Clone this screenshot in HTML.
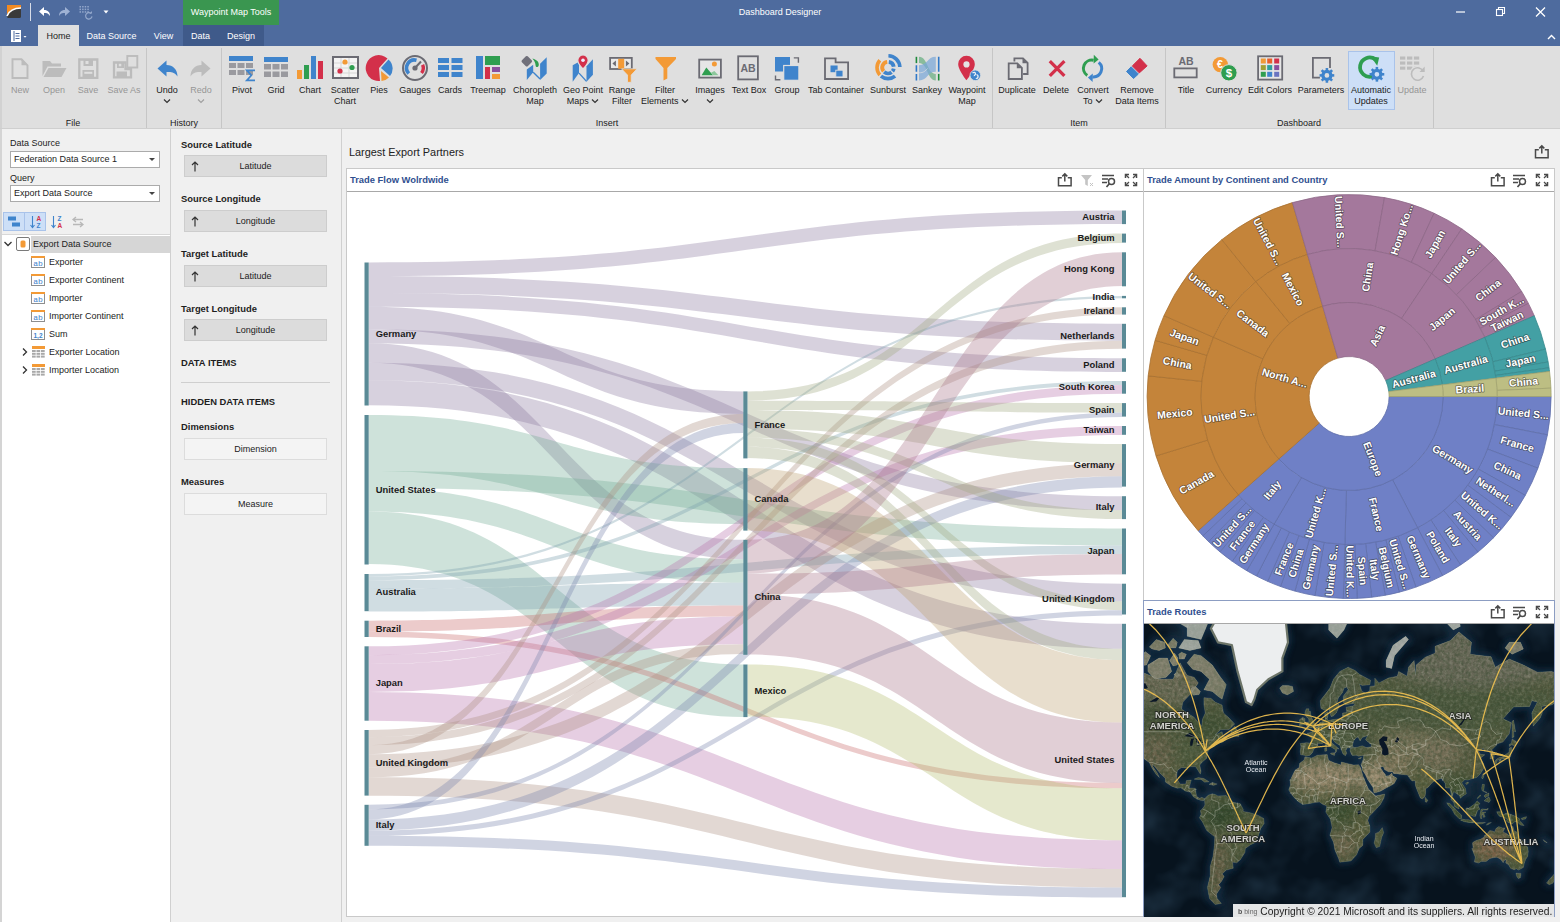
<!DOCTYPE html><html><head><meta charset="utf-8"><title>Dashboard Designer</title><style>
*{box-sizing:border-box;margin:0;padding:0}
html,body{width:1560px;height:922px;overflow:hidden;background:#f0f0f0;font-family:"Liberation Sans",sans-serif;font-size:9px;color:#222}
.abs{position:absolute}
#title{position:absolute;left:0;top:0;width:1560px;height:46px;background:#4e6b9e}
#title .apptitle{position:absolute;left:0;width:1560px;top:6.500px;text-align:center;color:#fff;font-size:9px}
#ctx{position:absolute;left:183px;top:0;width:96px;height:25px;background:#3a9650;color:#fff;text-align:center;line-height:25px;font-size:9px}
#ctxtabs{position:absolute;left:183px;top:25px;width:81px;height:21px;background:#3f5a8a}
.tab{position:absolute;top:25px;height:21px;line-height:22px;color:#fff;font-size:9px;text-align:center}
#hometab{position:absolute;left:38px;top:25px;width:41px;height:21px;background:#dfdfdf;color:#222;text-align:center;line-height:22px}
#ribbon{position:absolute;left:0;top:46px;width:1560px;height:82px;background:#dfdfdf;border-left:2px solid #d2d2d2}
#ribbonline{position:absolute;left:0;top:128px;width:1560px;height:1px;background:#cfcfcf}
.rb{position:absolute;top:0;text-align:center;font-size:9px;line-height:11px;color:#222;white-space:nowrap}
.rb.dis{color:#969696}
.rb svg{position:absolute;left:50%;margin-left:-16px;top:6px}
  .rb .lbl{position:absolute;left:-40px;right:-40px;top:39px;text-align:center;line-height:11px}
.gsep{position:absolute;top:48px;width:1px;height:80px;background:#c6c6c6}
.glbl{position:absolute;top:117.500px;font-size:9px;color:#222;text-align:center;width:100px;margin-left:-50px}
#leftp{position:absolute;left:0;top:129px;width:170px;height:793px;background:#f0f0f0;border-left:2px solid #d4d4d4}
#midp{position:absolute;left:171px;top:129px;width:170px;height:793px;background:#f0f0f0}
.vsep{position:absolute;top:129px;width:1px;height:793px;background:#d0d0d0}
.combo{position:absolute;left:10px;width:150px;height:17px;background:#fff;border:1px solid #ababab;line-height:15px;padding-left:3px;font-size:9px}
.combo:after{content:"";position:absolute;right:4px;top:6px;border:3px solid transparent;border-top:3px solid #444;border-bottom:0}
#tree{position:absolute;left:2px;top:234px;width:168px;height:688px;background:#fff;border-top:1px solid #d8d8d8}
.trow{position:absolute;left:0;height:18px;line-height:18px;font-size:9px;white-space:nowrap}
.sec{position:absolute;left:181px;font-weight:bold;font-size:9.400px;color:#1e1e1e}
.ditem{position:absolute;left:184px;width:143px;height:22px;background:#dcdcdc;border:1px solid #cdcdcd;text-align:center;line-height:20px;font-size:9px;color:#222}
.ditem.ph{background:#f4f4f4;border:1px solid #dcdcdc}
.panel{position:absolute;background:#fff;border:1px solid #c9c9c9}
.ptitle{position:absolute;left:3px;top:4.800px;font-weight:bold;font-size:9.400px;color:#30508f;white-space:nowrap}
.phead{position:absolute;left:0;top:0;right:0;height:23px;border-bottom:1px solid #a8a8a8;background:#fff}

.sk{font:bold 9.400px "Liberation Sans",sans-serif;fill:#1a1a1a}
.sb{font:bold 10.500px "Liberation Sans",sans-serif;fill:#fff;paint-order:stroke;stroke:rgba(40,40,40,.55);stroke-width:1.600px;stroke-linejoin:round}
.mbig{font:bold 9.500px "Liberation Sans",sans-serif;fill:#d0d0cc;paint-order:stroke;stroke:rgba(30,30,30,.7);stroke-width:1.800px;letter-spacing:0}
.msm{font:7px "Liberation Sans",sans-serif;fill:#e8ecf2}
</style></head><body>
<div id="title"><div class="apptitle">Dashboard Designer</div></div>
<div id="ctx">Waypoint Map Tools</div><div id="ctxtabs"></div>
<div id="hometab">Home</div>
<div class="tab" style="left:80px;width:63px">Data Source</div>
<div class="tab" style="left:145px;width:37px">View</div>
<div class="tab" style="left:183px;width:35px">Data</div>
<div class="tab" style="left:218px;width:46px">Design</div>
<svg class="abs" style="left:0;top:0" width="130" height="46" viewBox="0 0 130 46"><rect x="7" y="5" width="14" height="13" rx="1.500" fill="#3a3a3a"/><path d="M7 5h14v3C13 8 9 11 7 15z" fill="#f28a22"/><path d="M7 16c2-5 7-8 14-8" fill="none" stroke="#fff" stroke-width="1.600"/><rect x="30" y="3" width="1" height="18" fill="#d8dde8"/><path d="M39 11.500l5-4.500v3c4 0 6 2.500 6 6-1.500-2.500-3-3-6-3v3z" fill="#fff"/><path d="M70 11.500l-5-4.500v3c-4 0-6 2.500-6 6 1.500-2.500 3-3 6-3v3z" fill="#9fb2d4"/><rect x="79.5" y="6.0" width="1.500" height="1.500" fill="#93a7cb"/><rect x="82.1" y="6.0" width="1.500" height="1.500" fill="#93a7cb"/><rect x="84.7" y="6.0" width="1.500" height="1.500" fill="#93a7cb"/><rect x="87.3" y="6.0" width="1.500" height="1.500" fill="#93a7cb"/><rect x="79.5" y="8.6" width="1.500" height="1.500" fill="#93a7cb"/><rect x="82.1" y="8.6" width="1.500" height="1.500" fill="#93a7cb"/><rect x="84.7" y="8.6" width="1.500" height="1.500" fill="#93a7cb"/><rect x="87.3" y="8.6" width="1.500" height="1.500" fill="#93a7cb"/><rect x="79.5" y="11.2" width="1.500" height="1.500" fill="#93a7cb"/><rect x="82.1" y="11.2" width="1.500" height="1.500" fill="#93a7cb"/><rect x="84.7" y="11.2" width="1.500" height="1.500" fill="#93a7cb"/><rect x="87.3" y="11.2" width="1.500" height="1.500" fill="#93a7cb"/><path d="M91 13.500a3.200 3.200 0 1 0 1 2.800" fill="none" stroke="#93a7cb" stroke-width="1.200"/><path d="M89.500 13.500h2.500v-2.500z" fill="#93a7cb"/><path d="M103.500 10.500h5l-2.500 3z" fill="#fff"/><rect x="11.500" y="30.500" width="9" height="11" fill="#fff" stroke="#fff"/><path d="M14 31v10M15.500 33.500h4M15.500 36h4M15.500 38.500h4" stroke="#4e6b9e" stroke-width="1"/><path d="M23.500 36h3l-1.500 1.800z" fill="#fff"/></svg>
<svg class="abs" style="left:1440px;top:0" width="120" height="46" viewBox="0 0 120 46"><path d="M16 12h9" stroke="#fff" stroke-width="1.200"/><rect x="56.500" y="9.500" width="6" height="6" fill="none" stroke="#fff" stroke-width="1.100"/><path d="M58.500 9.500v-2h6v6h-2" fill="none" stroke="#fff" stroke-width="1.100"/><path d="M96 7.500l9 9M105 7.500l-9 9" stroke="#fff" stroke-width="1.300"/><path d="M108 39l3.500-3.500L115 39" fill="none" stroke="#fff" stroke-width="1.400"/></svg>
<div id="ribbon"><div class="abs" style="left:1346px;top:5px;width:47px;height:59px;background:#cddff7;border:1px solid #a9c3ea"></div>
<div class="rb dis" style="left:18px;width:0"><svg width="32" height="32" viewBox="0 0 32 32"><path d="M8.5 7.300h9l6 6v12.700H8.5z" fill="none" stroke="#bcbcbc" stroke-width="1.900"/><path d="M17.500 7.300v6h6z" fill="#bcbcbc"/></svg><div class="lbl">New</div></div>
<div class="rb dis" style="left:52px;width:0"><svg width="32" height="32" viewBox="0 0 32 32"><path d="M4.500 9h7.500l2 2.500h9v3H9.500l-5 9.500z" fill="#bcbcbc"/><path d="M10.500 16h18l-5 9H5.500z" fill="#bcbcbc"/></svg><div class="lbl">Open</div></div>
<div class="rb dis" style="left:86px;width:0"><svg width="32" height="32" viewBox="0 0 32 32"><path d="M7.300 7.500h18v18.300h-18z" fill="none" stroke="#bcbcbc" stroke-width="2.300"/><rect x="11.500" y="7.500" width="9.500" height="6.500" fill="#bcbcbc"/><rect x="13.500" y="9" width="3" height="3" fill="#dfdfdf"/><rect x="10.500" y="18" width="11.500" height="7.800" fill="#bcbcbc"/><rect x="12.300" y="19.800" width="8" height="2" fill="#dfdfdf"/></svg><div class="lbl">Save</div></div>
<div class="rb dis" style="left:122px;width:0"><svg width="32" height="32" viewBox="0 0 32 32"><path d="M6 10.500h11.500v6.500h5.500v8.300H6z" fill="none" stroke="#bcbcbc" stroke-width="2.300"/><rect x="9" y="10.500" width="7" height="5.500" fill="#bcbcbc"/><rect x="10.800" y="11.800" width="2.500" height="2.500" fill="#dfdfdf"/><rect x="8.500" y="19.500" width="10.500" height="6" fill="#bcbcbc"/><rect x="19.300" y="4" width="10" height="11.500" fill="none" stroke="#bcbcbc" stroke-width="1.900"/></svg><div class="lbl">Save As</div></div>
<div class="rb" style="left:165px;width:0"><svg width="32" height="32" viewBox="0 0 32 32"><path d="M6.500 16.500L15.500 8.500V13C22 13 26.500 17.500 26.500 24.500C23.500 20 20.500 19.700 15.500 20V24.500Z" fill="#3f84cc"/></svg><div class="lbl">Undo<br><svg width="8" height="6" viewBox="0 0 8 6" style="position:static;margin:0;display:inline-block;vertical-align:0px"><path d="M1 1.500l3 3 3-3" fill="none" stroke="#333" stroke-width="1.200"/></svg></div></div>
<div class="rb dis" style="left:199px;width:0"><svg width="32" height="32" viewBox="0 0 32 32"><path d="M25.500 16.500L16.500 8.500V13C10 13 5.500 17.500 5.500 24.500C8.500 20 11.500 19.700 16.500 20V24.500Z" fill="#bcbcbc"/></svg><div class="lbl">Redo<br><svg width="8" height="6" viewBox="0 0 8 6" style="position:static;margin:0;display:inline-block;vertical-align:0px"><path d="M1 1.500l3 3 3-3" fill="none" stroke="#a0a0a0" stroke-width="1.200"/></svg></div></div>
<div class="rb" style="left:240px;width:0"><svg width="32" height="32" viewBox="0 0 32 32"><rect x="3" y="4" width="24" height="5" fill="#3f84cc"/><rect x="3.0" y="11" width="7" height="5" fill="#9a9a9f"/><rect x="11.5" y="11" width="7" height="5" fill="#9a9a9f"/><rect x="20.0" y="11" width="7" height="5" fill="#9a9a9f"/><rect x="3.0" y="18" width="7" height="5" fill="#9a9a9f"/><rect x="11.5" y="18" width="7" height="5" fill="#9a9a9f"/><rect x="20.0" y="18" width="7" height="5" fill="#9a9a9f"/><rect x="3" y="25" width="7" height="0" fill="#9a9a9f"/><path d="M29 18.300H20.800l4.600 5-4.600 5H29" fill="none" stroke="#3f84cc" stroke-width="1.700"/></svg><div class="lbl">Pivot</div></div>
<div class="rb" style="left:274px;width:0"><svg width="32" height="32" viewBox="0 0 32 32"><rect x="4" y="5" width="24" height="5" fill="#3f84cc"/><rect x="4.0" y="12.0" width="7" height="5.500" fill="#9a9a9f"/><rect x="12.5" y="12.0" width="7" height="5.500" fill="#9a9a9f"/><rect x="21.0" y="12.0" width="7" height="5.500" fill="#9a9a9f"/><rect x="4.0" y="19.5" width="7" height="5.500" fill="#9a9a9f"/><rect x="12.5" y="19.5" width="7" height="5.500" fill="#9a9a9f"/><rect x="21.0" y="19.5" width="7" height="5.500" fill="#9a9a9f"/></svg><div class="lbl">Grid</div></div>
<div class="rb" style="left:308px;width:0"><svg width="32" height="32" viewBox="0 0 32 32"><rect x="3" y="18" width="5" height="9" fill="#f39a36"/><rect x="10" y="13" width="5" height="14" fill="#2f9e50"/><rect x="17" y="4" width="5" height="23" fill="#3f84cc"/><rect x="24" y="9" width="5" height="18" fill="#d3304a"/></svg><div class="lbl">Chart</div></div>
<div class="rb" style="left:343px;width:0"><svg width="32" height="32" viewBox="0 0 32 32"><rect x="4" y="5" width="25" height="21" fill="#f4f4f4" stroke="#6b6b73" stroke-width="2"/><path d="M5 11h23M5 16h23M5 21h23M12 6v19M20 6v19" stroke="#d6d6d6" stroke-width="1"/><circle cx="16" cy="10" r="2.600" fill="#f39a36"/><circle cx="23" cy="15.500" r="2.600" fill="#2f9e50"/><circle cx="11" cy="19" r="2.600" fill="#d3304a"/></svg><div class="lbl">Scatter<br>Chart</div></div>
<div class="rb" style="left:377px;width:0"><svg width="32" height="32" viewBox="0 0 32 32"><path d="M16 16 L24.500 6.500 A13 13 0 1 0 17 29 Z" fill="#d3304a"/><path d="M18 16 L25.500 7.500 A12 12 0 0 1 27 24 Z" fill="#3f84cc"/><path d="M18 19 L26 25.500 A12 12 0 0 1 18.500 29 Z" fill="#f39a36"/></svg><div class="lbl">Pies</div></div>
<div class="rb" style="left:413px;width:0"><svg width="32" height="32" viewBox="0 0 32 32"><circle cx="16" cy="16" r="12" fill="none" stroke="#6b6b73" stroke-width="2"/><path d="M9.800 21.500 A8 8 0 0 1 17.500 8.200" fill="none" stroke="#3f84cc" stroke-width="3.600"/><path d="M23.600 12.800 A8 8 0 0 1 22.500 21" fill="none" stroke="#d3304a" stroke-width="3.400"/><circle cx="16" cy="16" r="2.600" fill="#6b6b73"/><path d="M16 16 L22 9.500" stroke="#6b6b73" stroke-width="2"/></svg><div class="lbl">Gauges</div></div>
<div class="rb" style="left:448px;width:0"><svg width="32" height="32" viewBox="0 0 32 32"><rect x="4.0" y="6" width="11" height="5" fill="#3f84cc"/><rect x="17.5" y="6" width="11" height="5" fill="#3f84cc"/><rect x="4.0" y="13" width="11" height="5" fill="#3f84cc"/><rect x="17.5" y="13" width="11" height="5" fill="#3f84cc"/><rect x="4.0" y="20" width="11" height="5" fill="#3f84cc"/><rect x="17.5" y="20" width="11" height="5" fill="#3f84cc"/></svg><div class="lbl">Cards</div></div>
<div class="rb" style="left:486px;width:0"><svg width="32" height="32" viewBox="0 0 32 32"><rect x="4" y="4" width="7" height="23" fill="#3f84cc"/><rect x="13" y="4" width="15" height="9" fill="#2f9e50"/><rect x="13" y="15" width="5" height="12" fill="#d3304a"/><rect x="20" y="15" width="8" height="5" fill="#8a4f9e"/><rect x="20" y="22" width="8" height="5" fill="#f39a36"/></svg><div class="lbl">Treemap</div></div>
<div class="rb" style="left:533px;width:0"><svg width="32" height="32" viewBox="0 0 32 32"><path d="M7.800 17.600L14.200 12.700V20.200L7.800 28z" fill="#3f84cc"/><path d="M14.200 20.200L21.100 26.900" stroke="#3f84cc" stroke-width="1.400" fill="none"/><path d="M21.100 11.800L27.700 5.200V21.400L21.100 28z" fill="#3f84cc"/><rect x="3.700" y="5.150" width="8.200" height="8.200" rx="1.300" fill="#70707a" transform="rotate(45 7.800 9.250)"/><path d="M13.400 6.400C18 7.500 20.500 10.500 19.700 13.500C19 15.800 16.800 15.500 16.600 13.500C16.500 11 15.500 8.500 13.400 6.400z" fill="#2f9e50"/></svg><div class="lbl">Choropleth<br>Map</div></div>
<div class="rb" style="left:581px;width:0"><svg width="32" height="32" viewBox="0 0 32 32"><path d="M5.700 13.300L12 9.800V21.100L5.700 29.700z" fill="#3f84cc"/><path d="M12 21.100L19.500 29.400" stroke="#3f84cc" stroke-width="1.400" fill="none"/><path d="M19.500 14.200L25.900 7.200V22.800L19.500 29.700z" fill="#3f84cc"/><path d="M16 3a5.200 5.200 0 0 1 5.200 5.200c0 3.500-5.200 8.800-5.200 8.800s-5.200-5.300-5.200-8.800A5.200 5.200 0 0 1 16 3z" fill="#d3304a" stroke="#dfdfdf" stroke-width="1.200"/><circle cx="16" cy="8.200" r="1.800" fill="#eef"/></svg><div class="lbl">Geo Point<br>Maps <svg width="8" height="6" viewBox="0 0 8 6" style="position:static;margin:0;display:inline-block;vertical-align:0px"><path d="M1 1.500l3 3 3-3" fill="none" stroke="#333" stroke-width="1.200"/></svg></div></div>
<div class="rb" style="left:620px;width:0"><svg width="32" height="32" viewBox="0 0 32 32"><rect x="4.100" y="5.900" width="21.700" height="11.100" fill="#e9e9e9" stroke="#6b6b73" stroke-width="1.800"/><rect x="12.200" y="6.800" width="6" height="10" fill="#f39a36"/><path d="M6.400 11.500l3.500-2.900v5.800zM23.400 11.500l-3.500-2.900v5.800z" fill="#6b6b73"/><path d="M15.500 16.800h15.500l-5.800 6.300v7.200h-3.700v-7.200z" fill="#f39a36" stroke="#dfdfdf" stroke-width=".8"/></svg><div class="lbl">Range<br>Filter</div></div>
<div class="rb" style="left:663px;width:0"><svg width="32" height="32" viewBox="0 0 32 32"><path d="M6.500 5h20.500v2l-8.700 9v10.500l-3.800 2v-12.500l-8-9z" fill="#f39a36"/></svg><div class="lbl">Filter<br>Elements <svg width="8" height="6" viewBox="0 0 8 6" style="position:static;margin:0;display:inline-block;vertical-align:0px"><path d="M1 1.500l3 3 3-3" fill="none" stroke="#333" stroke-width="1.200"/></svg></div></div>
<div class="rb" style="left:708px;width:0"><svg width="32" height="32" viewBox="0 0 32 32"><rect x="5.200" y="7.600" width="21.700" height="18" fill="#e6e6e6" stroke="#6b6b73" stroke-width="1.800"/><circle cx="20.400" cy="12.100" r="2.500" fill="#f39a36"/><path d="M7.600 23.300l4.700-7.800 6.700 7.800z" fill="#2f9e50"/><path d="M17 20.800l3.400-1.900 4 4.400h-5.200z" fill="#8cc79b"/></svg><div class="lbl">Images<br><svg width="8" height="6" viewBox="0 0 8 6" style="position:static;margin:0;display:inline-block;vertical-align:0px"><path d="M1 1.500l3 3 3-3" fill="none" stroke="#333" stroke-width="1.200"/></svg></div></div>
<div class="rb" style="left:747px;width:0"><svg width="32" height="32" viewBox="0 0 32 32"><rect x="5.200" y="4.300" width="19.700" height="23.100" fill="none" stroke="#6b6b73" stroke-width="1.800"/><text x="15" y="19.500" font-family="Liberation Sans,sans-serif" font-weight="bold" font-size="10.500" fill="#6b6b73" text-anchor="middle">AB</text></svg><div class="lbl">Text Box</div></div>
<div class="rb" style="left:785px;width:0"><svg width="32" height="32" viewBox="0 0 32 32"><rect x="4" y="5" width="15" height="14.500" fill="#3f84cc"/><rect x="12.700" y="13.500" width="15.200" height="14.800" fill="#3f84cc" stroke="#dfdfdf" stroke-width="1.200"/><path d="M22.800 5.900h4.600v4.900M4.500 23.600v4.200h4.900" fill="none" stroke="#6b6b73" stroke-width="1.400"/></svg><div class="lbl">Group</div></div>
<div class="rb" style="left:834px;width:0"><svg width="32" height="32" viewBox="0 0 32 32"><path d="M5 27V6.300h10.600v4.100h12.500v16.600z" fill="none" stroke="#6b6b73" stroke-width="1.800"/><rect x="10.500" y="13.500" width="7.100" height="6.700" fill="#3f84cc"/><rect x="15.800" y="18.200" width="7.200" height="6.700" fill="#3f84cc" stroke="#dfdfdf" stroke-width=".9"/></svg><div class="lbl">Tab Container</div></div>
<div class="rb" style="left:886px;width:0"><svg width="32" height="32" viewBox="0 0 32 32"><path d="M11.56 19.33A5.8 5.8 0 0 1 15.19 9.86" fill="none" stroke="#f39a36" stroke-width="3.8"/><path d="M16.81 9.86A5.8 5.8 0 0 1 21.74 14.79" fill="none" stroke="#3f84cc" stroke-width="3.8"/><path d="M21.71 16.61A5.8 5.8 0 0 1 20.44 19.33" fill="none" stroke="#3f84cc" stroke-width="3.8"/><path d="M19.57 20.17A5.8 5.8 0 0 1 12.12 19.91" fill="none" stroke="#3f84cc" stroke-width="3.8"/><path d="M7.83 22.96A11 11 0 0 1 7.83 8.24" fill="none" stroke="#f39a36" stroke-width="3.6"/><path d="M16.42 3.71A11.9 11.9 0 0 1 27.88 14.98" fill="none" stroke="#3f84cc" stroke-width="3.6"/><path d="M23.07 24.03A11 11 0 0 1 8.93 24.03" fill="none" stroke="#3f84cc" stroke-width="3.6"/></svg><div class="lbl">Sunburst</div></div>
<div class="rb" style="left:925px;width:0"><svg width="32" height="32" viewBox="0 0 32 32"><path d="M8 4.800C17 4.800 16 21.900 24.800 21.900v6.600C16 28.500 17 11.100 8 11.100z" fill="#7fb894" opacity=".9"/><path d="M8 13.200C17 13.200 16 4.800 24.800 4.800v15C16 19.800 17 28.500 8 28.500z" fill="#7aa7d8" opacity=".72"/><path d="M8 20.800C13 20.800 14 19 16.500 16.500" stroke="#dfdfdf" stroke-width=".7" fill="none"/><path d="M5.400 4.800v6.300" stroke="#1f8a3c" stroke-width="1.600"/><path d="M5.400 13.200v6.600M5.400 21.900v6.600M27.700 4.800v15" stroke="#2f78c8" stroke-width="1.600"/><path d="M27.700 21.900v6.600" stroke="#1f8a3c" stroke-width="1.600"/></svg><div class="lbl">Sankey</div></div>
<div class="rb" style="left:965px;width:0"><svg width="32" height="32" viewBox="0 0 32 32"><path d="M15.500 3.800a8.300 8.300 0 0 1 8.300 8.300c0 6-8.300 16.200-8.300 16.200s-8.300-10.200-8.300-16.200a8.300 8.300 0 0 1 8.300-8.300z" fill="#d3304a"/><circle cx="15.500" cy="12.400" r="3.100" fill="#e4e4e4"/><circle cx="24.300" cy="23.300" r="5.300" fill="#3f84cc" stroke="#dfdfdf" stroke-width=".8"/><path d="M21.500 21c1.500-1.200 3-.5 3 .8s-1.500 1-1.200 2.400M25.500 22.500c1 .3 1.800 1.200 1.500 2.500s-1.500 1.800-2 1" stroke="#e8eef6" stroke-width="1.300" fill="none"/></svg><div class="lbl">Waypoint<br>Map</div></div>
<div class="rb" style="left:1015px;width:0"><svg width="32" height="32" viewBox="0 0 32 32"><path d="M13.400 9.500V6.300h8.600l4.600 4.600v11.100h-4.500" fill="none" stroke="#6b6b73" stroke-width="1.800"/><path d="M21.500 6.300v5h5z" fill="#6b6b73"/><path d="M7.700 11.300h8.600l4.600 4.600v11.100H7.700z" fill="none" stroke="#6b6b73" stroke-width="1.800"/><path d="M15.800 11.300v5h5z" fill="#6b6b73"/></svg><div class="lbl">Duplicate</div></div>
<div class="rb" style="left:1054px;width:0"><svg width="32" height="32" viewBox="0 0 32 32"><path d="M9.800 9.200l14.600 14.600M24.400 9.200L9.800 23.800" stroke="#d3304a" stroke-width="3.300"/></svg><div class="lbl">Delete</div></div>
<div class="rb" style="left:1091px;width:0"><svg width="32" height="32" viewBox="0 0 32 32"><path d="M10.300 23.400A8.300 8.300 0 0 1 16.600 8.300" fill="none" stroke="#2f9e50" stroke-width="3"/><path d="M16.800 2.800l4.800 4.600-5 4z" fill="#2f9e50"/><path d="M21.700 10.300A8.300 8.300 0 0 1 15.400 24.900" fill="none" stroke="#3f84cc" stroke-width="3"/><path d="M15.800 21.600l-4.900 4 4.700 4.300z" fill="#3f84cc"/></svg><div class="lbl">Convert<br>To <svg width="8" height="6" viewBox="0 0 8 6" style="position:static;margin:0;display:inline-block;vertical-align:0px"><path d="M1 1.500l3 3 3-3" fill="none" stroke="#333" stroke-width="1.200"/></svg></div></div>
<div class="rb" style="left:1135px;width:0"><svg width="32" height="32" viewBox="0 0 32 32"><path d="M19 6.300L26.100 13.900L18.300 20.900L11.300 13.900z" fill="#d3304a" stroke="#d3304a" stroke-width="1" stroke-linejoin="round"/><path d="M10.200 14.800L17.400 22L12.500 26.500L5.500 19.500z" fill="#3f84cc" stroke="#3f84cc" stroke-width="1" stroke-linejoin="round"/></svg><div class="lbl">Remove<br>Data Items</div></div>
<div class="rb" style="left:1184px;width:0"><svg width="32" height="32" viewBox="0 0 32 32"><text x="16" y="12.600" font-family="Liberation Sans,sans-serif" font-weight="bold" font-size="10.500" fill="#6b6b73" text-anchor="middle">AB</text><rect x="4.300" y="16.400" width="22.400" height="9" fill="none" stroke="#6b6b73" stroke-width="1.800"/></svg><div class="lbl">Title</div></div>
<div class="rb" style="left:1222px;width:0"><svg width="32" height="32" viewBox="0 0 32 32"><circle cx="12.300" cy="12.600" r="7.700" fill="#f39a36"/><text x="12" y="16.300" font-family="Liberation Sans,sans-serif" font-weight="bold" font-size="10.500" fill="#fff" text-anchor="middle">€</text><circle cx="20.900" cy="20.800" r="8.200" fill="#2f9e50" stroke="#dfdfdf" stroke-width="1"/><text x="20.900" y="25" font-family="Liberation Sans,sans-serif" font-weight="bold" font-size="11.500" fill="#fff" text-anchor="middle">$</text></svg><div class="lbl">Currency</div></div>
<div class="rb" style="left:1268px;width:0"><svg width="32" height="32" viewBox="0 0 32 32"><rect x="4.100" y="4.300" width="24.100" height="23.300" fill="#e6e6e6" stroke="#6b6b73" stroke-width="1.800"/><rect x="6.8" y="6.5" width="5" height="5" fill="#f09a37"/><rect x="13.2" y="6.5" width="5" height="5" fill="#e8602c"/><rect x="20.2" y="6.5" width="5" height="5" fill="#d3304a"/><rect x="6.8" y="13.1" width="5" height="5" fill="#a2a034"/><rect x="13.2" y="13.1" width="5" height="5" fill="#2f9e9a"/><rect x="20.2" y="13.1" width="5" height="5" fill="#8a4f9e"/><rect x="6.8" y="19.8" width="5" height="5" fill="#2f9e50"/><rect x="13.2" y="19.8" width="5" height="5" fill="#3f84cc"/><rect x="20.2" y="19.8" width="5" height="5" fill="#6a74c0"/></svg><div class="lbl">Edit Colors</div></div>
<div class="rb" style="left:1319px;width:0"><svg width="32" height="32" viewBox="0 0 32 32"><path d="M25 16V5.800H7.900v19.800h7" fill="none" stroke="#6b6b73" stroke-width="1.800"/><circle cx="21.9" cy="23.4" r="3.968" fill="none" stroke="#3f84cc" stroke-width="3.2"/><rect x="26.70" y="22.12" width="2.56" height="2.56" fill="#3f84cc" transform="rotate(0 27.98 23.40)"/><rect x="24.92" y="26.42" width="2.56" height="2.56" fill="#3f84cc" transform="rotate(45 26.20 27.70)"/><rect x="20.62" y="28.20" width="2.56" height="2.56" fill="#3f84cc" transform="rotate(90 21.90 29.48)"/><rect x="16.32" y="26.42" width="2.56" height="2.56" fill="#3f84cc" transform="rotate(135 17.60 27.70)"/><rect x="14.54" y="22.12" width="2.56" height="2.56" fill="#3f84cc" transform="rotate(180 15.82 23.40)"/><rect x="16.32" y="17.82" width="2.56" height="2.56" fill="#3f84cc" transform="rotate(225 17.60 19.10)"/><rect x="20.62" y="16.04" width="2.56" height="2.56" fill="#3f84cc" transform="rotate(270 21.90 17.32)"/><rect x="24.92" y="17.82" width="2.56" height="2.56" fill="#3f84cc" transform="rotate(315 26.20 19.10)"/></svg><div class="lbl">Parameters</div></div>
<div class="rb" style="left:1369px;width:0"><svg width="32" height="32" viewBox="0 0 32 32"><path d="M17.500 24.300A9.600 9.600 0 1 1 20.500 7.500" fill="none" stroke="#2f9e50" stroke-width="3.800"/><path d="M15.500 4.200l8.700 1.300-2 8.200z" fill="#2f9e50"/><circle cx="21.9" cy="22.3" r="3.968" fill="none" stroke="#3f84cc" stroke-width="3.2"/><rect x="26.70" y="21.02" width="2.56" height="2.56" fill="#3f84cc" transform="rotate(0 27.98 22.30)"/><rect x="24.92" y="25.32" width="2.56" height="2.56" fill="#3f84cc" transform="rotate(45 26.20 26.60)"/><rect x="20.62" y="27.10" width="2.56" height="2.56" fill="#3f84cc" transform="rotate(90 21.90 28.38)"/><rect x="16.32" y="25.32" width="2.56" height="2.56" fill="#3f84cc" transform="rotate(135 17.60 26.60)"/><rect x="14.54" y="21.02" width="2.56" height="2.56" fill="#3f84cc" transform="rotate(180 15.82 22.30)"/><rect x="16.32" y="16.72" width="2.56" height="2.56" fill="#3f84cc" transform="rotate(225 17.60 18.00)"/><rect x="20.62" y="14.94" width="2.56" height="2.56" fill="#3f84cc" transform="rotate(270 21.90 16.22)"/><rect x="24.92" y="16.72" width="2.56" height="2.56" fill="#3f84cc" transform="rotate(315 26.20 18.00)"/></svg><div class="lbl">Automatic<br>Updates</div></div>
<div class="rb dis" style="left:1410px;width:0"><svg width="32" height="32" viewBox="0 0 32 32"><rect x="4" y="4.5" width="5.300" height="3.100" fill="#bcbcbc"/><rect x="4" y="9.5" width="5.300" height="3.100" fill="#bcbcbc"/><rect x="4" y="14.6" width="5.300" height="3.100" fill="#bcbcbc"/><rect x="11" y="4.5" width="5.300" height="3.100" fill="#bcbcbc"/><rect x="11" y="9.5" width="5.300" height="3.100" fill="#bcbcbc"/><rect x="11" y="14.6" width="5.300" height="3.100" fill="#bcbcbc"/><rect x="17.9" y="4.5" width="5.300" height="3.100" fill="#bcbcbc"/><rect x="17.9" y="9.5" width="5.300" height="3.100" fill="#bcbcbc"/><rect x="17.9" y="14.6" width="5.300" height="3.100" fill="#bcbcbc"/><circle cx="21.500" cy="21.800" r="7.800" fill="#dfdfdf"/><path d="M27.300 19.500a6.200 6.200 0 1 0 .2 4.500" fill="none" stroke="#bcbcbc" stroke-width="1.600"/><path d="M23.500 20h5.200v-5.500z" fill="#bcbcbc"/></svg><div class="lbl">Update</div></div></div><div id="ribbonline"></div>
<div class="gsep" style="left:146px"></div>
<div class="gsep" style="left:221px"></div>
<div class="gsep" style="left:992px"></div>
<div class="gsep" style="left:1165px"></div>
<div class="gsep" style="left:1433px"></div>
<div class="glbl" style="left:73px">File</div>
<div class="glbl" style="left:184px">History</div>
<div class="glbl" style="left:607px">Insert</div>
<div class="glbl" style="left:1079px">Item</div>
<div class="glbl" style="left:1299px">Dashboard</div>
<div id="leftp"></div><div class="vsep" style="left:170px"></div><div id="midp"></div><div class="vsep" style="left:341px"></div>
<div class="abs" style="left:10px;top:137.500px">Data Source</div>
<div class="combo" style="top:151px">Federation Data Source 1</div>
<div class="abs" style="left:10px;top:172.500px">Query</div>
<div class="combo" style="top:185px">Export Data Source</div>
<div class="abs" style="left:3px;top:212px;width:43px;height:19px;background:#cddff7;border:1px solid #a9c3ea"></div><div class="abs" style="left:24px;top:212px;width:1px;height:19px;background:#a9c3ea"></div>
<svg class="abs" style="left:6px;top:214px" width="80" height="16" viewBox="0 0 80 16"><rect x="2" y="2.500" width="8" height="4" fill="#3f84cc"/><rect x="6" y="8.500" width="8" height="4" fill="#3f84cc"/><path d="M26.500 2v11M24.500 11l2 2.500 2-2.500" fill="none" stroke="#3f84cc" stroke-width="1.100"/><text x="30.500" y="7" font-size="6.500" font-weight="bold" fill="#d3304a" font-family="Liberation Sans,sans-serif">A</text><text x="30.500" y="14" font-size="6.500" font-weight="bold" fill="#3f84cc" font-family="Liberation Sans,sans-serif">Z</text><path d="M47.500 2v11M45.500 11l2 2.500 2-2.500" fill="none" stroke="#3f84cc" stroke-width="1.100"/><text x="51.500" y="7" font-size="6.500" font-weight="bold" fill="#3f84cc" font-family="Liberation Sans,sans-serif">Z</text><text x="51.500" y="14" font-size="6.500" font-weight="bold" fill="#d3304a" font-family="Liberation Sans,sans-serif">A</text><path d="M77 5.500H67M70 3l-3 2.500 3 2.500M67 10.500h10M74 8l3 2.500-3 2.500" fill="none" stroke="#b8b8b8" stroke-width="1.300"/></svg>
<div id="tree"></div>
<div class="abs" style="left:31px;top:236px;width:139px;height:17px;background:#d6d6d6"></div>
<svg class="abs" style="left:2.500px;top:239px" width="10" height="10" viewBox="0 0 10 10"><path d="M1.500 3l3.500 3.500L8.500 3" fill="none" stroke="#333" stroke-width="1.300"/></svg>
<svg class="abs" style="left:16px;top:237px" width="14" height="14" viewBox="0 0 14 14"><rect x=".5" y=".5" width="13" height="13" rx="1.500" fill="#fff" stroke="#7a7a7a"/><rect x="4.500" y="3.500" width="5" height="7" rx="1.500" fill="#f39a36"/></svg>
<div class="trow" style="left:33px;top:235px">Export Data Source</div>
<svg class="abs" style="left:31px;top:255px" width="14" height="14" viewBox="0 0 14 14"><rect x=".5" y="1.500" width="13" height="11" fill="#fff" stroke="#8e8e8e"/><rect x="0" y="1" width="14" height="2" fill="#f39a36"/><text x="7" y="10.500" font-size="8" fill="#3f84cc" text-anchor="middle" font-family="Liberation Mono,monospace">ab</text></svg>
<div class="trow" style="left:49px;top:253px">Exporter</div>
<svg class="abs" style="left:31px;top:273px" width="14" height="14" viewBox="0 0 14 14"><rect x=".5" y="1.500" width="13" height="11" fill="#fff" stroke="#8e8e8e"/><rect x="0" y="1" width="14" height="2" fill="#f39a36"/><text x="7" y="10.500" font-size="8" fill="#3f84cc" text-anchor="middle" font-family="Liberation Mono,monospace">ab</text></svg>
<div class="trow" style="left:49px;top:271px">Exporter Continent</div>
<svg class="abs" style="left:31px;top:291px" width="14" height="14" viewBox="0 0 14 14"><rect x=".5" y="1.500" width="13" height="11" fill="#fff" stroke="#8e8e8e"/><rect x="0" y="1" width="14" height="2" fill="#f39a36"/><text x="7" y="10.500" font-size="8" fill="#3f84cc" text-anchor="middle" font-family="Liberation Mono,monospace">ab</text></svg>
<div class="trow" style="left:49px;top:289px">Importer</div>
<svg class="abs" style="left:31px;top:309px" width="14" height="14" viewBox="0 0 14 14"><rect x=".5" y="1.500" width="13" height="11" fill="#fff" stroke="#8e8e8e"/><rect x="0" y="1" width="14" height="2" fill="#f39a36"/><text x="7" y="10.500" font-size="8" fill="#3f84cc" text-anchor="middle" font-family="Liberation Mono,monospace">ab</text></svg>
<div class="trow" style="left:49px;top:307px">Importer Continent</div>
<svg class="abs" style="left:31px;top:327px" width="14" height="14" viewBox="0 0 14 14"><rect x=".5" y="1.500" width="13" height="11" fill="#fff" stroke="#8e8e8e"/><rect x="0" y="1" width="14" height="2" fill="#f39a36"/><text x="7" y="10.500" font-size="6.500" fill="#3f84cc" text-anchor="middle" font-family="Liberation Sans,sans-serif" font-weight="bold">1,2</text></svg>
<div class="trow" style="left:49px;top:325px">Sum</div>
<svg class="abs" style="left:20px;top:347px" width="10" height="10" viewBox="0 0 10 10"><path d="M3 1.500L6.500 5 3 8.500" fill="none" stroke="#333" stroke-width="1.300"/></svg>
<svg class="abs" style="left:32px;top:346px" width="13" height="12" viewBox="0 0 13 12"><rect x="0" y="0" width="13" height="3" fill="#f39a36"/><rect x="0.0" y="4.0" width="3.700" height="2" fill="#a8a8a8"/><rect x="4.5" y="4.0" width="3.700" height="2" fill="#a8a8a8"/><rect x="9.0" y="4.0" width="3.700" height="2" fill="#a8a8a8"/><rect x="0.0" y="6.8" width="3.700" height="2" fill="#a8a8a8"/><rect x="4.5" y="6.8" width="3.700" height="2" fill="#a8a8a8"/><rect x="9.0" y="6.8" width="3.700" height="2" fill="#a8a8a8"/><rect x="0.0" y="9.6" width="3.700" height="2" fill="#a8a8a8"/><rect x="4.5" y="9.6" width="3.700" height="2" fill="#a8a8a8"/><rect x="9.0" y="9.6" width="3.700" height="2" fill="#a8a8a8"/></svg>
<div class="trow" style="left:49px;top:343px">Exporter Location</div>
<svg class="abs" style="left:20px;top:365px" width="10" height="10" viewBox="0 0 10 10"><path d="M3 1.500L6.500 5 3 8.500" fill="none" stroke="#333" stroke-width="1.300"/></svg>
<svg class="abs" style="left:32px;top:364px" width="13" height="12" viewBox="0 0 13 12"><rect x="0" y="0" width="13" height="3" fill="#f39a36"/><rect x="0.0" y="4.0" width="3.700" height="2" fill="#a8a8a8"/><rect x="4.5" y="4.0" width="3.700" height="2" fill="#a8a8a8"/><rect x="9.0" y="4.0" width="3.700" height="2" fill="#a8a8a8"/><rect x="0.0" y="6.8" width="3.700" height="2" fill="#a8a8a8"/><rect x="4.5" y="6.8" width="3.700" height="2" fill="#a8a8a8"/><rect x="9.0" y="6.8" width="3.700" height="2" fill="#a8a8a8"/><rect x="0.0" y="9.6" width="3.700" height="2" fill="#a8a8a8"/><rect x="4.5" y="9.6" width="3.700" height="2" fill="#a8a8a8"/><rect x="9.0" y="9.6" width="3.700" height="2" fill="#a8a8a8"/></svg>
<div class="trow" style="left:49px;top:361px">Importer Location</div>
<div class="sec" style="top:139px">Source Latitude</div><div class="ditem" style="top:155px"><svg class="abs" style="left:6px;top:5px" width="8" height="11" viewBox="0 0 8 11"><path d="M4 1v9.500M1 4l3-3 3 3" fill="none" stroke="#333" stroke-width="1.200"/></svg>Latitude</div>
<div class="sec" style="top:193px">Source Longitude</div><div class="ditem" style="top:210px"><svg class="abs" style="left:6px;top:5px" width="8" height="11" viewBox="0 0 8 11"><path d="M4 1v9.500M1 4l3-3 3 3" fill="none" stroke="#333" stroke-width="1.200"/></svg>Longitude</div>
<div class="sec" style="top:248px">Target Latitude</div><div class="ditem" style="top:265px"><svg class="abs" style="left:6px;top:5px" width="8" height="11" viewBox="0 0 8 11"><path d="M4 1v9.500M1 4l3-3 3 3" fill="none" stroke="#333" stroke-width="1.200"/></svg>Latitude</div>
<div class="sec" style="top:303px">Target Longitude</div><div class="ditem" style="top:319px"><svg class="abs" style="left:6px;top:5px" width="8" height="11" viewBox="0 0 8 11"><path d="M4 1v9.500M1 4l3-3 3 3" fill="none" stroke="#333" stroke-width="1.200"/></svg>Longitude</div>
<div class="sec" style="top:357px">DATA ITEMS</div><div class="abs" style="left:181px;top:382px;width:149px;height:1px;background:#cfcfcf"></div>
<div class="sec" style="top:396px">HIDDEN DATA ITEMS</div>
<div class="sec" style="top:421px">Dimensions</div><div class="ditem ph" style="top:438px">Dimension</div>
<div class="sec" style="top:476px">Measures</div><div class="ditem ph" style="top:493px">Measure</div>
<div class="abs" style="left:349px;top:146px;font-size:10.900px;color:#222;white-space:nowrap">Largest Export Partners</div>
<svg class="abs" style="left:1534px;top:145px;overflow:visible" width="15" height="15" viewBox="0 0 15 15"><path d="M4.800 4.700H1.500v8h12.600v-8H10.800M7.800 8.500V1M5.300 3.400l2.500-2.500 2.500 2.500" fill="none" stroke="#4a4a4a" stroke-width="1.500"/></svg>
<div class="panel" style="left:346px;top:168px;width:798px;height:749px"><div class="phead"><div class="ptitle">Trade Flow Wolrdwide</div></div></div>
<svg class="abs" style="left:1057px;top:173px;overflow:visible" width="15" height="15" viewBox="0 0 15 15"><path d="M4.800 4.700H1.500v8h12.600v-8H10.800M7.800 8.500V1M5.300 3.400l2.500-2.500 2.500 2.500" fill="none" stroke="#4a4a4a" stroke-width="1.500"/></svg>
<svg class="abs" style="left:1080px;top:173px;overflow:visible" width="15" height="15" viewBox="0 0 15 15"><path d="M1 2h11l-4.200 5v6l-2.600-1.500V7z" fill="#c4c4c4"/><path d="M10 10l3 3M13 10l-3 3" stroke="#c4c4c4" stroke-width="1"/></svg>
<svg class="abs" style="left:1101px;top:173px;overflow:visible" width="15" height="15" viewBox="0 0 15 15"><path d="M1 2.500h12M1 6h6M1 9.500h5" stroke="#4a4a4a" stroke-width="1.500"/><circle cx="10.500" cy="8.500" r="3" fill="none" stroke="#4a4a4a" stroke-width="1.500"/><path d="M8.300 10.800L5.500 14" stroke="#4a4a4a" stroke-width="1.700"/></svg>
<svg class="abs" style="left:1124px;top:173px;overflow:visible" width="15" height="15" viewBox="0 0 15 15"><path d="M1.500 5V1.500H5M9 1.500h3.500V5M12.500 9v3.500H9M5 12.500H1.500V9" fill="none" stroke="#4a4a4a" stroke-width="1.500"/><path d="M2 2l3 3M12 2L9 5M12 12L9 9M2 12l3-3" stroke="#4a4a4a" stroke-width="1.300"/></svg>
<svg class="abs" style="left:348px;top:192px" width="794" height="723" viewBox="348 192 794 723">
<path d="M368.7 262.5C745.4 262.5 745.4 210.5 1122.0 210.5V224.1C745.4 224.1 745.4 276.1 368.7 276.1Z" fill="rgb(141,124,161)" fill-opacity="0.35"/>
<path d="M368.7 276.1C745.4 276.1 745.4 323.8 1122.0 323.8V340.8C745.4 340.8 745.4 293.1 368.7 293.1Z" fill="rgb(141,124,161)" fill-opacity="0.35"/>
<path d="M368.7 293.1C745.4 293.1 745.4 358.3 1122.0 358.3V371.9C745.4 371.9 745.4 306.7 368.7 306.7Z" fill="rgb(141,124,161)" fill-opacity="0.35"/>
<path d="M368.7 306.7C556.0 306.7 556.0 391.4 743.3 391.4V413.9C556.0 413.9 556.0 329.2 368.7 329.2Z" fill="rgb(141,124,161)" fill-opacity="0.35"/>
<path d="M368.7 329.2C745.4 329.2 745.4 496.2 1122.0 496.2V510.2C745.4 510.2 745.4 343.2 368.7 343.2Z" fill="rgb(141,124,161)" fill-opacity="0.35"/>
<path d="M368.7 343.2C556.0 343.2 556.0 539.8 743.3 539.8V559.3C556.0 559.3 556.0 362.7 368.7 362.7Z" fill="rgb(141,124,161)" fill-opacity="0.35"/>
<path d="M368.7 362.7C745.4 362.7 745.4 583.7 1122.0 583.7V601.2C745.4 601.2 745.4 380.2 368.7 380.2Z" fill="rgb(141,124,161)" fill-opacity="0.35"/>
<path d="M368.7 380.2C745.4 380.2 745.4 623.8 1122.0 623.8V648.8C745.4 648.8 745.4 405.2 368.7 405.2Z" fill="rgb(141,124,161)" fill-opacity="0.35"/>
<path d="M368.7 415.0C556.0 415.0 556.0 468.1 743.3 468.1V524.1C556.0 524.1 556.0 471.0 368.7 471.0Z" fill="rgb(115,172,149)" fill-opacity="0.35"/>
<path d="M368.7 471.0C745.4 471.0 745.4 528.5 1122.0 528.5V545.5C745.4 545.5 745.4 488.0 368.7 488.0Z" fill="rgb(115,172,149)" fill-opacity="0.35"/>
<path d="M368.7 488.0C556.0 488.0 556.0 559.3 743.3 559.3V582.8C556.0 582.8 556.0 511.5 368.7 511.5Z" fill="rgb(115,172,149)" fill-opacity="0.35"/>
<path d="M368.7 511.5C556.0 511.5 556.0 664.5 743.3 664.5V717.0C556.0 717.0 556.0 564.0 368.7 564.0Z" fill="rgb(115,172,149)" fill-opacity="0.35"/>
<path d="M368.7 574.0C745.4 574.0 745.4 295.9 1122.0 295.9V298.3C745.4 298.3 745.4 576.4 368.7 576.4Z" fill="rgb(121,158,172)" fill-opacity="0.35"/>
<path d="M368.7 576.4C745.4 576.4 745.4 381.1 1122.0 381.1V384.9C745.4 384.9 745.4 580.2 368.7 580.2Z" fill="rgb(121,158,172)" fill-opacity="0.35"/>
<path d="M368.7 580.2C745.4 580.2 745.4 545.5 1122.0 545.5V554.0C745.4 554.0 745.4 588.7 368.7 588.7Z" fill="rgb(121,158,172)" fill-opacity="0.35"/>
<path d="M368.7 588.7C556.0 588.7 556.0 582.8 743.3 582.8V605.6C556.0 605.6 556.0 611.5 368.7 611.5Z" fill="rgb(121,158,172)" fill-opacity="0.35"/>
<path d="M368.7 620.7C556.0 620.7 556.0 605.6 743.3 605.6V616.5C556.0 616.5 556.0 631.6 368.7 631.6Z" fill="rgb(201,106,106)" fill-opacity="0.35"/>
<path d="M368.7 631.6C745.4 631.6 745.4 782.9 1122.0 782.9V788.3C745.4 788.3 745.4 637.0 368.7 637.0Z" fill="rgb(201,106,106)" fill-opacity="0.35"/>
<path d="M368.7 646.3C745.4 646.3 745.4 384.9 1122.0 384.9V393.8C745.4 393.8 745.4 655.2 368.7 655.2Z" fill="rgb(184,115,172)" fill-opacity="0.35"/>
<path d="M368.7 655.2C745.4 655.2 745.4 426.0 1122.0 426.0V434.9C745.4 434.9 745.4 664.1 368.7 664.1Z" fill="rgb(184,115,172)" fill-opacity="0.35"/>
<path d="M368.7 664.1C556.0 664.1 556.0 616.5 743.3 616.5V644.3C556.0 644.3 556.0 691.9 368.7 691.9Z" fill="rgb(184,115,172)" fill-opacity="0.35"/>
<path d="M368.7 691.9C745.4 691.9 745.4 840.3 1122.0 840.3V869.1C745.4 869.1 745.4 720.7 368.7 720.7Z" fill="rgb(184,115,172)" fill-opacity="0.35"/>
<path d="M368.7 730.0C745.4 730.0 745.4 307.3 1122.0 307.3V314.5C745.4 314.5 745.4 737.2 368.7 737.2Z" fill="rgb(172,144,129)" fill-opacity="0.35"/>
<path d="M368.7 737.2C745.4 737.2 745.4 340.8 1122.0 340.8V348.8C745.4 348.8 745.4 745.2 368.7 745.2Z" fill="rgb(172,144,129)" fill-opacity="0.35"/>
<path d="M368.7 745.2C556.0 745.2 556.0 413.9 743.3 413.9V422.9C556.0 422.9 556.0 754.2 368.7 754.2Z" fill="rgb(172,144,129)" fill-opacity="0.35"/>
<path d="M368.7 754.2C745.4 754.2 745.4 462.9 1122.0 462.9V476.2C745.4 476.2 745.4 767.5 368.7 767.5Z" fill="rgb(172,144,129)" fill-opacity="0.35"/>
<path d="M368.7 767.5C556.0 767.5 556.0 644.3 743.3 644.3V654.1C556.0 654.1 556.0 777.3 368.7 777.3Z" fill="rgb(172,144,129)" fill-opacity="0.35"/>
<path d="M368.7 777.3C745.4 777.3 745.4 869.1 1122.0 869.1V887.6C745.4 887.6 745.4 795.8 368.7 795.8Z" fill="rgb(172,144,129)" fill-opacity="0.35"/>
<path d="M368.7 804.8C745.4 804.8 745.4 412.5 1122.0 412.5V417.1C745.4 417.1 745.4 809.4 368.7 809.4Z" fill="rgb(121,132,172)" fill-opacity="0.35"/>
<path d="M368.7 809.4C556.0 809.4 556.0 422.9 743.3 422.9V432.9C556.0 432.9 556.0 819.4 368.7 819.4Z" fill="rgb(121,132,172)" fill-opacity="0.35"/>
<path d="M368.7 819.4C745.4 819.4 745.4 476.2 1122.0 476.2V487.4C745.4 487.4 745.4 830.6 368.7 830.6Z" fill="rgb(121,132,172)" fill-opacity="0.35"/>
<path d="M368.7 830.6C745.4 830.6 745.4 610.2 1122.0 610.2V615.4C745.4 615.4 745.4 835.8 368.7 835.8Z" fill="rgb(121,132,172)" fill-opacity="0.35"/>
<path d="M368.7 835.8C745.4 835.8 745.4 887.6 1122.0 887.6V897.6C745.4 897.6 745.4 845.8 368.7 845.8Z" fill="rgb(121,132,172)" fill-opacity="0.35"/>
<path d="M747.5 391.4C934.8 391.4 934.8 233.6 1122.0 233.6V242.9C934.8 242.9 934.8 400.7 747.5 400.7Z" fill="rgb(161,169,129)" fill-opacity="0.35"/>
<path d="M747.5 400.7C934.8 400.7 934.8 403.1 1122.0 403.1V412.5C934.8 412.5 934.8 410.1 747.5 410.1Z" fill="rgb(161,169,129)" fill-opacity="0.35"/>
<path d="M747.5 410.1C934.8 410.1 934.8 444.1 1122.0 444.1V462.9C934.8 462.9 934.8 428.9 747.5 428.9Z" fill="rgb(161,169,129)" fill-opacity="0.35"/>
<path d="M747.5 428.9C934.8 428.9 934.8 510.2 1122.0 510.2V519.1C934.8 519.1 934.8 437.8 747.5 437.8Z" fill="rgb(161,169,129)" fill-opacity="0.35"/>
<path d="M747.5 437.8C934.8 437.8 934.8 601.2 1122.0 601.2V610.2C934.8 610.2 934.8 446.8 747.5 446.8Z" fill="rgb(161,169,129)" fill-opacity="0.35"/>
<path d="M747.5 446.8C934.8 446.8 934.8 648.8 1122.0 648.8V660.1C934.8 660.1 934.8 458.1 747.5 458.1Z" fill="rgb(161,169,129)" fill-opacity="0.35"/>
<path d="M747.5 468.1C934.8 468.1 934.8 660.1 1122.0 660.1V722.6C934.8 722.6 934.8 530.6 747.5 530.6Z" fill="rgb(189,161,112)" fill-opacity="0.35"/>
<path d="M747.5 539.8C934.8 539.8 934.8 252.3 1122.0 252.3V286.1C934.8 286.1 934.8 573.6 747.5 573.6Z" fill="rgb(169,118,138)" fill-opacity="0.35"/>
<path d="M747.5 573.6C934.8 573.6 934.8 554.0 1122.0 554.0V574.6C934.8 574.6 934.8 594.2 747.5 594.2Z" fill="rgb(169,118,138)" fill-opacity="0.35"/>
<path d="M747.5 594.2C934.8 594.2 934.8 722.6 1122.0 722.6V782.9C934.8 782.9 934.8 654.5 747.5 654.5Z" fill="rgb(169,118,138)" fill-opacity="0.35"/>
<path d="M747.5 664.5C934.8 664.5 934.8 788.3 1122.0 788.3V840.3C934.8 840.3 934.8 716.5 747.5 716.5Z" fill="rgb(181,189,112)" fill-opacity="0.35"/>
<rect x="364.5" y="262.5" width="4.2" height="143.0" fill="#5a8a96"/>
<rect x="364.5" y="415.0" width="4.2" height="149.5" fill="#5a8a96"/>
<rect x="364.5" y="574.0" width="4.2" height="37.2" fill="#5a8a96"/>
<rect x="364.5" y="620.7" width="4.2" height="16.3" fill="#5a8a96"/>
<rect x="364.5" y="646.3" width="4.2" height="74.4" fill="#5a8a96"/>
<rect x="364.5" y="730.0" width="4.2" height="65.6" fill="#5a8a96"/>
<rect x="364.5" y="804.8" width="4.2" height="41.0" fill="#5a8a96"/>
<rect x="743.3" y="391.4" width="4.2" height="67.0" fill="#5a8a96"/>
<rect x="743.3" y="468.1" width="4.2" height="62.5" fill="#5a8a96"/>
<rect x="743.3" y="539.8" width="4.2" height="115.0" fill="#5a8a96"/>
<rect x="743.3" y="664.5" width="4.2" height="52.6" fill="#5a8a96"/>
<rect x="1122.0" y="210.5" width="4.0" height="13.6" fill="#5a8a96"/>
<rect x="1122.0" y="233.6" width="4.0" height="9.0" fill="#5a8a96"/>
<rect x="1122.0" y="252.3" width="4.0" height="34.0" fill="#5a8a96"/>
<rect x="1122.0" y="295.9" width="4.0" height="2.4" fill="#5a8a96"/>
<rect x="1122.0" y="307.3" width="4.0" height="7.3" fill="#5a8a96"/>
<rect x="1122.0" y="323.8" width="4.0" height="24.8" fill="#5a8a96"/>
<rect x="1122.0" y="358.3" width="4.0" height="13.5" fill="#5a8a96"/>
<rect x="1122.0" y="381.1" width="4.0" height="12.6" fill="#5a8a96"/>
<rect x="1122.0" y="403.1" width="4.0" height="13.5" fill="#5a8a96"/>
<rect x="1122.0" y="426.0" width="4.0" height="8.8" fill="#5a8a96"/>
<rect x="1122.0" y="444.1" width="4.0" height="42.5" fill="#5a8a96"/>
<rect x="1122.0" y="496.2" width="4.0" height="22.9" fill="#5a8a96"/>
<rect x="1122.0" y="528.5" width="4.0" height="45.8" fill="#5a8a96"/>
<rect x="1122.0" y="583.7" width="4.0" height="30.8" fill="#5a8a96"/>
<rect x="1122.0" y="623.8" width="4.0" height="273.4" fill="#5a8a96"/>
<text x="375.7" y="336.8" class="sk">Germany</text>
<text x="375.7" y="492.6" class="sk">United States</text>
<text x="375.7" y="595.4" class="sk">Australia</text>
<text x="375.7" y="631.6" class="sk">Brazil</text>
<text x="375.7" y="686.3" class="sk">Japan</text>
<text x="375.7" y="765.6" class="sk">United Kingdom</text>
<text x="375.7" y="828.1" class="sk">Italy</text>
<text x="754.5" y="427.7" class="sk">France</text>
<text x="754.5" y="502.2" class="sk">Canada</text>
<text x="754.5" y="600.1" class="sk">China</text>
<text x="754.5" y="693.6" class="sk">Mexico</text>
<text x="1114.5" y="220.1" text-anchor="end" class="sk">Austria</text>
<text x="1114.5" y="240.9" text-anchor="end" class="sk">Belgium</text>
<text x="1114.5" y="272.1" text-anchor="end" class="sk">Hong Kong</text>
<text x="1114.5" y="299.9" text-anchor="end" class="sk">India</text>
<text x="1114.5" y="313.8" text-anchor="end" class="sk">Ireland</text>
<text x="1114.5" y="339.0" text-anchor="end" class="sk">Netherlands</text>
<text x="1114.5" y="367.9" text-anchor="end" class="sk">Poland</text>
<text x="1114.5" y="390.2" text-anchor="end" class="sk">South Korea</text>
<text x="1114.5" y="412.7" text-anchor="end" class="sk">Spain</text>
<text x="1114.5" y="433.2" text-anchor="end" class="sk">Taiwan</text>
<text x="1114.5" y="468.2" text-anchor="end" class="sk">Germany</text>
<text x="1114.5" y="510.4" text-anchor="end" class="sk">Italy</text>
<text x="1114.5" y="554.2" text-anchor="end" class="sk">Japan</text>
<text x="1114.5" y="601.9" text-anchor="end" class="sk">United Kingdom</text>
<text x="1114.5" y="763.3" text-anchor="end" class="sk">United States</text>
</svg>
<div class="panel" style="left:1143px;top:168px;width:412px;height:433px"><div class="phead"><div class="ptitle">Trade Amount by Continent and Country</div></div></div>
<svg class="abs" style="left:1490px;top:173px;overflow:visible" width="15" height="15" viewBox="0 0 15 15"><path d="M4.800 4.700H1.500v8h12.600v-8H10.800M7.800 8.500V1M5.300 3.400l2.500-2.500 2.500 2.500" fill="none" stroke="#4a4a4a" stroke-width="1.500"/></svg>
<svg class="abs" style="left:1512px;top:173px;overflow:visible" width="15" height="15" viewBox="0 0 15 15"><path d="M1 2.500h12M1 6h6M1 9.500h5" stroke="#4a4a4a" stroke-width="1.500"/><circle cx="10.500" cy="8.500" r="3" fill="none" stroke="#4a4a4a" stroke-width="1.500"/><path d="M8.300 10.800L5.500 14" stroke="#4a4a4a" stroke-width="1.700"/></svg>
<svg class="abs" style="left:1535px;top:173px;overflow:visible" width="15" height="15" viewBox="0 0 15 15"><path d="M1.500 5V1.500H5M9 1.500h3.500V5M12.500 9v3.500H9M5 12.500H1.500V9" fill="none" stroke="#4a4a4a" stroke-width="1.500"/><path d="M2 2l3 3M12 2L9 5M12 12L9 9M2 12l3-3" stroke="#4a4a4a" stroke-width="1.300"/></svg>
<svg class="abs" style="left:1145px;top:192px" width="408" height="407" viewBox="1145 192 408 407">
<path d="M1551.10 396.50A202 202 0 0 1 1547.43 434.84L1494.41 424.59A148 148 0 0 0 1497.10 396.50Z" fill="rgb(111,128,198)" stroke="rgb(95,110,170)" stroke-width="0.8"/>
<path d="M1547.43 434.84A202 202 0 0 1 1537.95 468.19L1487.47 449.03A148 148 0 0 0 1494.41 424.59Z" fill="rgb(111,128,198)" stroke="rgb(95,110,170)" stroke-width="0.8"/>
<path d="M1537.95 468.19A202 202 0 0 1 1525.22 495.42L1478.14 468.98A148 148 0 0 0 1487.47 449.03Z" fill="rgb(111,128,198)" stroke="rgb(95,110,170)" stroke-width="0.8"/>
<path d="M1525.22 495.42A202 202 0 0 1 1510.93 517.39L1467.67 485.08A148 148 0 0 0 1478.14 468.98Z" fill="rgb(111,128,198)" stroke="rgb(95,110,170)" stroke-width="0.8"/>
<path d="M1510.93 517.39A202 202 0 0 1 1493.37 537.88L1454.81 500.09A148 148 0 0 0 1467.67 485.08Z" fill="rgb(111,128,198)" stroke="rgb(95,110,170)" stroke-width="0.8"/>
<path d="M1493.37 537.88A202 202 0 0 1 1477.94 552.08L1443.49 510.49A148 148 0 0 0 1454.81 500.09Z" fill="rgb(111,128,198)" stroke="rgb(95,110,170)" stroke-width="0.8"/>
<path d="M1477.94 552.08A202 202 0 0 1 1460.59 564.94L1430.79 519.91A148 148 0 0 0 1443.49 510.49Z" fill="rgb(111,128,198)" stroke="rgb(95,110,170)" stroke-width="0.8"/>
<path d="M1460.59 564.94A202 202 0 0 1 1442.53 575.60L1417.55 527.72A148 148 0 0 0 1430.79 519.91Z" fill="rgb(111,128,198)" stroke="rgb(95,110,170)" stroke-width="0.8"/>
<path d="M1497.10 396.50A148 148 0 0 1 1417.55 527.72L1392.58 479.84A94 94 0 0 0 1443.10 396.50Z" fill="rgb(111,128,198)" stroke="rgb(95,110,170)" stroke-width="0.8"/>
<path d="M1442.53 575.60A202 202 0 0 1 1415.94 587.12L1398.07 536.16A148 148 0 0 0 1417.55 527.72Z" fill="rgb(111,128,198)" stroke="rgb(95,110,170)" stroke-width="0.8"/>
<path d="M1415.94 587.12A202 202 0 0 1 1399.25 592.17L1385.85 539.87A148 148 0 0 0 1398.07 536.16Z" fill="rgb(111,128,198)" stroke="rgb(95,110,170)" stroke-width="0.8"/>
<path d="M1399.25 592.17A202 202 0 0 1 1385.24 595.24L1375.58 542.11A148 148 0 0 0 1385.85 539.87Z" fill="rgb(111,128,198)" stroke="rgb(95,110,170)" stroke-width="0.8"/>
<path d="M1385.24 595.24A202 202 0 0 1 1371.66 597.24L1365.63 543.57A148 148 0 0 0 1375.58 542.11Z" fill="rgb(111,128,198)" stroke="rgb(95,110,170)" stroke-width="0.8"/>
<path d="M1371.66 597.24A202 202 0 0 1 1357.20 598.34L1355.03 544.38A148 148 0 0 0 1365.63 543.57Z" fill="rgb(111,128,198)" stroke="rgb(95,110,170)" stroke-width="0.8"/>
<path d="M1357.20 598.34A202 202 0 0 1 1343.31 598.42L1344.86 544.44A148 148 0 0 0 1355.03 544.38Z" fill="rgb(111,128,198)" stroke="rgb(95,110,170)" stroke-width="0.8"/>
<path d="M1417.55 527.72A148 148 0 0 1 1344.86 544.44L1346.41 490.46A94 94 0 0 0 1392.58 479.84Z" fill="rgb(111,128,198)" stroke="rgb(95,110,170)" stroke-width="0.8"/>
<path d="M1343.31 598.42A202 202 0 0 1 1314.94 595.59L1324.07 542.37A148 148 0 0 0 1344.86 544.44Z" fill="rgb(111,128,198)" stroke="rgb(95,110,170)" stroke-width="0.8"/>
<path d="M1314.94 595.59A202 202 0 0 1 1294.92 591.10L1309.40 539.08A148 148 0 0 0 1324.07 542.37Z" fill="rgb(111,128,198)" stroke="rgb(95,110,170)" stroke-width="0.8"/>
<path d="M1294.92 591.10A202 202 0 0 1 1280.52 586.50L1298.85 535.71A148 148 0 0 0 1309.40 539.08Z" fill="rgb(111,128,198)" stroke="rgb(95,110,170)" stroke-width="0.8"/>
<path d="M1280.52 586.50A202 202 0 0 1 1267.63 581.34L1289.41 531.93A148 148 0 0 0 1298.85 535.71Z" fill="rgb(111,128,198)" stroke="rgb(95,110,170)" stroke-width="0.8"/>
<path d="M1267.63 581.34A202 202 0 0 1 1256.49 576.02L1281.25 528.03A148 148 0 0 0 1289.41 531.93Z" fill="rgb(111,128,198)" stroke="rgb(95,110,170)" stroke-width="0.8"/>
<path d="M1256.49 576.02A202 202 0 0 1 1246.77 570.66L1274.12 524.10A148 148 0 0 0 1281.25 528.03Z" fill="rgb(111,128,198)" stroke="rgb(95,110,170)" stroke-width="0.8"/>
<path d="M1344.86 544.44A148 148 0 0 1 1274.12 524.10L1301.48 477.55A94 94 0 0 0 1346.41 490.46Z" fill="rgb(111,128,198)" stroke="rgb(95,110,170)" stroke-width="0.8"/>
<path d="M1246.77 570.66A202 202 0 0 1 1232.26 561.28L1263.49 517.23A148 148 0 0 0 1274.12 524.10Z" fill="rgb(111,128,198)" stroke="rgb(95,110,170)" stroke-width="0.8"/>
<path d="M1232.26 561.28A202 202 0 0 1 1220.03 551.88L1254.53 510.35A148 148 0 0 0 1263.49 517.23Z" fill="rgb(111,128,198)" stroke="rgb(95,110,170)" stroke-width="0.8"/>
<path d="M1220.03 551.88A202 202 0 0 1 1208.55 541.58L1246.12 502.80A148 148 0 0 0 1254.53 510.35Z" fill="rgb(111,128,198)" stroke="rgb(95,110,170)" stroke-width="0.8"/>
<path d="M1208.55 541.58A202 202 0 0 1 1202.90 535.89L1241.98 498.62A148 148 0 0 0 1246.12 502.80Z" fill="rgb(111,128,198)" stroke="rgb(95,110,170)" stroke-width="0.8"/>
<path d="M1202.90 535.89A202 202 0 0 1 1198.09 530.66L1238.46 494.80A148 148 0 0 0 1241.98 498.62Z" fill="rgb(111,128,198)" stroke="rgb(95,110,170)" stroke-width="0.8"/>
<path d="M1274.12 524.10A148 148 0 0 1 1238.46 494.80L1278.83 458.93A94 94 0 0 0 1301.48 477.55Z" fill="rgb(111,128,198)" stroke="rgb(95,110,170)" stroke-width="0.8"/>
<path d="M1443.10 396.50A94 94 0 0 1 1278.83 458.93L1319.20 423.07A40 40 0 0 0 1389.10 396.50Z" fill="rgb(111,128,198)" stroke="rgb(95,110,170)" stroke-width="0.8"/>
<path d="M1198.09 530.66A202 202 0 0 1 1156.04 455.94L1207.65 440.05A148 148 0 0 0 1238.46 494.80Z" fill="rgb(196,132,58)" stroke="rgb(168,113,49)" stroke-width="0.8"/>
<path d="M1156.04 455.94A202 202 0 0 1 1148.16 375.86L1201.87 381.38A148 148 0 0 0 1207.65 440.05Z" fill="rgb(196,132,58)" stroke="rgb(168,113,49)" stroke-width="0.8"/>
<path d="M1148.16 375.86A202 202 0 0 1 1155.07 340.32L1206.94 355.34A148 148 0 0 0 1201.87 381.38Z" fill="rgb(196,132,58)" stroke="rgb(168,113,49)" stroke-width="0.8"/>
<path d="M1155.07 340.32A202 202 0 0 1 1163.98 315.67L1213.47 337.28A148 148 0 0 0 1206.94 355.34Z" fill="rgb(196,132,58)" stroke="rgb(168,113,49)" stroke-width="0.8"/>
<path d="M1238.46 494.80A148 148 0 0 1 1213.47 337.28L1262.95 358.88A94 94 0 0 0 1278.83 458.93Z" fill="rgb(196,132,58)" stroke="rgb(168,113,49)" stroke-width="0.8"/>
<path d="M1163.98 315.67A202 202 0 0 1 1221.82 239.65L1255.84 281.58A148 148 0 0 0 1213.47 337.28Z" fill="rgb(196,132,58)" stroke="rgb(168,113,49)" stroke-width="0.8"/>
<path d="M1213.47 337.28A148 148 0 0 1 1255.84 281.58L1289.87 323.51A94 94 0 0 0 1262.95 358.88Z" fill="rgb(196,132,58)" stroke="rgb(168,113,49)" stroke-width="0.8"/>
<path d="M1221.82 239.65A202 202 0 0 1 1292.40 202.62L1307.56 254.45A148 148 0 0 0 1255.84 281.58Z" fill="rgb(196,132,58)" stroke="rgb(168,113,49)" stroke-width="0.8"/>
<path d="M1255.84 281.58A148 148 0 0 1 1307.56 254.45L1322.71 306.28A94 94 0 0 0 1289.87 323.51Z" fill="rgb(196,132,58)" stroke="rgb(168,113,49)" stroke-width="0.8"/>
<path d="M1278.83 458.93A94 94 0 0 1 1322.71 306.28L1337.87 358.11A40 40 0 0 0 1319.20 423.07Z" fill="rgb(196,132,58)" stroke="rgb(168,113,49)" stroke-width="0.8"/>
<path d="M1292.40 202.62A202 202 0 0 1 1384.48 197.62L1375.02 250.79A148 148 0 0 0 1307.56 254.45Z" fill="rgb(164,120,156)" stroke="rgb(141,103,134)" stroke-width="0.8"/>
<path d="M1384.48 197.62A202 202 0 0 1 1434.08 213.25L1411.37 262.24A148 148 0 0 0 1375.02 250.79Z" fill="rgb(164,120,156)" stroke="rgb(141,103,134)" stroke-width="0.8"/>
<path d="M1434.08 213.25A202 202 0 0 1 1461.75 228.83L1431.64 273.65A148 148 0 0 0 1411.37 262.24Z" fill="rgb(164,120,156)" stroke="rgb(141,103,134)" stroke-width="0.8"/>
<path d="M1307.56 254.45A148 148 0 0 1 1431.64 273.65L1401.52 318.47A94 94 0 0 0 1322.71 306.28Z" fill="rgb(164,120,156)" stroke="rgb(141,103,134)" stroke-width="0.8"/>
<path d="M1461.75 228.83A202 202 0 0 1 1495.62 257.45L1456.45 294.62A148 148 0 0 0 1431.64 273.65Z" fill="rgb(164,120,156)" stroke="rgb(141,103,134)" stroke-width="0.8"/>
<path d="M1495.62 257.45A202 202 0 0 1 1521.64 291.45L1475.51 319.53A148 148 0 0 0 1456.45 294.62Z" fill="rgb(164,120,156)" stroke="rgb(141,103,134)" stroke-width="0.8"/>
<path d="M1521.64 291.45A202 202 0 0 1 1528.37 303.42L1480.45 328.30A148 148 0 0 0 1475.51 319.53Z" fill="rgb(164,120,156)" stroke="rgb(141,103,134)" stroke-width="0.8"/>
<path d="M1528.37 303.42A202 202 0 0 1 1534.28 315.81L1484.78 337.38A148 148 0 0 0 1480.45 328.30Z" fill="rgb(164,120,156)" stroke="rgb(141,103,134)" stroke-width="0.8"/>
<path d="M1431.64 273.65A148 148 0 0 1 1484.78 337.38L1435.27 358.95A94 94 0 0 0 1401.52 318.47Z" fill="rgb(164,120,156)" stroke="rgb(141,103,134)" stroke-width="0.8"/>
<path d="M1322.71 306.28A94 94 0 0 1 1435.27 358.95L1385.77 380.52A40 40 0 0 0 1337.87 358.11Z" fill="rgb(164,120,156)" stroke="rgb(141,103,134)" stroke-width="0.8"/>
<path d="M1534.28 315.81A202 202 0 0 1 1545.46 349.12L1492.97 361.78A148 148 0 0 0 1484.78 337.38Z" fill="rgb(67,160,164)" stroke="rgb(57,137,141)" stroke-width="0.8"/>
<path d="M1545.46 349.12A202 202 0 0 1 1548.12 361.96L1494.92 371.19A148 148 0 0 0 1492.97 361.78Z" fill="rgb(67,160,164)" stroke="rgb(57,137,141)" stroke-width="0.8"/>
<path d="M1548.12 361.96A202 202 0 0 1 1549.04 367.75L1495.59 375.43A148 148 0 0 0 1494.92 371.19Z" fill="rgb(67,160,164)" stroke="rgb(57,137,141)" stroke-width="0.8"/>
<path d="M1549.04 367.75A202 202 0 0 1 1549.54 371.42L1495.95 378.12A148 148 0 0 0 1495.59 375.43Z" fill="rgb(67,160,164)" stroke="rgb(57,137,141)" stroke-width="0.8"/>
<path d="M1484.78 337.38A148 148 0 0 1 1495.95 378.12L1442.37 384.83A94 94 0 0 0 1435.27 358.95Z" fill="rgb(67,160,164)" stroke="rgb(57,137,141)" stroke-width="0.8"/>
<path d="M1435.27 358.95A94 94 0 0 1 1442.37 384.83L1388.79 391.53A40 40 0 0 0 1385.77 380.52Z" fill="rgb(67,160,164)" stroke="rgb(57,137,141)" stroke-width="0.8"/>
<path d="M1549.54 371.42A202 202 0 0 1 1550.93 388.17L1496.97 390.40A148 148 0 0 0 1495.95 378.12Z" fill="rgb(189,190,131)" stroke="rgb(162,163,112)" stroke-width="0.8"/>
<path d="M1550.93 388.17A202 202 0 0 1 1551.10 396.50L1497.10 396.50A148 148 0 0 0 1496.97 390.40Z" fill="rgb(189,190,131)" stroke="rgb(162,163,112)" stroke-width="0.8"/>
<path d="M1495.95 378.12A148 148 0 0 1 1497.10 396.50L1443.10 396.50A94 94 0 0 0 1442.37 384.83Z" fill="rgb(189,190,131)" stroke="rgb(162,163,112)" stroke-width="0.8"/>
<path d="M1442.37 384.83A94 94 0 0 1 1443.10 396.50L1389.10 396.50A40 40 0 0 0 1388.79 391.53Z" fill="rgb(189,190,131)" stroke="rgb(162,163,112)" stroke-width="0.8"/>
<text x="1523.3" y="413.2" transform="rotate(5.5 1523.3 413.2)" dy="3.600" text-anchor="middle" class="sb">United S...</text>
<text x="1517.4" y="444.3" transform="rotate(15.9 1517.4 444.3)" dy="3.600" text-anchor="middle" class="sb">France</text>
<text x="1507.6" y="470.6" transform="rotate(25.1 1507.6 470.6)" dy="3.600" text-anchor="middle" class="sb">China</text>
<text x="1495.8" y="491.9" transform="rotate(33.0 1495.8 491.9)" dy="3.600" text-anchor="middle" class="sb">Netherl...</text>
<text x="1482.0" y="510.4" transform="rotate(40.6 1482.0 510.4)" dy="3.600" text-anchor="middle" class="sb">United K...</text>
<text x="1467.6" y="525.3" transform="rotate(47.4 1467.6 525.3)" dy="3.600" text-anchor="middle" class="sb">Austria</text>
<text x="1453.4" y="537.1" transform="rotate(53.4 1453.4 537.1)" dy="3.600" text-anchor="middle" class="sb">Italy</text>
<text x="1438.0" y="547.2" transform="rotate(59.5 1438.0 547.2)" dy="3.600" text-anchor="middle" class="sb">Poland</text>
<text x="1452.6" y="459.2" transform="rotate(31.2 1452.6 459.2)" dy="3.600" text-anchor="middle" class="sb">Germany</text>
<text x="1418.7" y="557.1" transform="rotate(66.6 1418.7 557.1)" dy="3.600" text-anchor="middle" class="sb">Germany</text>
<text x="1399.8" y="564.0" transform="rotate(73.2 1399.8 564.0)" dy="3.600" text-anchor="middle" class="sb">United S...</text>
<text x="1386.5" y="567.5" transform="rotate(77.7 1386.5 567.5)" dy="3.600" text-anchor="middle" class="sb">Belgium</text>
<text x="1374.5" y="569.6" transform="rotate(81.6 1374.5 569.6)" dy="3.600" text-anchor="middle" class="sb">Italy</text>
<text x="1362.4" y="571.0" transform="rotate(85.6 1362.4 571.0)" dy="3.600" text-anchor="middle" class="sb">Spain</text>
<text x="1350.1" y="571.5" transform="rotate(89.7 1350.1 571.5)" dy="3.600" text-anchor="middle" class="sb">United K...</text>
<text x="1376.2" y="514.4" transform="rotate(77.0 1376.2 514.4)" dy="3.600" text-anchor="middle" class="sb">France</text>
<text x="1331.8" y="570.6" transform="rotate(-84.3 1331.8 570.6)" dy="3.600" text-anchor="middle" class="sb">United S...</text>
<text x="1310.8" y="567.3" transform="rotate(-77.4 1310.8 567.3)" dy="3.600" text-anchor="middle" class="sb">Germany</text>
<text x="1295.9" y="563.2" transform="rotate(-72.3 1295.9 563.2)" dy="3.600" text-anchor="middle" class="sb">China</text>
<text x="1284.1" y="559.0" transform="rotate(-68.2 1284.1 559.0)" dy="3.600" text-anchor="middle" class="sb">France</text>
<text x="1315.7" y="512.8" transform="rotate(-74.0 1315.7 512.8)" dy="3.600" text-anchor="middle" class="sb">United K...</text>
<text x="1254.1" y="543.5" transform="rotate(-57.1 1254.1 543.5)" dy="3.600" text-anchor="middle" class="sb">Germany</text>
<text x="1242.5" y="535.3" transform="rotate(-52.5 1242.5 535.3)" dy="3.600" text-anchor="middle" class="sb">France</text>
<text x="1232.2" y="526.7" transform="rotate(-48.1 1232.2 526.7)" dy="3.600" text-anchor="middle" class="sb">United S...</text>
<text x="1272.3" y="490.0" transform="rotate(-50.6 1272.3 490.0)" dy="3.600" text-anchor="middle" class="sb">Italy</text>
<text x="1372.9" y="459.1" transform="rotate(69.2 1372.9 459.1)" dy="3.600" text-anchor="middle" class="sb">Europe</text>
<text x="1196.6" y="482.3" transform="rotate(-29.4 1196.6 482.3)" dy="3.600" text-anchor="middle" class="sb">Canada</text>
<text x="1174.9" y="413.6" transform="rotate(-5.6 1174.9 413.6)" dy="3.600" text-anchor="middle" class="sb">Mexico</text>
<text x="1177.3" y="363.1" transform="rotate(11.0 1177.3 363.1)" dy="3.600" text-anchor="middle" class="sb">China</text>
<text x="1184.5" y="337.0" transform="rotate(19.9 1184.5 337.0)" dy="3.600" text-anchor="middle" class="sb">Japan</text>
<text x="1229.6" y="415.5" transform="rotate(-9.0 1229.6 415.5)" dy="3.600" text-anchor="middle" class="sb">United S...</text>
<text x="1209.8" y="290.5" transform="rotate(37.3 1209.8 290.5)" dy="3.600" text-anchor="middle" class="sb">United S...</text>
<text x="1252.8" y="323.2" transform="rotate(37.3 1252.8 323.2)" dy="3.600" text-anchor="middle" class="sb">Canada</text>
<text x="1267.8" y="241.5" transform="rotate(62.3 1267.8 241.5)" dy="3.600" text-anchor="middle" class="sb">United S...</text>
<text x="1292.9" y="289.3" transform="rotate(62.3 1292.9 289.3)" dy="3.600" text-anchor="middle" class="sb">Mexico</text>
<text x="1284.7" y="378.0" transform="rotate(16.0 1284.7 378.0)" dy="3.600" text-anchor="middle" class="sb">North A...</text>
<text x="1339.6" y="221.8" transform="rotate(86.9 1339.6 221.8)" dy="3.600" text-anchor="middle" class="sb">United S...</text>
<text x="1401.7" y="229.6" transform="rotate(287.5 1401.7 229.6)" dy="3.600" text-anchor="middle" class="sb">Hong Ko...</text>
<text x="1435.0" y="244.0" transform="rotate(299.4 1435.0 244.0)" dy="3.600" text-anchor="middle" class="sb">Japan</text>
<text x="1367.6" y="276.9" transform="rotate(278.8 1367.6 276.9)" dy="3.600" text-anchor="middle" class="sb">China</text>
<text x="1462.0" y="262.8" transform="rotate(310.2 1462.0 262.8)" dy="3.600" text-anchor="middle" class="sb">United S...</text>
<text x="1488.1" y="290.2" transform="rotate(322.6 1488.1 290.2)" dy="3.600" text-anchor="middle" class="sb">China</text>
<text x="1501.6" y="310.6" transform="rotate(330.6 1501.6 310.6)" dy="3.600" text-anchor="middle" class="sb">South K...</text>
<text x="1507.1" y="321.2" transform="rotate(334.5 1507.1 321.2)" dy="3.600" text-anchor="middle" class="sb">Taiwan</text>
<text x="1442.0" y="319.0" transform="rotate(320.2 1442.0 319.0)" dy="3.600" text-anchor="middle" class="sb">Japan</text>
<text x="1377.5" y="335.8" transform="rotate(295.1 1377.5 335.8)" dy="3.600" text-anchor="middle" class="sb">Asia</text>
<text x="1515.0" y="340.8" transform="rotate(341.4 1515.0 340.8)" dy="3.600" text-anchor="middle" class="sb">China</text>
<text x="1520.5" y="361.0" transform="rotate(348.3 1520.5 361.0)" dy="3.600" text-anchor="middle" class="sb">Japan</text>
<text x="1465.8" y="364.5" transform="rotate(344.7 1465.8 364.5)" dy="3.600" text-anchor="middle" class="sb">Australia</text>
<text x="1413.7" y="378.8" transform="rotate(344.7 1413.7 378.8)" dy="3.600" text-anchor="middle" class="sb">Australia</text>
<text x="1523.5" y="382.0" transform="rotate(355.3 1523.5 382.0)" dy="3.600" text-anchor="middle" class="sb">China</text>
<text x="1469.9" y="389.0" transform="rotate(356.4 1469.9 389.0)" dy="3.600" text-anchor="middle" class="sb">Brazil</text>
</svg>
<div class="panel" style="left:1143px;top:600px;width:412px;height:317px;border-color:#8c9dc2"><div class="phead"><div class="ptitle">Trade Routes</div></div></div>
<svg class="abs" style="left:1490px;top:605px;overflow:visible" width="15" height="15" viewBox="0 0 15 15"><path d="M4.800 4.700H1.500v8h12.600v-8H10.800M7.800 8.500V1M5.300 3.400l2.500-2.500 2.500 2.500" fill="none" stroke="#4a4a4a" stroke-width="1.500"/></svg>
<svg class="abs" style="left:1512px;top:605px;overflow:visible" width="15" height="15" viewBox="0 0 15 15"><path d="M1 2.500h12M1 6h6M1 9.500h5" stroke="#4a4a4a" stroke-width="1.500"/><circle cx="10.500" cy="8.500" r="3" fill="none" stroke="#4a4a4a" stroke-width="1.500"/><path d="M8.300 10.800L5.500 14" stroke="#4a4a4a" stroke-width="1.700"/></svg>
<svg class="abs" style="left:1535px;top:605px;overflow:visible" width="15" height="15" viewBox="0 0 15 15"><path d="M1.500 5V1.500H5M9 1.500h3.500V5M12.500 9v3.500H9M5 12.500H1.500V9" fill="none" stroke="#4a4a4a" stroke-width="1.500"/><path d="M2 2l3 3M12 2L9 5M12 12L9 9M2 12l3-3" stroke="#4a4a4a" stroke-width="1.300"/></svg>
<svg class="abs" style="left:1144px;top:624px" width="410" height="293" viewBox="1144 624 410 293">
<defs><clipPath id="landclip"><path d="M1138.1 733.8L1133.9 727.4L1126.9 713.0L1117.1 705.0L1103.0 702.1L1091.8 713.0L1082.0 705.0L1080.6 686.4L1094.6 667.2L1117.1 671.4L1131.1 671.4L1145.1 673.4L1159.1 679.2L1173.1 679.2L1180.1 662.8L1187.1 675.4L1194.1 677.3L1198.3 682.9L1191.3 693.0L1182.9 702.1L1181.5 709.1L1187.1 713.0L1194.1 717.3L1198.3 722.8L1201.8 726.2L1202.5 719.3L1205.3 713.0L1203.9 705.0L1203.9 697.7L1210.9 698.3L1215.1 702.1L1222.1 705.0L1223.5 713.0L1229.1 718.0L1234.7 724.0L1229.1 729.6L1220.7 729.6L1215.1 734.9L1222.1 731.7L1222.8 735.9L1227.7 738.0L1222.1 742.5L1215.1 742.9L1214.4 746.1L1209.5 748.5L1207.4 753.1L1206.7 758.3L1202.5 761.7L1199.7 765.0L1201.1 771.4L1200.4 774.2L1197.6 769.8L1195.5 766.6L1188.5 766.6L1187.1 768.2L1181.5 767.4L1177.3 770.6L1176.6 778.3L1180.1 784.0L1185.7 784.0L1186.4 780.6L1191.3 780.1L1189.9 785.1L1189.2 788.0L1195.5 788.3L1196.2 793.8L1196.9 796.6L1199.7 798.3L1201.8 797.3L1204.6 798.7L1203.9 800.6L1201.1 800.6L1199.0 799.7L1196.9 799.0L1193.1 796.6L1190.6 792.3L1185.0 790.9L1180.8 787.7L1177.3 788.3L1171.7 786.2L1165.4 782.1L1165.4 778.3L1160.5 773.7L1155.6 767.4L1152.5 764.2L1152.8 766.6L1157.3 773.0L1159.4 777.6L1156.3 774.5L1152.1 768.2L1149.3 762.5L1144.4 759.1L1141.6 754.0L1139.1 748.9L1139.5 741.9Z M1201.1 655.7L1212.3 665.0L1219.3 675.4L1226.3 684.7L1222.1 699.2L1217.9 696.2L1212.3 691.4L1203.9 689.8L1209.5 679.2L1201.1 671.4L1192.7 669.3L1187.1 662.8L1194.1 654.2Z M1147.9 665.0L1159.1 658.1L1167.5 658.1L1171.7 671.4L1166.1 677.3L1154.9 679.2L1147.9 671.4Z M1138.1 662.8L1145.1 651.6L1150.7 655.7L1146.5 665.0L1139.5 665.9Z M1187.1 636.3L1201.1 639.4L1208.1 622.8L1222.1 597.2L1208.1 586.4L1187.1 602.0Z M1178.7 647.9L1189.9 650.6L1201.1 647.9L1198.3 640.6L1184.3 639.4Z M1179.4 659.1L1184.3 659.1L1186.4 654.2L1181.5 652.2L1178.7 654.2Z M1230.5 734.5L1234.7 736.3L1238.9 736.5L1238.9 732.8L1234.7 726.2L1231.9 729.6Z M1194.1 779.1L1198.3 777.6L1203.9 778.6L1209.2 781.8L1204.6 782.2L1201.1 779.5L1195.5 779.5Z M1209.0 784.3L1212.3 782.4L1217.2 784.0L1213.7 785.4Z M1204.6 798.7L1208.1 795.2L1212.3 793.8L1215.1 794.5L1217.9 795.9L1226.3 795.6L1229.1 798.7L1233.3 802.3L1240.3 803.7L1243.2 809.3L1243.2 811.4L1250.2 812.8L1257.2 814.9L1263.7 818.4L1264.2 823.4L1260.7 828.4L1258.6 834.9L1255.8 842.3L1250.2 844.9L1245.3 848.4L1245.0 852.4L1240.3 859.7L1236.8 862.8L1232.6 862.3L1233.3 868.3L1226.3 870.1L1222.1 873.8L1224.2 876.6L1221.4 881.4L1218.6 884.5L1220.7 887.6L1216.5 894.0L1217.2 898.6L1221.4 903.4L1215.1 904.6L1209.5 898.6L1207.4 887.6L1210.2 875.7L1210.2 866.6L1213.0 856.4L1214.4 845.4L1214.7 836.8L1206.7 830.5L1202.5 821.9L1199.4 817.7L1201.1 814.2L1200.4 810.7L1203.2 807.9L1204.9 805.1L1204.6 800.9Z M1304.8 756.9L1311.8 758.0L1317.4 755.2L1327.2 754.5L1328.6 760.3L1334.2 762.8L1341.2 765.0L1341.2 762.0L1348.2 763.7L1353.8 765.0L1358.7 764.7L1360.8 768.2L1362.9 776.0L1365.5 782.1L1368.5 789.0L1373.4 793.8L1375.5 795.9L1384.7 794.1L1384.0 798.0L1380.4 804.4L1373.4 812.1L1369.2 816.3L1367.8 820.5L1369.9 826.2L1369.9 832.0L1362.9 839.3L1362.7 845.4L1359.2 848.4L1356.6 854.8L1351.0 860.9L1344.0 861.7L1339.8 862.3L1338.4 858.1L1334.9 850.0L1333.5 842.3L1330.0 834.9L1332.1 827.6L1330.3 819.1L1325.8 812.1L1326.8 805.8L1323.0 804.5L1319.5 802.0L1314.6 802.6L1309.0 803.7L1302.7 804.5L1297.8 801.2L1294.6 798.0L1292.2 795.2L1289.7 791.6L1288.7 789.9L1290.4 785.1L1290.1 780.6L1292.9 774.5L1295.0 770.3L1299.2 767.4L1299.6 763.3L1304.1 760.0Z M1382.3 827.6L1383.7 832.7L1381.8 837.1L1379.7 846.6L1376.2 847.7L1374.1 843.1L1375.3 837.8L1375.5 833.4L1379.0 832.0Z M1300.6 754.8L1300.2 751.3L1300.9 746.7L1300.3 743.5L1306.2 742.7L1310.7 743.1L1311.5 738.0L1306.9 733.4L1311.1 732.4L1313.5 730.7L1315.6 727.6L1318.1 726.5L1319.8 722.8L1323.0 721.4L1325.4 720.5L1324.7 713.5L1327.9 711.7L1327.9 715.6L1327.2 719.3L1328.6 720.5L1332.1 719.7L1339.1 718.8L1342.6 717.3L1342.6 713.0L1346.8 712.5L1346.1 707.2L1352.4 706.1L1355.2 705.0L1353.1 703.3L1345.4 705.0L1343.3 702.1L1343.3 696.2L1348.2 689.8L1346.8 687.1L1344.0 688.1L1342.6 692.4L1338.4 697.7L1337.0 702.7L1339.5 705.5L1336.3 713.0L1333.2 716.1L1331.1 716.6L1328.9 709.1L1324.4 710.2L1320.9 708.3L1320.2 700.7L1325.1 694.6L1330.0 688.1L1333.5 679.2L1339.8 671.4L1348.2 667.2L1355.2 670.6L1359.4 674.2L1370.6 680.3L1369.9 684.7L1362.2 685.4L1359.4 684.0L1362.0 691.4L1365.7 693.0L1369.7 690.8L1369.9 686.4L1374.8 685.7L1374.8 678.1L1379.0 682.9L1388.2 678.1L1397.3 676.2L1398.7 671.4L1407.1 676.2L1408.5 667.2L1414.1 660.5L1415.5 675.4L1416.2 665.0L1425.3 657.2L1435.1 653.2L1435.1 646.3L1450.5 640.6L1458.9 631.9L1471.5 642.3L1470.1 654.2L1491.1 656.7L1495.3 667.2L1509.3 659.1L1523.4 665.0L1537.4 672.2L1551.4 671.4L1565.4 675.4L1565.4 686.4L1579.4 688.1L1576.6 691.4L1562.6 691.4L1564.0 697.7L1551.4 705.0L1541.6 706.4L1542.3 713.0L1540.2 718.0L1533.2 726.2L1531.8 713.0L1537.4 702.1L1531.8 700.7L1529.7 706.4L1513.5 706.9L1503.0 718.8L1511.4 722.8L1509.3 733.8L1503.0 741.9L1497.4 743.8L1494.9 746.7L1491.8 749.8L1494.3 754.8L1493.9 758.0L1490.1 759.1L1490.7 753.6L1488.3 750.2L1484.1 751.1L1483.4 748.0L1478.5 751.3L1480.6 754.5L1484.8 754.8L1480.3 758.3L1483.8 764.2L1483.8 768.2L1480.3 773.7L1476.4 777.6L1472.2 778.6L1467.7 780.1L1464.9 779.5L1461.7 782.8L1465.5 788.7L1466.3 793.8L1462.8 796.0L1460.3 798.3L1460.0 795.9L1456.5 793.5L1453.7 791.6L1452.3 796.6L1454.7 801.2L1458.1 805.1L1459.2 808.7L1458.1 808.6L1454.7 806.5L1453.7 802.3L1450.9 799.5L1451.3 795.2L1450.1 788.0L1445.6 788.0L1445.3 783.6L1441.8 778.3L1437.9 779.4L1435.1 780.6L1432.3 782.4L1428.1 787.3L1425.6 788.7L1425.6 793.0L1425.0 796.2L1422.5 799.0L1420.4 798.0L1418.0 792.3L1415.5 785.8L1415.2 780.6L1412.0 780.9L1409.9 778.6L1407.5 775.0L1400.1 774.2L1393.5 773.4L1392.4 771.4L1388.9 772.0L1384.7 769.8L1383.2 766.3L1380.4 767.4L1383.2 771.9L1385.4 774.5L1385.5 776.0L1388.9 775.7L1391.9 773.0L1392.5 775.6L1397.0 778.3L1394.2 783.6L1390.5 785.8L1386.1 788.0L1381.1 790.9L1376.2 792.6L1373.9 792.8L1373.0 787.5L1367.8 779.8L1365.3 774.5L1362.2 769.8L1362.1 767.4L1361.1 764.5L1363.2 759.1L1363.6 755.4L1358.7 756.2L1356.1 755.2L1352.4 755.5L1351.4 754.3L1350.0 750.7L1350.3 748.5L1353.8 747.6L1357.3 747.2L1362.2 745.7L1366.4 747.6L1371.3 746.7L1371.3 744.4L1367.1 741.3L1365.5 739.6L1367.8 735.5L1362.2 737.5L1360.1 740.9L1358.0 736.9L1355.9 738.0L1353.5 740.9L1352.4 745.7L1353.5 747.2L1350.0 747.8L1346.8 748.0L1346.5 749.8L1345.1 748.9L1346.8 753.1L1345.4 755.7L1343.0 754.0L1340.5 747.6L1340.2 745.7L1334.9 742.3L1332.4 739.0L1330.4 739.4L1330.7 741.9L1335.3 745.7L1339.1 749.1L1337.0 748.5L1336.5 751.6L1335.2 753.1L1335.6 749.8L1330.7 746.7L1327.5 743.8L1325.5 741.1L1322.3 743.5L1317.7 743.3L1317.7 746.1L1313.6 749.5L1312.8 752.2L1310.1 755.2L1305.8 756.2L1304.4 755.2Z M1305.5 729.6L1309.0 728.0L1315.0 726.9L1315.6 723.5L1313.5 722.3L1312.5 719.3L1310.8 716.3L1310.4 711.2L1308.3 711.2L1309.0 708.8L1306.2 708.8L1304.8 713.0L1306.2 716.8L1308.7 718.5L1309.0 721.9L1306.9 722.3L1307.2 725.1L1305.9 725.6L1308.3 726.5Z M1299.2 725.6L1304.4 724.7L1304.8 721.6L1305.1 718.8L1302.7 717.3L1299.2 720.0L1300.2 722.8Z M1279.6 688.1L1282.4 693.0L1287.3 694.9L1293.6 691.4L1292.5 686.4L1288.0 685.4L1282.4 685.4Z M1328.6 629.9L1337.0 638.2L1344.0 629.9L1351.0 615.1L1338.4 612.7L1328.6 619.1Z M1386.1 667.2L1391.7 668.5L1394.5 655.7L1408.5 639.4L1405.7 636.3L1393.1 645.2L1386.1 660.5Z M1330.7 753.1L1334.9 752.7L1334.5 755.4L1330.7 754.0Z M1324.8 751.3L1326.8 750.9L1326.6 747.6L1324.8 748.0Z M1325.2 746.7L1326.5 746.7L1326.4 743.8L1325.4 744.8Z M1358.5 758.3L1361.5 757.3L1360.8 758.8L1358.5 758.8Z M1425.0 797.2L1427.8 800.2L1426.7 802.3L1425.3 802.0Z M1495.8 764.5L1497.4 760.8L1496.7 760.0L1499.5 759.5L1503.0 758.8L1504.9 759.1L1507.9 758.3L1510.5 757.1L1511.4 752.2L1512.1 749.5L1511.2 746.9L1509.3 748.2L1509.1 752.2L1505.1 754.8L1503.7 756.6L1499.5 757.4L1496.7 759.1L1494.9 761.2Z M1498.8 761.7L1501.6 760.3L1500.9 759.5L1499.3 760.0Z M1509.3 746.5L1511.4 744.8L1514.2 745.7L1517.0 743.3L1516.3 741.5L1512.1 739.0L1511.4 743.3L1509.3 744.4Z M1512.1 738.0L1514.0 736.9L1513.5 731.1L1515.6 731.7L1513.5 720.0L1512.1 721.6L1512.1 729.6Z M1481.6 777.6L1482.7 774.2L1484.0 774.5L1483.4 777.6L1482.4 779.1Z M1465.5 783.3L1468.0 782.1L1468.7 782.8L1466.9 784.6Z M1481.7 788.0L1482.4 784.3L1484.4 784.5L1484.1 788.0L1483.4 790.9L1486.9 792.3L1486.6 793.0L1483.8 791.6L1482.0 790.6Z M1484.1 800.9L1486.2 798.7L1489.0 797.0L1490.4 800.2L1489.0 802.6L1486.9 801.6Z M1484.1 795.9L1485.5 794.5L1489.0 793.0L1488.7 796.2L1486.9 796.3L1485.5 797.8Z M1477.5 798.7L1480.6 795.9L1480.3 794.8L1477.1 798.3Z M1446.7 802.8L1449.8 803.4L1454.0 807.5L1458.2 812.1L1461.7 815.3L1461.4 818.8L1459.3 818.8L1454.7 814.2L1451.6 808.6L1448.4 805.5Z M1460.6 820.2L1462.4 819.1L1465.2 819.8L1468.4 819.7L1471.1 820.4L1473.6 821.7L1473.6 822.9L1468.7 822.4L1464.5 821.7Z M1465.9 808.6L1468.7 808.3L1471.5 806.2L1475.0 803.7L1477.1 800.9L1479.9 803.4L1478.1 805.8L1479.9 809.3L1477.8 810.0L1476.4 813.5L1475.7 816.3L1473.6 816.3L1471.5 815.2L1469.4 815.3L1467.3 812.5L1465.9 810.3Z M1481.0 809.6L1482.4 808.9L1486.2 809.3L1488.3 808.3L1487.6 810.1L1482.7 810.1L1481.7 812.1L1485.9 812.1L1483.8 813.5L1485.2 817.0L1483.4 817.3L1482.7 814.6L1481.7 814.9L1481.9 818.6L1480.6 818.4L1479.9 815.2Z M1496.7 811.8L1500.9 811.8L1502.3 815.3L1506.5 813.1L1510.7 814.3L1516.3 816.7L1519.8 819.1L1519.1 820.2L1524.1 825.5L1520.5 825.1L1517.7 822.2L1514.9 821.5L1512.8 823.6L1510.7 823.6L1507.9 822.2L1506.5 821.2L1507.2 819.1L1503.7 817.2L1499.5 816.3L1498.1 814.6Z M1486.2 825.2L1488.3 822.9L1491.4 822.5L1488.3 824.5Z M1475.4 822.7L1479.9 822.5L1485.5 822.4L1481.3 824.1L1475.7 823.4Z M1521.2 818.4L1524.8 817.0L1526.6 816.7L1525.5 819.1L1521.9 819.5Z M1472.5 843.1L1473.2 848.4L1471.8 848.4L1475.3 857.2L1474.3 861.9L1478.5 863.1L1481.3 861.4L1486.2 861.4L1489.7 858.6L1493.9 857.6L1497.0 857.2L1500.9 859.4L1503.2 862.8L1503.7 860.9L1506.1 859.2L1505.8 863.1L1508.6 864.8L1510.5 868.3L1514.2 869.8L1516.3 868.7L1518.4 870.1L1523.4 867.4L1524.3 863.1L1525.5 859.7L1527.6 856.4L1528.3 851.6L1527.6 846.9L1524.8 844.6L1521.9 840.1L1518.2 837.8L1517.7 834.9L1516.8 832.0L1514.2 830.9L1512.8 825.9L1511.7 828.4L1511.4 832.7L1509.3 835.8L1506.3 833.4L1503.0 832.0L1504.9 827.9L1502.3 827.9L1498.8 826.6L1496.0 828.4L1494.6 832.0L1492.2 830.9L1489.7 830.5L1486.9 834.1L1484.5 835.6L1484.1 837.1L1480.6 839.3L1476.8 840.2L1473.3 842.0Z M1515.9 873.2L1521.0 873.4L1520.5 877.6L1518.4 878.7L1516.8 876.6Z M1555.2 862.1L1557.4 865.2L1559.5 866.0L1563.3 867.8L1561.2 871.0L1558.7 874.9L1558.1 871.4L1556.7 870.7L1558.1 867.4Z M1555.2 872.9L1557.4 875.1L1555.2 879.1L1552.8 883.2L1549.3 884.7L1546.5 883.0L1549.3 879.5L1552.8 875.7Z M1543.0 839.6L1546.5 842.0L1547.2 842.9L1544.4 841.6Z M1149.3 646.9L1156.3 639.4L1164.7 642.3L1165.4 647.9L1159.1 650.6L1152.1 649.0Z M1167.5 645.2L1173.1 638.2L1177.3 642.3L1175.9 647.9L1170.3 647.9Z M1169.6 660.5L1174.5 653.2L1178.0 658.1L1177.3 665.0L1173.1 665.9Z M1178.7 622.8L1187.1 627.8L1191.3 619.1L1187.1 606.6L1180.1 611.0Z M1191.3 688.1L1195.5 686.4L1200.4 691.4L1199.0 694.6L1193.4 695.2L1191.3 693.0Z M1173.8 674.6L1177.3 672.2L1179.4 675.4L1177.3 677.3Z M1446.3 622.8L1453.3 629.9L1460.3 626.4L1458.9 615.1L1450.5 606.6L1444.9 615.1Z M1505.1 647.9L1512.1 654.2L1523.4 649.0L1520.5 642.3L1509.3 642.3Z M1563.3 667.2L1567.5 668.1L1568.2 665.0L1564.0 664.6Z M1210.9 628.5L1217.9 642.3L1231.9 645.2L1237.5 671.4L1241.7 686.4L1246.0 702.1L1251.6 705.0L1254.4 699.2L1257.2 689.8L1268.4 679.2L1282.4 671.4L1282.4 658.1L1288.0 642.3L1285.2 615.1L1271.2 586.4L1250.2 592.0L1229.1 597.2Z"/></clipPath><filter id="b3" x="-20%" y="-20%" width="140%" height="140%"><feGaussianBlur stdDeviation="3"/></filter><filter id="b6" x="-30%" y="-30%" width="160%" height="160%"><feGaussianBlur stdDeviation="6"/></filter><filter id="b1"><feGaussianBlur stdDeviation="0.600"/></filter><filter id="tex" x="0" y="0" width="100%" height="100%"><feTurbulence type="fractalNoise" baseFrequency="0.32" numOctaves="3" seed="7"/><feColorMatrix type="matrix" values="0 0 0 0 0.72  0 0 0 0 0.72  0 0 0 0 0.6  1.6 1.6 0 0 -1.35"/></filter><filter id="tex2" x="0" y="0" width="100%" height="100%"><feTurbulence type="fractalNoise" baseFrequency="0.28" numOctaves="3" seed="3"/><feColorMatrix type="matrix" values="0 0 0 0 0.04  0 0 0 0 0.07  0 0 0 0 0.03  0 1.8 1.8 0 -1.5"/></filter><filter id="otex" x="0" y="0" width="100%" height="100%"><feTurbulence type="fractalNoise" baseFrequency="0.025" numOctaves="3" seed="11"/><feColorMatrix type="matrix" values="0 0 0 0 0.09  0 0 0 0 0.2  0 0 0 0 0.32  1.8 0 0 0 -0.75"/></filter></defs>
<rect x="1144" y="624" width="410" height="293" fill="#07131e"/>
<rect x="1144" y="624" width="410" height="293" filter="url(#otex)" opacity=".3"/>
<path d="M1138.1 733.8L1133.9 727.4L1126.9 713.0L1117.1 705.0L1103.0 702.1L1091.8 713.0L1082.0 705.0L1080.6 686.4L1094.6 667.2L1117.1 671.4L1131.1 671.4L1145.1 673.4L1159.1 679.2L1173.1 679.2L1180.1 662.8L1187.1 675.4L1194.1 677.3L1198.3 682.9L1191.3 693.0L1182.9 702.1L1181.5 709.1L1187.1 713.0L1194.1 717.3L1198.3 722.8L1201.8 726.2L1202.5 719.3L1205.3 713.0L1203.9 705.0L1203.9 697.7L1210.9 698.3L1215.1 702.1L1222.1 705.0L1223.5 713.0L1229.1 718.0L1234.7 724.0L1229.1 729.6L1220.7 729.6L1215.1 734.9L1222.1 731.7L1222.8 735.9L1227.7 738.0L1222.1 742.5L1215.1 742.9L1214.4 746.1L1209.5 748.5L1207.4 753.1L1206.7 758.3L1202.5 761.7L1199.7 765.0L1201.1 771.4L1200.4 774.2L1197.6 769.8L1195.5 766.6L1188.5 766.6L1187.1 768.2L1181.5 767.4L1177.3 770.6L1176.6 778.3L1180.1 784.0L1185.7 784.0L1186.4 780.6L1191.3 780.1L1189.9 785.1L1189.2 788.0L1195.5 788.3L1196.2 793.8L1196.9 796.6L1199.7 798.3L1201.8 797.3L1204.6 798.7L1203.9 800.6L1201.1 800.6L1199.0 799.7L1196.9 799.0L1193.1 796.6L1190.6 792.3L1185.0 790.9L1180.8 787.7L1177.3 788.3L1171.7 786.2L1165.4 782.1L1165.4 778.3L1160.5 773.7L1155.6 767.4L1152.5 764.2L1152.8 766.6L1157.3 773.0L1159.4 777.6L1156.3 774.5L1152.1 768.2L1149.3 762.5L1144.4 759.1L1141.6 754.0L1139.1 748.9L1139.5 741.9Z M1201.1 655.7L1212.3 665.0L1219.3 675.4L1226.3 684.7L1222.1 699.2L1217.9 696.2L1212.3 691.4L1203.9 689.8L1209.5 679.2L1201.1 671.4L1192.7 669.3L1187.1 662.8L1194.1 654.2Z M1147.9 665.0L1159.1 658.1L1167.5 658.1L1171.7 671.4L1166.1 677.3L1154.9 679.2L1147.9 671.4Z M1138.1 662.8L1145.1 651.6L1150.7 655.7L1146.5 665.0L1139.5 665.9Z M1187.1 636.3L1201.1 639.4L1208.1 622.8L1222.1 597.2L1208.1 586.4L1187.1 602.0Z M1178.7 647.9L1189.9 650.6L1201.1 647.9L1198.3 640.6L1184.3 639.4Z M1179.4 659.1L1184.3 659.1L1186.4 654.2L1181.5 652.2L1178.7 654.2Z M1230.5 734.5L1234.7 736.3L1238.9 736.5L1238.9 732.8L1234.7 726.2L1231.9 729.6Z M1194.1 779.1L1198.3 777.6L1203.9 778.6L1209.2 781.8L1204.6 782.2L1201.1 779.5L1195.5 779.5Z M1209.0 784.3L1212.3 782.4L1217.2 784.0L1213.7 785.4Z M1204.6 798.7L1208.1 795.2L1212.3 793.8L1215.1 794.5L1217.9 795.9L1226.3 795.6L1229.1 798.7L1233.3 802.3L1240.3 803.7L1243.2 809.3L1243.2 811.4L1250.2 812.8L1257.2 814.9L1263.7 818.4L1264.2 823.4L1260.7 828.4L1258.6 834.9L1255.8 842.3L1250.2 844.9L1245.3 848.4L1245.0 852.4L1240.3 859.7L1236.8 862.8L1232.6 862.3L1233.3 868.3L1226.3 870.1L1222.1 873.8L1224.2 876.6L1221.4 881.4L1218.6 884.5L1220.7 887.6L1216.5 894.0L1217.2 898.6L1221.4 903.4L1215.1 904.6L1209.5 898.6L1207.4 887.6L1210.2 875.7L1210.2 866.6L1213.0 856.4L1214.4 845.4L1214.7 836.8L1206.7 830.5L1202.5 821.9L1199.4 817.7L1201.1 814.2L1200.4 810.7L1203.2 807.9L1204.9 805.1L1204.6 800.9Z M1304.8 756.9L1311.8 758.0L1317.4 755.2L1327.2 754.5L1328.6 760.3L1334.2 762.8L1341.2 765.0L1341.2 762.0L1348.2 763.7L1353.8 765.0L1358.7 764.7L1360.8 768.2L1362.9 776.0L1365.5 782.1L1368.5 789.0L1373.4 793.8L1375.5 795.9L1384.7 794.1L1384.0 798.0L1380.4 804.4L1373.4 812.1L1369.2 816.3L1367.8 820.5L1369.9 826.2L1369.9 832.0L1362.9 839.3L1362.7 845.4L1359.2 848.4L1356.6 854.8L1351.0 860.9L1344.0 861.7L1339.8 862.3L1338.4 858.1L1334.9 850.0L1333.5 842.3L1330.0 834.9L1332.1 827.6L1330.3 819.1L1325.8 812.1L1326.8 805.8L1323.0 804.5L1319.5 802.0L1314.6 802.6L1309.0 803.7L1302.7 804.5L1297.8 801.2L1294.6 798.0L1292.2 795.2L1289.7 791.6L1288.7 789.9L1290.4 785.1L1290.1 780.6L1292.9 774.5L1295.0 770.3L1299.2 767.4L1299.6 763.3L1304.1 760.0Z M1382.3 827.6L1383.7 832.7L1381.8 837.1L1379.7 846.6L1376.2 847.7L1374.1 843.1L1375.3 837.8L1375.5 833.4L1379.0 832.0Z M1300.6 754.8L1300.2 751.3L1300.9 746.7L1300.3 743.5L1306.2 742.7L1310.7 743.1L1311.5 738.0L1306.9 733.4L1311.1 732.4L1313.5 730.7L1315.6 727.6L1318.1 726.5L1319.8 722.8L1323.0 721.4L1325.4 720.5L1324.7 713.5L1327.9 711.7L1327.9 715.6L1327.2 719.3L1328.6 720.5L1332.1 719.7L1339.1 718.8L1342.6 717.3L1342.6 713.0L1346.8 712.5L1346.1 707.2L1352.4 706.1L1355.2 705.0L1353.1 703.3L1345.4 705.0L1343.3 702.1L1343.3 696.2L1348.2 689.8L1346.8 687.1L1344.0 688.1L1342.6 692.4L1338.4 697.7L1337.0 702.7L1339.5 705.5L1336.3 713.0L1333.2 716.1L1331.1 716.6L1328.9 709.1L1324.4 710.2L1320.9 708.3L1320.2 700.7L1325.1 694.6L1330.0 688.1L1333.5 679.2L1339.8 671.4L1348.2 667.2L1355.2 670.6L1359.4 674.2L1370.6 680.3L1369.9 684.7L1362.2 685.4L1359.4 684.0L1362.0 691.4L1365.7 693.0L1369.7 690.8L1369.9 686.4L1374.8 685.7L1374.8 678.1L1379.0 682.9L1388.2 678.1L1397.3 676.2L1398.7 671.4L1407.1 676.2L1408.5 667.2L1414.1 660.5L1415.5 675.4L1416.2 665.0L1425.3 657.2L1435.1 653.2L1435.1 646.3L1450.5 640.6L1458.9 631.9L1471.5 642.3L1470.1 654.2L1491.1 656.7L1495.3 667.2L1509.3 659.1L1523.4 665.0L1537.4 672.2L1551.4 671.4L1565.4 675.4L1565.4 686.4L1579.4 688.1L1576.6 691.4L1562.6 691.4L1564.0 697.7L1551.4 705.0L1541.6 706.4L1542.3 713.0L1540.2 718.0L1533.2 726.2L1531.8 713.0L1537.4 702.1L1531.8 700.7L1529.7 706.4L1513.5 706.9L1503.0 718.8L1511.4 722.8L1509.3 733.8L1503.0 741.9L1497.4 743.8L1494.9 746.7L1491.8 749.8L1494.3 754.8L1493.9 758.0L1490.1 759.1L1490.7 753.6L1488.3 750.2L1484.1 751.1L1483.4 748.0L1478.5 751.3L1480.6 754.5L1484.8 754.8L1480.3 758.3L1483.8 764.2L1483.8 768.2L1480.3 773.7L1476.4 777.6L1472.2 778.6L1467.7 780.1L1464.9 779.5L1461.7 782.8L1465.5 788.7L1466.3 793.8L1462.8 796.0L1460.3 798.3L1460.0 795.9L1456.5 793.5L1453.7 791.6L1452.3 796.6L1454.7 801.2L1458.1 805.1L1459.2 808.7L1458.1 808.6L1454.7 806.5L1453.7 802.3L1450.9 799.5L1451.3 795.2L1450.1 788.0L1445.6 788.0L1445.3 783.6L1441.8 778.3L1437.9 779.4L1435.1 780.6L1432.3 782.4L1428.1 787.3L1425.6 788.7L1425.6 793.0L1425.0 796.2L1422.5 799.0L1420.4 798.0L1418.0 792.3L1415.5 785.8L1415.2 780.6L1412.0 780.9L1409.9 778.6L1407.5 775.0L1400.1 774.2L1393.5 773.4L1392.4 771.4L1388.9 772.0L1384.7 769.8L1383.2 766.3L1380.4 767.4L1383.2 771.9L1385.4 774.5L1385.5 776.0L1388.9 775.7L1391.9 773.0L1392.5 775.6L1397.0 778.3L1394.2 783.6L1390.5 785.8L1386.1 788.0L1381.1 790.9L1376.2 792.6L1373.9 792.8L1373.0 787.5L1367.8 779.8L1365.3 774.5L1362.2 769.8L1362.1 767.4L1361.1 764.5L1363.2 759.1L1363.6 755.4L1358.7 756.2L1356.1 755.2L1352.4 755.5L1351.4 754.3L1350.0 750.7L1350.3 748.5L1353.8 747.6L1357.3 747.2L1362.2 745.7L1366.4 747.6L1371.3 746.7L1371.3 744.4L1367.1 741.3L1365.5 739.6L1367.8 735.5L1362.2 737.5L1360.1 740.9L1358.0 736.9L1355.9 738.0L1353.5 740.9L1352.4 745.7L1353.5 747.2L1350.0 747.8L1346.8 748.0L1346.5 749.8L1345.1 748.9L1346.8 753.1L1345.4 755.7L1343.0 754.0L1340.5 747.6L1340.2 745.7L1334.9 742.3L1332.4 739.0L1330.4 739.4L1330.7 741.9L1335.3 745.7L1339.1 749.1L1337.0 748.5L1336.5 751.6L1335.2 753.1L1335.6 749.8L1330.7 746.7L1327.5 743.8L1325.5 741.1L1322.3 743.5L1317.7 743.3L1317.7 746.1L1313.6 749.5L1312.8 752.2L1310.1 755.2L1305.8 756.2L1304.4 755.2Z M1305.5 729.6L1309.0 728.0L1315.0 726.9L1315.6 723.5L1313.5 722.3L1312.5 719.3L1310.8 716.3L1310.4 711.2L1308.3 711.2L1309.0 708.8L1306.2 708.8L1304.8 713.0L1306.2 716.8L1308.7 718.5L1309.0 721.9L1306.9 722.3L1307.2 725.1L1305.9 725.6L1308.3 726.5Z M1299.2 725.6L1304.4 724.7L1304.8 721.6L1305.1 718.8L1302.7 717.3L1299.2 720.0L1300.2 722.8Z M1279.6 688.1L1282.4 693.0L1287.3 694.9L1293.6 691.4L1292.5 686.4L1288.0 685.4L1282.4 685.4Z M1328.6 629.9L1337.0 638.2L1344.0 629.9L1351.0 615.1L1338.4 612.7L1328.6 619.1Z M1386.1 667.2L1391.7 668.5L1394.5 655.7L1408.5 639.4L1405.7 636.3L1393.1 645.2L1386.1 660.5Z M1330.7 753.1L1334.9 752.7L1334.5 755.4L1330.7 754.0Z M1324.8 751.3L1326.8 750.9L1326.6 747.6L1324.8 748.0Z M1325.2 746.7L1326.5 746.7L1326.4 743.8L1325.4 744.8Z M1358.5 758.3L1361.5 757.3L1360.8 758.8L1358.5 758.8Z M1425.0 797.2L1427.8 800.2L1426.7 802.3L1425.3 802.0Z M1495.8 764.5L1497.4 760.8L1496.7 760.0L1499.5 759.5L1503.0 758.8L1504.9 759.1L1507.9 758.3L1510.5 757.1L1511.4 752.2L1512.1 749.5L1511.2 746.9L1509.3 748.2L1509.1 752.2L1505.1 754.8L1503.7 756.6L1499.5 757.4L1496.7 759.1L1494.9 761.2Z M1498.8 761.7L1501.6 760.3L1500.9 759.5L1499.3 760.0Z M1509.3 746.5L1511.4 744.8L1514.2 745.7L1517.0 743.3L1516.3 741.5L1512.1 739.0L1511.4 743.3L1509.3 744.4Z M1512.1 738.0L1514.0 736.9L1513.5 731.1L1515.6 731.7L1513.5 720.0L1512.1 721.6L1512.1 729.6Z M1481.6 777.6L1482.7 774.2L1484.0 774.5L1483.4 777.6L1482.4 779.1Z M1465.5 783.3L1468.0 782.1L1468.7 782.8L1466.9 784.6Z M1481.7 788.0L1482.4 784.3L1484.4 784.5L1484.1 788.0L1483.4 790.9L1486.9 792.3L1486.6 793.0L1483.8 791.6L1482.0 790.6Z M1484.1 800.9L1486.2 798.7L1489.0 797.0L1490.4 800.2L1489.0 802.6L1486.9 801.6Z M1484.1 795.9L1485.5 794.5L1489.0 793.0L1488.7 796.2L1486.9 796.3L1485.5 797.8Z M1477.5 798.7L1480.6 795.9L1480.3 794.8L1477.1 798.3Z M1446.7 802.8L1449.8 803.4L1454.0 807.5L1458.2 812.1L1461.7 815.3L1461.4 818.8L1459.3 818.8L1454.7 814.2L1451.6 808.6L1448.4 805.5Z M1460.6 820.2L1462.4 819.1L1465.2 819.8L1468.4 819.7L1471.1 820.4L1473.6 821.7L1473.6 822.9L1468.7 822.4L1464.5 821.7Z M1465.9 808.6L1468.7 808.3L1471.5 806.2L1475.0 803.7L1477.1 800.9L1479.9 803.4L1478.1 805.8L1479.9 809.3L1477.8 810.0L1476.4 813.5L1475.7 816.3L1473.6 816.3L1471.5 815.2L1469.4 815.3L1467.3 812.5L1465.9 810.3Z M1481.0 809.6L1482.4 808.9L1486.2 809.3L1488.3 808.3L1487.6 810.1L1482.7 810.1L1481.7 812.1L1485.9 812.1L1483.8 813.5L1485.2 817.0L1483.4 817.3L1482.7 814.6L1481.7 814.9L1481.9 818.6L1480.6 818.4L1479.9 815.2Z M1496.7 811.8L1500.9 811.8L1502.3 815.3L1506.5 813.1L1510.7 814.3L1516.3 816.7L1519.8 819.1L1519.1 820.2L1524.1 825.5L1520.5 825.1L1517.7 822.2L1514.9 821.5L1512.8 823.6L1510.7 823.6L1507.9 822.2L1506.5 821.2L1507.2 819.1L1503.7 817.2L1499.5 816.3L1498.1 814.6Z M1486.2 825.2L1488.3 822.9L1491.4 822.5L1488.3 824.5Z M1475.4 822.7L1479.9 822.5L1485.5 822.4L1481.3 824.1L1475.7 823.4Z M1521.2 818.4L1524.8 817.0L1526.6 816.7L1525.5 819.1L1521.9 819.5Z M1472.5 843.1L1473.2 848.4L1471.8 848.4L1475.3 857.2L1474.3 861.9L1478.5 863.1L1481.3 861.4L1486.2 861.4L1489.7 858.6L1493.9 857.6L1497.0 857.2L1500.9 859.4L1503.2 862.8L1503.7 860.9L1506.1 859.2L1505.8 863.1L1508.6 864.8L1510.5 868.3L1514.2 869.8L1516.3 868.7L1518.4 870.1L1523.4 867.4L1524.3 863.1L1525.5 859.7L1527.6 856.4L1528.3 851.6L1527.6 846.9L1524.8 844.6L1521.9 840.1L1518.2 837.8L1517.7 834.9L1516.8 832.0L1514.2 830.9L1512.8 825.9L1511.7 828.4L1511.4 832.7L1509.3 835.8L1506.3 833.4L1503.0 832.0L1504.9 827.9L1502.3 827.9L1498.8 826.6L1496.0 828.4L1494.6 832.0L1492.2 830.9L1489.7 830.5L1486.9 834.1L1484.5 835.6L1484.1 837.1L1480.6 839.3L1476.8 840.2L1473.3 842.0Z M1515.9 873.2L1521.0 873.4L1520.5 877.6L1518.4 878.7L1516.8 876.6Z M1555.2 862.1L1557.4 865.2L1559.5 866.0L1563.3 867.8L1561.2 871.0L1558.7 874.9L1558.1 871.4L1556.7 870.7L1558.1 867.4Z M1555.2 872.9L1557.4 875.1L1555.2 879.1L1552.8 883.2L1549.3 884.7L1546.5 883.0L1549.3 879.5L1552.8 875.7Z M1543.0 839.6L1546.5 842.0L1547.2 842.9L1544.4 841.6Z M1149.3 646.9L1156.3 639.4L1164.7 642.3L1165.4 647.9L1159.1 650.6L1152.1 649.0Z M1167.5 645.2L1173.1 638.2L1177.3 642.3L1175.9 647.9L1170.3 647.9Z M1169.6 660.5L1174.5 653.2L1178.0 658.1L1177.3 665.0L1173.1 665.9Z M1178.7 622.8L1187.1 627.8L1191.3 619.1L1187.1 606.6L1180.1 611.0Z M1191.3 688.1L1195.5 686.4L1200.4 691.4L1199.0 694.6L1193.4 695.2L1191.3 693.0Z M1173.8 674.6L1177.3 672.2L1179.4 675.4L1177.3 677.3Z M1446.3 622.8L1453.3 629.9L1460.3 626.4L1458.9 615.1L1450.5 606.6L1444.9 615.1Z M1505.1 647.9L1512.1 654.2L1523.4 649.0L1520.5 642.3L1509.3 642.3Z M1563.3 667.2L1567.5 668.1L1568.2 665.0L1564.0 664.6Z M1210.9 628.5L1217.9 642.3L1231.9 645.2L1237.5 671.4L1241.7 686.4L1246.0 702.1L1251.6 705.0L1254.4 699.2L1257.2 689.8L1268.4 679.2L1282.4 671.4L1282.4 658.1L1288.0 642.3L1285.2 615.1L1271.2 586.4L1250.2 592.0L1229.1 597.2Z" fill="#163450" stroke="#163450" stroke-width="5" stroke-linejoin="round" filter="url(#b3)" opacity=".75"/>
<path d="M1138.1 733.8L1133.9 727.4L1126.9 713.0L1117.1 705.0L1103.0 702.1L1091.8 713.0L1082.0 705.0L1080.6 686.4L1094.6 667.2L1117.1 671.4L1131.1 671.4L1145.1 673.4L1159.1 679.2L1173.1 679.2L1180.1 662.8L1187.1 675.4L1194.1 677.3L1198.3 682.9L1191.3 693.0L1182.9 702.1L1181.5 709.1L1187.1 713.0L1194.1 717.3L1198.3 722.8L1201.8 726.2L1202.5 719.3L1205.3 713.0L1203.9 705.0L1203.9 697.7L1210.9 698.3L1215.1 702.1L1222.1 705.0L1223.5 713.0L1229.1 718.0L1234.7 724.0L1229.1 729.6L1220.7 729.6L1215.1 734.9L1222.1 731.7L1222.8 735.9L1227.7 738.0L1222.1 742.5L1215.1 742.9L1214.4 746.1L1209.5 748.5L1207.4 753.1L1206.7 758.3L1202.5 761.7L1199.7 765.0L1201.1 771.4L1200.4 774.2L1197.6 769.8L1195.5 766.6L1188.5 766.6L1187.1 768.2L1181.5 767.4L1177.3 770.6L1176.6 778.3L1180.1 784.0L1185.7 784.0L1186.4 780.6L1191.3 780.1L1189.9 785.1L1189.2 788.0L1195.5 788.3L1196.2 793.8L1196.9 796.6L1199.7 798.3L1201.8 797.3L1204.6 798.7L1203.9 800.6L1201.1 800.6L1199.0 799.7L1196.9 799.0L1193.1 796.6L1190.6 792.3L1185.0 790.9L1180.8 787.7L1177.3 788.3L1171.7 786.2L1165.4 782.1L1165.4 778.3L1160.5 773.7L1155.6 767.4L1152.5 764.2L1152.8 766.6L1157.3 773.0L1159.4 777.6L1156.3 774.5L1152.1 768.2L1149.3 762.5L1144.4 759.1L1141.6 754.0L1139.1 748.9L1139.5 741.9Z M1201.1 655.7L1212.3 665.0L1219.3 675.4L1226.3 684.7L1222.1 699.2L1217.9 696.2L1212.3 691.4L1203.9 689.8L1209.5 679.2L1201.1 671.4L1192.7 669.3L1187.1 662.8L1194.1 654.2Z M1147.9 665.0L1159.1 658.1L1167.5 658.1L1171.7 671.4L1166.1 677.3L1154.9 679.2L1147.9 671.4Z M1138.1 662.8L1145.1 651.6L1150.7 655.7L1146.5 665.0L1139.5 665.9Z M1187.1 636.3L1201.1 639.4L1208.1 622.8L1222.1 597.2L1208.1 586.4L1187.1 602.0Z M1178.7 647.9L1189.9 650.6L1201.1 647.9L1198.3 640.6L1184.3 639.4Z M1179.4 659.1L1184.3 659.1L1186.4 654.2L1181.5 652.2L1178.7 654.2Z M1230.5 734.5L1234.7 736.3L1238.9 736.5L1238.9 732.8L1234.7 726.2L1231.9 729.6Z M1194.1 779.1L1198.3 777.6L1203.9 778.6L1209.2 781.8L1204.6 782.2L1201.1 779.5L1195.5 779.5Z M1209.0 784.3L1212.3 782.4L1217.2 784.0L1213.7 785.4Z M1204.6 798.7L1208.1 795.2L1212.3 793.8L1215.1 794.5L1217.9 795.9L1226.3 795.6L1229.1 798.7L1233.3 802.3L1240.3 803.7L1243.2 809.3L1243.2 811.4L1250.2 812.8L1257.2 814.9L1263.7 818.4L1264.2 823.4L1260.7 828.4L1258.6 834.9L1255.8 842.3L1250.2 844.9L1245.3 848.4L1245.0 852.4L1240.3 859.7L1236.8 862.8L1232.6 862.3L1233.3 868.3L1226.3 870.1L1222.1 873.8L1224.2 876.6L1221.4 881.4L1218.6 884.5L1220.7 887.6L1216.5 894.0L1217.2 898.6L1221.4 903.4L1215.1 904.6L1209.5 898.6L1207.4 887.6L1210.2 875.7L1210.2 866.6L1213.0 856.4L1214.4 845.4L1214.7 836.8L1206.7 830.5L1202.5 821.9L1199.4 817.7L1201.1 814.2L1200.4 810.7L1203.2 807.9L1204.9 805.1L1204.6 800.9Z M1304.8 756.9L1311.8 758.0L1317.4 755.2L1327.2 754.5L1328.6 760.3L1334.2 762.8L1341.2 765.0L1341.2 762.0L1348.2 763.7L1353.8 765.0L1358.7 764.7L1360.8 768.2L1362.9 776.0L1365.5 782.1L1368.5 789.0L1373.4 793.8L1375.5 795.9L1384.7 794.1L1384.0 798.0L1380.4 804.4L1373.4 812.1L1369.2 816.3L1367.8 820.5L1369.9 826.2L1369.9 832.0L1362.9 839.3L1362.7 845.4L1359.2 848.4L1356.6 854.8L1351.0 860.9L1344.0 861.7L1339.8 862.3L1338.4 858.1L1334.9 850.0L1333.5 842.3L1330.0 834.9L1332.1 827.6L1330.3 819.1L1325.8 812.1L1326.8 805.8L1323.0 804.5L1319.5 802.0L1314.6 802.6L1309.0 803.7L1302.7 804.5L1297.8 801.2L1294.6 798.0L1292.2 795.2L1289.7 791.6L1288.7 789.9L1290.4 785.1L1290.1 780.6L1292.9 774.5L1295.0 770.3L1299.2 767.4L1299.6 763.3L1304.1 760.0Z M1382.3 827.6L1383.7 832.7L1381.8 837.1L1379.7 846.6L1376.2 847.7L1374.1 843.1L1375.3 837.8L1375.5 833.4L1379.0 832.0Z M1300.6 754.8L1300.2 751.3L1300.9 746.7L1300.3 743.5L1306.2 742.7L1310.7 743.1L1311.5 738.0L1306.9 733.4L1311.1 732.4L1313.5 730.7L1315.6 727.6L1318.1 726.5L1319.8 722.8L1323.0 721.4L1325.4 720.5L1324.7 713.5L1327.9 711.7L1327.9 715.6L1327.2 719.3L1328.6 720.5L1332.1 719.7L1339.1 718.8L1342.6 717.3L1342.6 713.0L1346.8 712.5L1346.1 707.2L1352.4 706.1L1355.2 705.0L1353.1 703.3L1345.4 705.0L1343.3 702.1L1343.3 696.2L1348.2 689.8L1346.8 687.1L1344.0 688.1L1342.6 692.4L1338.4 697.7L1337.0 702.7L1339.5 705.5L1336.3 713.0L1333.2 716.1L1331.1 716.6L1328.9 709.1L1324.4 710.2L1320.9 708.3L1320.2 700.7L1325.1 694.6L1330.0 688.1L1333.5 679.2L1339.8 671.4L1348.2 667.2L1355.2 670.6L1359.4 674.2L1370.6 680.3L1369.9 684.7L1362.2 685.4L1359.4 684.0L1362.0 691.4L1365.7 693.0L1369.7 690.8L1369.9 686.4L1374.8 685.7L1374.8 678.1L1379.0 682.9L1388.2 678.1L1397.3 676.2L1398.7 671.4L1407.1 676.2L1408.5 667.2L1414.1 660.5L1415.5 675.4L1416.2 665.0L1425.3 657.2L1435.1 653.2L1435.1 646.3L1450.5 640.6L1458.9 631.9L1471.5 642.3L1470.1 654.2L1491.1 656.7L1495.3 667.2L1509.3 659.1L1523.4 665.0L1537.4 672.2L1551.4 671.4L1565.4 675.4L1565.4 686.4L1579.4 688.1L1576.6 691.4L1562.6 691.4L1564.0 697.7L1551.4 705.0L1541.6 706.4L1542.3 713.0L1540.2 718.0L1533.2 726.2L1531.8 713.0L1537.4 702.1L1531.8 700.7L1529.7 706.4L1513.5 706.9L1503.0 718.8L1511.4 722.8L1509.3 733.8L1503.0 741.9L1497.4 743.8L1494.9 746.7L1491.8 749.8L1494.3 754.8L1493.9 758.0L1490.1 759.1L1490.7 753.6L1488.3 750.2L1484.1 751.1L1483.4 748.0L1478.5 751.3L1480.6 754.5L1484.8 754.8L1480.3 758.3L1483.8 764.2L1483.8 768.2L1480.3 773.7L1476.4 777.6L1472.2 778.6L1467.7 780.1L1464.9 779.5L1461.7 782.8L1465.5 788.7L1466.3 793.8L1462.8 796.0L1460.3 798.3L1460.0 795.9L1456.5 793.5L1453.7 791.6L1452.3 796.6L1454.7 801.2L1458.1 805.1L1459.2 808.7L1458.1 808.6L1454.7 806.5L1453.7 802.3L1450.9 799.5L1451.3 795.2L1450.1 788.0L1445.6 788.0L1445.3 783.6L1441.8 778.3L1437.9 779.4L1435.1 780.6L1432.3 782.4L1428.1 787.3L1425.6 788.7L1425.6 793.0L1425.0 796.2L1422.5 799.0L1420.4 798.0L1418.0 792.3L1415.5 785.8L1415.2 780.6L1412.0 780.9L1409.9 778.6L1407.5 775.0L1400.1 774.2L1393.5 773.4L1392.4 771.4L1388.9 772.0L1384.7 769.8L1383.2 766.3L1380.4 767.4L1383.2 771.9L1385.4 774.5L1385.5 776.0L1388.9 775.7L1391.9 773.0L1392.5 775.6L1397.0 778.3L1394.2 783.6L1390.5 785.8L1386.1 788.0L1381.1 790.9L1376.2 792.6L1373.9 792.8L1373.0 787.5L1367.8 779.8L1365.3 774.5L1362.2 769.8L1362.1 767.4L1361.1 764.5L1363.2 759.1L1363.6 755.4L1358.7 756.2L1356.1 755.2L1352.4 755.5L1351.4 754.3L1350.0 750.7L1350.3 748.5L1353.8 747.6L1357.3 747.2L1362.2 745.7L1366.4 747.6L1371.3 746.7L1371.3 744.4L1367.1 741.3L1365.5 739.6L1367.8 735.5L1362.2 737.5L1360.1 740.9L1358.0 736.9L1355.9 738.0L1353.5 740.9L1352.4 745.7L1353.5 747.2L1350.0 747.8L1346.8 748.0L1346.5 749.8L1345.1 748.9L1346.8 753.1L1345.4 755.7L1343.0 754.0L1340.5 747.6L1340.2 745.7L1334.9 742.3L1332.4 739.0L1330.4 739.4L1330.7 741.9L1335.3 745.7L1339.1 749.1L1337.0 748.5L1336.5 751.6L1335.2 753.1L1335.6 749.8L1330.7 746.7L1327.5 743.8L1325.5 741.1L1322.3 743.5L1317.7 743.3L1317.7 746.1L1313.6 749.5L1312.8 752.2L1310.1 755.2L1305.8 756.2L1304.4 755.2Z M1305.5 729.6L1309.0 728.0L1315.0 726.9L1315.6 723.5L1313.5 722.3L1312.5 719.3L1310.8 716.3L1310.4 711.2L1308.3 711.2L1309.0 708.8L1306.2 708.8L1304.8 713.0L1306.2 716.8L1308.7 718.5L1309.0 721.9L1306.9 722.3L1307.2 725.1L1305.9 725.6L1308.3 726.5Z M1299.2 725.6L1304.4 724.7L1304.8 721.6L1305.1 718.8L1302.7 717.3L1299.2 720.0L1300.2 722.8Z M1279.6 688.1L1282.4 693.0L1287.3 694.9L1293.6 691.4L1292.5 686.4L1288.0 685.4L1282.4 685.4Z M1328.6 629.9L1337.0 638.2L1344.0 629.9L1351.0 615.1L1338.4 612.7L1328.6 619.1Z M1386.1 667.2L1391.7 668.5L1394.5 655.7L1408.5 639.4L1405.7 636.3L1393.1 645.2L1386.1 660.5Z M1330.7 753.1L1334.9 752.7L1334.5 755.4L1330.7 754.0Z M1324.8 751.3L1326.8 750.9L1326.6 747.6L1324.8 748.0Z M1325.2 746.7L1326.5 746.7L1326.4 743.8L1325.4 744.8Z M1358.5 758.3L1361.5 757.3L1360.8 758.8L1358.5 758.8Z M1425.0 797.2L1427.8 800.2L1426.7 802.3L1425.3 802.0Z M1495.8 764.5L1497.4 760.8L1496.7 760.0L1499.5 759.5L1503.0 758.8L1504.9 759.1L1507.9 758.3L1510.5 757.1L1511.4 752.2L1512.1 749.5L1511.2 746.9L1509.3 748.2L1509.1 752.2L1505.1 754.8L1503.7 756.6L1499.5 757.4L1496.7 759.1L1494.9 761.2Z M1498.8 761.7L1501.6 760.3L1500.9 759.5L1499.3 760.0Z M1509.3 746.5L1511.4 744.8L1514.2 745.7L1517.0 743.3L1516.3 741.5L1512.1 739.0L1511.4 743.3L1509.3 744.4Z M1512.1 738.0L1514.0 736.9L1513.5 731.1L1515.6 731.7L1513.5 720.0L1512.1 721.6L1512.1 729.6Z M1481.6 777.6L1482.7 774.2L1484.0 774.5L1483.4 777.6L1482.4 779.1Z M1465.5 783.3L1468.0 782.1L1468.7 782.8L1466.9 784.6Z M1481.7 788.0L1482.4 784.3L1484.4 784.5L1484.1 788.0L1483.4 790.9L1486.9 792.3L1486.6 793.0L1483.8 791.6L1482.0 790.6Z M1484.1 800.9L1486.2 798.7L1489.0 797.0L1490.4 800.2L1489.0 802.6L1486.9 801.6Z M1484.1 795.9L1485.5 794.5L1489.0 793.0L1488.7 796.2L1486.9 796.3L1485.5 797.8Z M1477.5 798.7L1480.6 795.9L1480.3 794.8L1477.1 798.3Z M1446.7 802.8L1449.8 803.4L1454.0 807.5L1458.2 812.1L1461.7 815.3L1461.4 818.8L1459.3 818.8L1454.7 814.2L1451.6 808.6L1448.4 805.5Z M1460.6 820.2L1462.4 819.1L1465.2 819.8L1468.4 819.7L1471.1 820.4L1473.6 821.7L1473.6 822.9L1468.7 822.4L1464.5 821.7Z M1465.9 808.6L1468.7 808.3L1471.5 806.2L1475.0 803.7L1477.1 800.9L1479.9 803.4L1478.1 805.8L1479.9 809.3L1477.8 810.0L1476.4 813.5L1475.7 816.3L1473.6 816.3L1471.5 815.2L1469.4 815.3L1467.3 812.5L1465.9 810.3Z M1481.0 809.6L1482.4 808.9L1486.2 809.3L1488.3 808.3L1487.6 810.1L1482.7 810.1L1481.7 812.1L1485.9 812.1L1483.8 813.5L1485.2 817.0L1483.4 817.3L1482.7 814.6L1481.7 814.9L1481.9 818.6L1480.6 818.4L1479.9 815.2Z M1496.7 811.8L1500.9 811.8L1502.3 815.3L1506.5 813.1L1510.7 814.3L1516.3 816.7L1519.8 819.1L1519.1 820.2L1524.1 825.5L1520.5 825.1L1517.7 822.2L1514.9 821.5L1512.8 823.6L1510.7 823.6L1507.9 822.2L1506.5 821.2L1507.2 819.1L1503.7 817.2L1499.5 816.3L1498.1 814.6Z M1486.2 825.2L1488.3 822.9L1491.4 822.5L1488.3 824.5Z M1475.4 822.7L1479.9 822.5L1485.5 822.4L1481.3 824.1L1475.7 823.4Z M1521.2 818.4L1524.8 817.0L1526.6 816.7L1525.5 819.1L1521.9 819.5Z M1472.5 843.1L1473.2 848.4L1471.8 848.4L1475.3 857.2L1474.3 861.9L1478.5 863.1L1481.3 861.4L1486.2 861.4L1489.7 858.6L1493.9 857.6L1497.0 857.2L1500.9 859.4L1503.2 862.8L1503.7 860.9L1506.1 859.2L1505.8 863.1L1508.6 864.8L1510.5 868.3L1514.2 869.8L1516.3 868.7L1518.4 870.1L1523.4 867.4L1524.3 863.1L1525.5 859.7L1527.6 856.4L1528.3 851.6L1527.6 846.9L1524.8 844.6L1521.9 840.1L1518.2 837.8L1517.7 834.9L1516.8 832.0L1514.2 830.9L1512.8 825.9L1511.7 828.4L1511.4 832.7L1509.3 835.8L1506.3 833.4L1503.0 832.0L1504.9 827.9L1502.3 827.9L1498.8 826.6L1496.0 828.4L1494.6 832.0L1492.2 830.9L1489.7 830.5L1486.9 834.1L1484.5 835.6L1484.1 837.1L1480.6 839.3L1476.8 840.2L1473.3 842.0Z M1515.9 873.2L1521.0 873.4L1520.5 877.6L1518.4 878.7L1516.8 876.6Z M1555.2 862.1L1557.4 865.2L1559.5 866.0L1563.3 867.8L1561.2 871.0L1558.7 874.9L1558.1 871.4L1556.7 870.7L1558.1 867.4Z M1555.2 872.9L1557.4 875.1L1555.2 879.1L1552.8 883.2L1549.3 884.7L1546.5 883.0L1549.3 879.5L1552.8 875.7Z M1543.0 839.6L1546.5 842.0L1547.2 842.9L1544.4 841.6Z M1149.3 646.9L1156.3 639.4L1164.7 642.3L1165.4 647.9L1159.1 650.6L1152.1 649.0Z M1167.5 645.2L1173.1 638.2L1177.3 642.3L1175.9 647.9L1170.3 647.9Z M1169.6 660.5L1174.5 653.2L1178.0 658.1L1177.3 665.0L1173.1 665.9Z M1178.7 622.8L1187.1 627.8L1191.3 619.1L1187.1 606.6L1180.1 611.0Z M1191.3 688.1L1195.5 686.4L1200.4 691.4L1199.0 694.6L1193.4 695.2L1191.3 693.0Z M1173.8 674.6L1177.3 672.2L1179.4 675.4L1177.3 677.3Z M1446.3 622.8L1453.3 629.9L1460.3 626.4L1458.9 615.1L1450.5 606.6L1444.9 615.1Z M1505.1 647.9L1512.1 654.2L1523.4 649.0L1520.5 642.3L1509.3 642.3Z M1563.3 667.2L1567.5 668.1L1568.2 665.0L1564.0 664.6Z" fill="#50573c"/>
<g clip-path="url(#landclip)"><g filter="url(#b6)">
<ellipse cx="1173.1" cy="673.7" rx="56.0" ry="31.3" fill="#6b6a55" opacity="0.9"/>
<ellipse cx="1152.1" cy="717.3" rx="28.0" ry="12.3" fill="#414c33" opacity="0.9"/>
<ellipse cx="1204.6" cy="726.5" rx="24.5" ry="13.5" fill="#3f4c32" opacity="0.9"/>
<ellipse cx="1155.6" cy="752.9" rx="17.5" ry="16.9" fill="#6a624b" opacity="0.85"/>
<ellipse cx="1190.6" cy="754.9" rx="17.5" ry="14.9" fill="#4c583c" opacity="0.8"/>
<ellipse cx="1169.6" cy="778.0" rx="10.5" ry="11.4" fill="#5f5c40" opacity="0.8"/>
<ellipse cx="1224.9" cy="816.4" rx="21.0" ry="14.1" fill="#33452a" opacity="1"/>
<ellipse cx="1243.2" cy="832.3" rx="16.8" ry="14.6" fill="#525a38" opacity="0.8"/>
<ellipse cx="1217.9" cy="869.8" rx="8.4" ry="33.5" fill="#665c46" opacity="0.9"/>
<ellipse cx="1325.8" cy="776.3" rx="37.8" ry="14.6" fill="#94856a" opacity="1"/>
<ellipse cx="1330.0" cy="793.7" rx="39.2" ry="5.7" fill="#676442" opacity="0.8"/>
<ellipse cx="1339.8" cy="811.4" rx="18.2" ry="10.5" fill="#38492c" opacity="1"/>
<ellipse cx="1342.6" cy="845.7" rx="12.6" ry="12.3" fill="#70644a" opacity="0.9"/>
<ellipse cx="1362.2" cy="829.6" rx="9.8" ry="18.9" fill="#585a3a" opacity="0.8"/>
<ellipse cx="1379.0" cy="776.9" rx="18.2" ry="16.9" fill="#998a6e" opacity="1"/>
<ellipse cx="1394.5" cy="760.9" rx="19.6" ry="15.2" fill="#80755a" opacity="0.95"/>
<ellipse cx="1408.5" cy="743.1" rx="30.8" ry="13.5" fill="#777156" opacity="0.9"/>
<ellipse cx="1442.1" cy="753.9" rx="22.4" ry="15.9" fill="#787058" opacity="0.95"/>
<ellipse cx="1423.9" cy="783.0" rx="15.4" ry="16.4" fill="#5a5d3c" opacity="0.85"/>
<ellipse cx="1465.2" cy="797.3" rx="23.1" ry="27.5" fill="#3a4b2e" opacity="0.9"/>
<ellipse cx="1470.8" cy="762.4" rx="17.5" ry="16.7" fill="#55593e" opacity="0.8"/>
<ellipse cx="1460.3" cy="708.0" rx="105.1" ry="21.6" fill="#48553a" opacity="0.9"/>
<ellipse cx="1474.3" cy="654.6" rx="105.1" ry="31.8" fill="#68685a" opacity="0.9"/>
<ellipse cx="1332.8" cy="733.5" rx="36.4" ry="23.1" fill="#4b563c" opacity="0.8"/>
<ellipse cx="1338.4" cy="686.6" rx="19.6" ry="23.8" fill="#4e5642" opacity="0.8"/>
<ellipse cx="1496.7" cy="847.3" rx="23.8" ry="12.4" fill="#80644a" opacity="1"/>
<ellipse cx="1519.8" cy="848.4" rx="10.5" ry="23.6" fill="#4f5838" opacity="0.8"/>
<ellipse cx="1509.3" cy="819.2" rx="21.0" ry="8.5" fill="#33472a" opacity="0.9"/>
</g>
<rect x="1144" y="624" width="410" height="293" filter="url(#tex)" opacity=".2"/>
<rect x="1144" y="624" width="410" height="293" filter="url(#tex2)" opacity=".5"/>
</g>
<path d="M1210.9 628.5L1217.9 642.3L1231.9 645.2L1237.5 671.4L1241.7 686.4L1246.0 702.1L1251.6 705.0L1254.4 699.2L1257.2 689.8L1268.4 679.2L1282.4 671.4L1282.4 658.1L1288.0 642.3L1285.2 615.1L1271.2 586.4L1250.2 592.0L1229.1 597.2Z" fill="#eceeef" stroke="#6d7468" stroke-width="2.200" stroke-linejoin="round" filter="url(#b1)"/>
<path d="M1187.1 636.3L1201.1 639.4L1208.1 622.8L1222.1 597.2L1208.1 586.4L1187.1 602.0Z M1178.7 647.9L1189.9 650.6L1201.1 647.9L1198.3 640.6L1184.3 639.4Z M1328.6 629.9L1337.0 638.2L1344.0 629.9L1351.0 615.1L1338.4 612.7L1328.6 619.1Z M1386.1 667.2L1391.7 668.5L1394.5 655.7L1408.5 639.4L1405.7 636.3L1393.1 645.2L1386.1 660.5Z M1178.7 622.8L1187.1 627.8L1191.3 619.1L1187.1 606.6L1180.1 611.0Z M1446.3 622.8L1453.3 629.9L1460.3 626.4L1458.9 615.1L1450.5 606.6L1444.9 615.1Z" fill="#c9d0d4" opacity=".6" filter="url(#b1)"/>
<path d="M1201.1 655.7L1212.3 665.0L1219.3 675.4L1226.3 684.7L1222.1 699.2L1217.9 696.2L1212.3 691.4L1203.9 689.8L1209.5 679.2L1201.1 671.4L1192.7 669.3L1187.1 662.8L1194.1 654.2Z M1147.9 665.0L1159.1 658.1L1167.5 658.1L1171.7 671.4L1166.1 677.3L1154.9 679.2L1147.9 671.4Z M1138.1 662.8L1145.1 651.6L1150.7 655.7L1146.5 665.0L1139.5 665.9Z M1279.6 688.1L1282.4 693.0L1287.3 694.9L1293.6 691.4L1292.5 686.4L1288.0 685.4L1282.4 685.4Z M1149.3 646.9L1156.3 639.4L1164.7 642.3L1165.4 647.9L1159.1 650.6L1152.1 649.0Z M1167.5 645.2L1173.1 638.2L1177.3 642.3L1175.9 647.9L1170.3 647.9Z M1169.6 660.5L1174.5 653.2L1178.0 658.1L1177.3 665.0L1173.1 665.9Z M1179.4 659.1L1184.3 659.1L1186.4 654.2L1181.5 652.2L1178.7 654.2Z M1191.3 688.1L1195.5 686.4L1200.4 691.4L1199.0 694.6L1193.4 695.2L1191.3 693.0Z M1173.8 674.6L1177.3 672.2L1179.4 675.4L1177.3 677.3Z M1505.1 647.9L1512.1 654.2L1523.4 649.0L1520.5 642.3L1509.3 642.3Z" fill="#a09e8c" opacity=".42"/>
<path d="M1379.0 740.0L1383.2 736.3L1387.5 736.9L1386.8 740.9L1384.0 740.9L1386.8 745.7L1388.2 749.5L1388.6 754.5L1384.7 755.4L1381.8 754.0L1382.5 748.9L1379.7 744.2Z M1184.3 736.3L1189.9 732.8L1194.1 734.9L1194.5 736.9L1191.3 736.9L1187.1 736.5Z M1190.2 745.7L1192.3 745.7L1193.4 740.0L1194.4 738.4L1191.3 738.8L1190.2 741.9Z M1194.8 738.4L1199.0 738.2L1201.1 740.5L1198.7 743.5L1196.2 741.9L1196.5 740.0Z M1196.5 746.3L1202.5 744.2L1202.5 743.8L1199.7 744.4L1196.5 745.7Z M1201.5 743.3L1206.3 742.7L1206.3 741.7L1202.5 742.3Z M1357.6 811.1L1360.8 810.3L1360.8 813.5L1358.0 814.5Z M1394.9 741.9L1397.3 736.9L1399.4 739.0L1397.3 742.5Z M1458.6 726.2L1461.7 724.4L1466.6 716.8L1465.9 716.3L1461.0 722.8L1458.6 725.6Z M1174.8 728.5L1178.0 728.5L1176.6 720.9L1174.5 722.8Z M1149.3 702.1L1156.3 697.7L1160.5 696.8L1156.3 701.6Z M1138.8 686.4L1145.1 682.9L1147.9 688.1L1142.3 689.8Z" fill="#0a1626"/>
<path d="M1140.9 731.7L1180.1 731.7L1187.8 733.8L1194.8 736.9L1197.6 739.4L1197.6 744.8L1202.5 743.5L1206.0 741.9L1208.5 740.0L1213.0 740.0L1216.3 735.1L1218.2 735.9L1218.6 739.6 M1149.3 762.5L1152.4 762.5L1157.7 764.5L1161.6 764.5L1164.0 763.7L1166.8 767.3L1168.9 768.2L1171.7 766.9L1173.8 770.6L1177.0 773.0 M1115.7 705.0L1115.7 671.4 M1184.0 790.0L1185.7 788.0L1186.4 785.4L1188.2 785.4L1188.2 788.1L1189.5 788.4 M1188.2 790.3L1190.3 791.8 M1190.9 792.3L1194.4 789.7L1196.6 789.4 M1193.1 795.1L1195.9 795.3 M1197.1 797.3L1197.1 799.3 M1212.7 782.5L1212.7 785.1 M1241.0 804.7L1237.5 807.5L1231.9 808.6L1229.1 803.7L1223.5 805.1L1219.3 809.3L1215.1 810.7L1215.1 816.6L1210.9 821.2L1214.4 826.2L1221.7 824.8L1228.4 830.1L1231.9 833.9L1231.9 839.3L1234.7 842.8L1236.8 847.7L1232.6 855.1L1238.4 860.9 M1212.3 793.8L1211.6 799.5L1218.6 802.3L1219.3 809.3 M1202.5 809.0L1207.4 811.0L1215.1 816.6 M1200.7 815.5L1203.2 817.4L1207.4 811.0 M1214.4 826.2L1216.5 832.7L1215.8 835.6L1217.0 843.5L1219.3 843.5L1225.6 842.6L1231.9 839.3 M1217.0 843.5L1215.1 854.8L1214.4 864.8L1212.7 877.6L1211.6 891.8L1216.5 896.3 M1225.6 842.6L1231.9 850.0L1236.8 847.7 M1231.9 850.0L1232.2 855.1L1231.4 861.2 M1229.1 803.7L1232.9 803.0 M1231.9 808.6L1233.3 802.3 M1237.5 807.5L1237.5 802.7 M1229.1 798.7L1227.7 802.3L1229.1 803.7 M1310.4 758.3L1311.1 763.3L1301.0 768.7L1301.0 770.6L1295.0 770.3 M1301.0 770.6L1301.0 773.0L1296.4 773.0L1296.4 777.1L1295.0 777.6L1295.0 780.1L1289.4 780.1 M1325.2 754.8L1324.4 761.7L1326.5 766.1L1327.2 775.3L1330.0 776.8 M1329.3 761.3L1326.5 766.1 M1301.0 770.6L1306.5 774.5L1314.9 780.6L1317.4 783.6L1319.1 783.3L1321.6 782.7L1330.0 776.8 M1348.2 764.0L1348.2 779.1L1364.9 779.1 M1330.0 776.8L1334.2 777.6L1346.8 782.8L1346.8 788.4 M1348.2 779.1L1348.2 782.1L1346.8 782.1L1346.8 782.8 M1306.5 774.5L1304.1 774.5L1305.5 788.7L1297.1 788.7L1296.1 789.7 M1319.1 783.3L1319.1 788.0L1318.1 788.9L1313.5 789.4 M1334.2 777.6L1334.9 782.1L1335.6 786.5L1333.5 792.3 M1318.2 794.2L1318.8 791.6L1323.0 792.3L1327.2 791.9L1332.3 791.3 M1346.8 788.4L1344.7 790.9L1344.7 795.2L1346.8 798.5 M1346.8 798.5L1351.0 797.2L1359.4 797.3L1360.8 798.7L1359.4 799.7L1362.2 803.1L1363.6 804.5 M1363.6 804.5L1368.5 805.8L1372.0 804.8L1376.2 803.7L1380.4 799.5L1373.4 794.5L1372.6 793.0L1369.2 790.2L1366.4 790.2L1364.3 790.5L1363.6 792.8L1360.8 795.5L1360.8 798.7 M1364.3 790.5L1365.0 786.5L1367.1 785.1 M1360.8 812.1L1366.0 815.0L1368.1 817.3 M1360.8 804.8L1363.6 804.5 M1360.8 804.8L1361.5 809.3L1360.8 812.1L1355.9 812.2 M1370.6 813.1L1370.6 806.5L1372.0 804.8 M1346.8 798.5L1351.7 803.7L1355.9 805.8L1360.8 804.8 M1330.4 818.8L1331.4 817.2L1335.6 817.4L1338.4 814.2L1338.0 811.4L1339.1 805.8L1339.3 804.7L1344.7 805.0L1348.9 803.4L1351.7 803.7L1355.9 805.8L1356.6 807.6L1354.8 811.4L1354.2 812.8L1353.8 817.0L1355.9 822.4L1353.1 822.7L1353.1 828.4L1351.0 827.6L1346.8 826.2L1344.0 826.2L1344.0 829.1L1346.8 829.1L1344.0 833.7L1345.8 835.8L1342.6 836.3L1331.4 835.5L1329.7 835.3 M1330.4 818.8L1336.5 819.0L1337.0 821.9L1340.4 821.9L1344.0 826.2 M1342.6 836.3L1342.6 842.3L1341.2 842.3L1341.2 852.2L1337.0 851.7L1336.3 852.5 M1341.2 846.6L1345.1 847.4L1348.9 848.0L1351.0 844.9L1354.4 842.6L1357.1 842.9 M1348.6 836.0L1351.0 836.3L1353.7 833.3L1355.8 833.0 M1357.1 842.9L1358.0 846.1L1358.0 849.7 M1355.8 833.0L1355.5 831.7L1359.7 830.5L1361.5 831.2L1363.5 834.9L1362.2 834.9L1359.3 837.4L1358.7 841.3L1357.1 842.9 M1362.1 827.1L1369.8 825.5 M1356.4 822.4L1359.4 823.9L1362.1 827.1L1361.5 831.2 M1359.7 830.5L1359.0 824.2 M1354.4 842.6L1348.6 836.0L1345.8 835.8 M1289.8 788.0L1293.6 787.1L1296.1 789.7L1297.2 793.2L1294.0 792.9L1289.8 793.2 M1292.2 795.2L1294.0 792.9 M1297.2 793.2L1302.0 796.3L1301.6 800.2L1302.7 804.5 M1302.0 796.3L1305.5 796.0L1309.3 797.3L1308.9 803.7 M1294.6 798.0L1298.8 798.9L1297.1 801.0 M1298.8 798.9L1301.6 800.2 M1309.3 797.3L1309.3 795.2L1313.2 795.2L1313.9 799.5L1314.9 802.1 M1315.4 802.0L1315.4 798.0L1314.3 795.2L1318.2 794.2L1317.0 801.7 M1325.1 804.1L1326.5 801.6L1329.3 801.2L1332.1 796.6L1333.5 792.3 M1305.5 796.0L1305.5 793.8L1307.6 791.9L1310.4 789.4L1313.5 789.4L1316.3 793.2L1314.3 795.2 M1333.5 792.3L1334.2 796.6L1332.8 799.5L1334.9 800.2L1333.5 803.7L1335.6 807.6L1339.1 805.8 M1334.9 800.2L1339.8 798.0L1344.7 795.2 M1326.9 807.5L1331.8 807.6L1333.4 813.4L1328.9 816.2 M1335.6 807.6L1331.8 807.6 M1326.9 809.3L1329.0 809.3L1329.0 807.6 M1300.9 745.9L1304.1 746.3L1303.4 750.0L1302.7 754.5 M1310.7 743.1L1317.7 745.0 M1316.7 727.1L1319.1 729.6L1321.6 730.7L1324.7 731.7L1323.8 734.7L1321.6 737.3L1323.0 738.2L1323.0 741.5L1323.7 742.3 M1323.0 722.1L1322.7 725.1L1321.6 727.8L1321.6 730.7 M1318.0 726.5L1321.6 727.8 M1325.4 718.3L1326.9 718.5 M1333.1 720.7L1333.8 727.4L1334.2 727.4 M1330.2 728.9L1333.8 727.4 M1330.2 728.9L1332.5 732.4L1331.4 734.9L1327.9 734.9L1326.6 734.9L1323.8 734.7 M1323.0 738.2L1325.8 738.0L1327.9 736.3L1330.3 735.9L1332.4 736.9 M1332.5 732.4L1334.2 731.7L1337.0 732.2L1337.0 733.8L1335.8 736.1L1332.4 736.9L1332.4 738.8 M1334.2 727.4L1336.3 728.9L1339.5 730.7L1344.7 731.5L1346.8 728.5L1346.1 724.0L1346.1 720.5L1340.9 719.5 M1337.0 732.2L1339.5 730.7 M1337.0 733.8L1339.5 734.3L1344.3 733.0L1344.7 731.5 M1344.3 733.0L1342.6 737.5L1341.5 737.8L1339.5 738.2L1335.8 736.1 M1344.3 733.0L1350.5 733.2L1352.7 739.0L1354.8 739.6 M1345.0 741.5L1351.0 741.7L1353.3 742.5 M1342.6 737.5L1345.0 741.5L1344.6 745.2L1342.6 745.7L1341.9 747.6L1341.2 750.0 M1339.5 738.2L1339.8 740.1L1340.5 742.9L1339.1 744.8 M1335.2 739.6L1339.8 740.1 M1332.4 738.8L1335.2 739.6L1336.3 736.9 M1344.6 745.2L1350.0 746.3L1352.4 745.7 M1341.9 747.6L1345.3 747.1L1350.0 746.3L1349.6 748.0 M1346.1 726.2L1355.9 726.7L1360.8 724.4L1362.9 728.7L1369.2 730.4L1368.8 734.3L1366.7 735.7 M1346.1 720.5L1350.3 716.3L1352.7 715.1L1356.5 716.6L1359.0 721.9L1357.3 724.9L1355.9 726.7 M1342.6 715.3L1350.3 716.3 M1347.2 710.7L1351.7 711.7L1352.7 715.1 M1352.4 706.4L1351.7 711.7 M1352.4 675.4L1353.8 683.2L1355.2 694.6L1357.3 696.5L1352.1 703.6 M1346.8 687.1L1346.4 679.6L1341.9 675.4L1349.2 674.6L1352.4 675.4L1356.4 673.0 M1341.9 675.4L1338.4 677.3L1334.2 685.7L1333.5 691.4L1330.0 694.6L1330.4 700.7L1329.3 707.7L1328.9 708.0 M1350.5 733.2L1353.1 733.8L1355.2 737.1 M1303.0 718.0L1301.9 719.5L1304.4 720.2 M1363.6 755.4L1364.6 755.2L1366.4 755.2L1372.5 754.5L1376.0 754.5L1375.5 750.0L1374.3 747.4L1371.3 746.7 M1369.2 743.1L1374.8 744.6L1378.3 746.1L1381.1 746.1 M1374.3 747.4L1376.2 747.2L1378.3 746.1 M1375.5 750.0L1378.3 751.5L1380.4 750.4L1381.7 752.4 M1376.2 747.2L1378.3 751.5 M1363.1 761.2L1364.3 762.7L1367.6 761.0L1370.6 759.3L1372.5 754.5 M1367.6 761.0L1368.1 763.0L1365.0 764.2L1366.4 765.8L1365.0 767.9L1362.2 767.6 M1361.3 764.5L1362.1 767.4 M1362.9 761.5L1363.1 762.8L1362.8 764.3 M1363.6 759.0L1364.3 759.1L1364.2 760.3L1363.1 761.2 M1368.1 763.0L1372.0 764.8L1375.8 767.9L1378.3 768.1L1380.0 766.6L1380.4 766.6 M1378.3 768.1L1380.0 769.0L1381.0 769.0 M1380.4 766.6L1380.0 765.0L1377.6 761.7L1376.8 760.0L1378.1 756.9L1376.0 754.5 M1385.5 776.0L1386.9 777.7L1390.5 778.0L1391.2 782.1L1386.1 783.6L1381.8 784.2L1379.0 786.7L1375.5 785.9L1373.7 785.9L1373.2 787.4 M1386.1 783.6L1387.6 787.0 M1390.5 778.0L1391.7 774.7 M1391.2 782.1L1393.1 783.7 M1381.7 752.4L1381.8 753.8 M1388.7 754.3L1392.4 752.7L1398.9 755.5L1398.7 760.0L1398.4 766.8L1399.8 768.2L1401.9 771.4L1399.5 774.2 M1398.4 766.8L1406.1 766.9L1410.3 763.5L1412.7 759.1L1413.5 755.7L1418.1 754.5L1412.7 752.4L1408.2 754.5L1405.0 754.3L1398.9 755.5 M1418.1 754.5L1422.2 757.4L1423.6 759.5L1423.9 762.7L1423.6 765.0L1426.7 766.3 M1418.1 754.5L1416.6 750.2L1416.7 749.5 M1408.7 776.5L1412.7 775.4L1410.7 771.1L1414.1 769.5L1416.7 766.6L1417.6 762.0L1422.2 757.4 M1426.7 766.3L1425.4 768.5L1430.9 770.6L1436.6 772.3L1437.7 770.9L1442.1 771.5L1442.2 770.1L1449.5 769.3 M1426.7 766.3L1433.7 769.8L1437.7 770.9 M1436.6 772.3L1436.6 779.7 M1436.6 772.3L1439.0 773.0L1442.7 774.5L1442.5 776.5L1441.0 776.5L1442.7 780.6 M1449.5 769.3L1451.5 770.4L1449.8 776.0L1452.2 778.9L1455.0 779.8L1453.4 781.6 M1442.7 780.6L1443.9 776.0L1446.3 771.9L1449.5 769.3 M1453.4 781.6L1450.5 782.5L1449.7 784.3L1451.8 787.5L1450.8 789.2L1452.2 794.2L1451.5 796.3 M1453.4 781.6L1455.0 785.8L1456.2 784.8L1458.9 784.6L1461.1 790.3L1456.7 790.3L1457.4 794.2 M1455.0 779.8L1456.4 778.5L1458.9 778.3L1460.7 777.1L1462.7 777.9L1464.5 779.8 M1456.4 778.5L1458.9 781.5L1460.6 784.2L1463.9 789.9L1463.8 793.3L1461.6 794.2L1459.5 796.0 M1461.1 790.3L1463.9 789.9 M1453.4 801.7L1456.1 802.0 M1466.7 807.9L1469.8 809.3L1474.0 808.7L1475.3 804.8L1478.0 804.8 M1510.7 814.3L1510.7 823.5 M1416.7 749.5L1412.0 748.9L1412.7 744.8L1409.9 746.9L1406.4 747.6L1406.4 753.1L1408.2 754.5 M1416.7 749.5L1425.6 745.4L1425.7 740.0L1428.8 739.6L1433.0 735.9L1435.5 731.3 M1412.7 744.8L1417.9 743.5L1425.6 745.4 M1412.0 748.9L1416.6 750.2 M1406.4 747.6L1400.1 742.9L1395.3 738.8L1391.7 740.0L1391.7 747.1L1388.9 745.2L1386.8 746.1 M1391.7 747.1L1395.2 744.4L1399.4 747.1L1400.8 749.5L1406.4 753.1L1405.0 754.3 M1378.8 733.0L1378.5 732.4L1379.5 728.9L1381.4 730.0L1384.4 725.8L1389.6 727.4L1396.7 728.0L1399.4 727.4L1397.5 721.6L1399.4 720.7L1404.3 719.5L1409.9 717.3L1412.7 720.0L1420.4 720.0L1422.3 722.3L1425.4 727.8L1430.2 727.4L1435.5 731.3 M1435.5 731.3L1440.7 739.6L1446.9 741.5L1449.1 744.2L1459.6 745.9L1462.7 745.4L1470.0 742.5L1470.0 740.0L1475.3 738.6L1481.0 736.5L1477.1 734.3L1475.4 734.3L1476.7 730.0 M1435.5 731.3L1442.1 728.0L1450.5 729.6L1450.8 725.1L1456.4 728.5L1462.4 728.9L1471.8 730.0L1476.7 730.0L1480.3 728.5L1482.3 723.7L1486.2 721.6L1489.7 723.3L1491.8 730.0L1496.6 734.5L1502.1 733.0L1499.7 739.8L1497.0 740.3L1496.3 745.2 M1487.3 749.5L1491.0 746.1L1492.7 745.7L1494.9 744.0L1496.3 745.2 M1489.9 753.4L1493.1 752.0" fill="none" stroke="#e2e2d8" stroke-width=".55" opacity=".55" stroke-linejoin="round"/>
<path d="M1138.1 733.8L1133.9 727.4L1126.9 713.0L1117.1 705.0L1103.0 702.1L1091.8 713.0L1082.0 705.0L1080.6 686.4L1094.6 667.2L1117.1 671.4L1131.1 671.4L1145.1 673.4L1159.1 679.2L1173.1 679.2L1180.1 662.8L1187.1 675.4L1194.1 677.3L1198.3 682.9L1191.3 693.0L1182.9 702.1L1181.5 709.1L1187.1 713.0L1194.1 717.3L1198.3 722.8L1201.8 726.2L1202.5 719.3L1205.3 713.0L1203.9 705.0L1203.9 697.7L1210.9 698.3L1215.1 702.1L1222.1 705.0L1223.5 713.0L1229.1 718.0L1234.7 724.0L1229.1 729.6L1220.7 729.6L1215.1 734.9L1222.1 731.7L1222.8 735.9L1227.7 738.0L1222.1 742.5L1215.1 742.9L1214.4 746.1L1209.5 748.5L1207.4 753.1L1206.7 758.3L1202.5 761.7L1199.7 765.0L1201.1 771.4L1200.4 774.2L1197.6 769.8L1195.5 766.6L1188.5 766.6L1187.1 768.2L1181.5 767.4L1177.3 770.6L1176.6 778.3L1180.1 784.0L1185.7 784.0L1186.4 780.6L1191.3 780.1L1189.9 785.1L1189.2 788.0L1195.5 788.3L1196.2 793.8L1196.9 796.6L1199.7 798.3L1201.8 797.3L1204.6 798.7L1203.9 800.6L1201.1 800.6L1199.0 799.7L1196.9 799.0L1193.1 796.6L1190.6 792.3L1185.0 790.9L1180.8 787.7L1177.3 788.3L1171.7 786.2L1165.4 782.1L1165.4 778.3L1160.5 773.7L1155.6 767.4L1152.5 764.2L1152.8 766.6L1157.3 773.0L1159.4 777.6L1156.3 774.5L1152.1 768.2L1149.3 762.5L1144.4 759.1L1141.6 754.0L1139.1 748.9L1139.5 741.9Z M1201.1 655.7L1212.3 665.0L1219.3 675.4L1226.3 684.7L1222.1 699.2L1217.9 696.2L1212.3 691.4L1203.9 689.8L1209.5 679.2L1201.1 671.4L1192.7 669.3L1187.1 662.8L1194.1 654.2Z M1147.9 665.0L1159.1 658.1L1167.5 658.1L1171.7 671.4L1166.1 677.3L1154.9 679.2L1147.9 671.4Z M1138.1 662.8L1145.1 651.6L1150.7 655.7L1146.5 665.0L1139.5 665.9Z M1187.1 636.3L1201.1 639.4L1208.1 622.8L1222.1 597.2L1208.1 586.4L1187.1 602.0Z M1178.7 647.9L1189.9 650.6L1201.1 647.9L1198.3 640.6L1184.3 639.4Z M1179.4 659.1L1184.3 659.1L1186.4 654.2L1181.5 652.2L1178.7 654.2Z M1230.5 734.5L1234.7 736.3L1238.9 736.5L1238.9 732.8L1234.7 726.2L1231.9 729.6Z M1194.1 779.1L1198.3 777.6L1203.9 778.6L1209.2 781.8L1204.6 782.2L1201.1 779.5L1195.5 779.5Z M1209.0 784.3L1212.3 782.4L1217.2 784.0L1213.7 785.4Z M1204.6 798.7L1208.1 795.2L1212.3 793.8L1215.1 794.5L1217.9 795.9L1226.3 795.6L1229.1 798.7L1233.3 802.3L1240.3 803.7L1243.2 809.3L1243.2 811.4L1250.2 812.8L1257.2 814.9L1263.7 818.4L1264.2 823.4L1260.7 828.4L1258.6 834.9L1255.8 842.3L1250.2 844.9L1245.3 848.4L1245.0 852.4L1240.3 859.7L1236.8 862.8L1232.6 862.3L1233.3 868.3L1226.3 870.1L1222.1 873.8L1224.2 876.6L1221.4 881.4L1218.6 884.5L1220.7 887.6L1216.5 894.0L1217.2 898.6L1221.4 903.4L1215.1 904.6L1209.5 898.6L1207.4 887.6L1210.2 875.7L1210.2 866.6L1213.0 856.4L1214.4 845.4L1214.7 836.8L1206.7 830.5L1202.5 821.9L1199.4 817.7L1201.1 814.2L1200.4 810.7L1203.2 807.9L1204.9 805.1L1204.6 800.9Z M1304.8 756.9L1311.8 758.0L1317.4 755.2L1327.2 754.5L1328.6 760.3L1334.2 762.8L1341.2 765.0L1341.2 762.0L1348.2 763.7L1353.8 765.0L1358.7 764.7L1360.8 768.2L1362.9 776.0L1365.5 782.1L1368.5 789.0L1373.4 793.8L1375.5 795.9L1384.7 794.1L1384.0 798.0L1380.4 804.4L1373.4 812.1L1369.2 816.3L1367.8 820.5L1369.9 826.2L1369.9 832.0L1362.9 839.3L1362.7 845.4L1359.2 848.4L1356.6 854.8L1351.0 860.9L1344.0 861.7L1339.8 862.3L1338.4 858.1L1334.9 850.0L1333.5 842.3L1330.0 834.9L1332.1 827.6L1330.3 819.1L1325.8 812.1L1326.8 805.8L1323.0 804.5L1319.5 802.0L1314.6 802.6L1309.0 803.7L1302.7 804.5L1297.8 801.2L1294.6 798.0L1292.2 795.2L1289.7 791.6L1288.7 789.9L1290.4 785.1L1290.1 780.6L1292.9 774.5L1295.0 770.3L1299.2 767.4L1299.6 763.3L1304.1 760.0Z M1382.3 827.6L1383.7 832.7L1381.8 837.1L1379.7 846.6L1376.2 847.7L1374.1 843.1L1375.3 837.8L1375.5 833.4L1379.0 832.0Z M1300.6 754.8L1300.2 751.3L1300.9 746.7L1300.3 743.5L1306.2 742.7L1310.7 743.1L1311.5 738.0L1306.9 733.4L1311.1 732.4L1313.5 730.7L1315.6 727.6L1318.1 726.5L1319.8 722.8L1323.0 721.4L1325.4 720.5L1324.7 713.5L1327.9 711.7L1327.9 715.6L1327.2 719.3L1328.6 720.5L1332.1 719.7L1339.1 718.8L1342.6 717.3L1342.6 713.0L1346.8 712.5L1346.1 707.2L1352.4 706.1L1355.2 705.0L1353.1 703.3L1345.4 705.0L1343.3 702.1L1343.3 696.2L1348.2 689.8L1346.8 687.1L1344.0 688.1L1342.6 692.4L1338.4 697.7L1337.0 702.7L1339.5 705.5L1336.3 713.0L1333.2 716.1L1331.1 716.6L1328.9 709.1L1324.4 710.2L1320.9 708.3L1320.2 700.7L1325.1 694.6L1330.0 688.1L1333.5 679.2L1339.8 671.4L1348.2 667.2L1355.2 670.6L1359.4 674.2L1370.6 680.3L1369.9 684.7L1362.2 685.4L1359.4 684.0L1362.0 691.4L1365.7 693.0L1369.7 690.8L1369.9 686.4L1374.8 685.7L1374.8 678.1L1379.0 682.9L1388.2 678.1L1397.3 676.2L1398.7 671.4L1407.1 676.2L1408.5 667.2L1414.1 660.5L1415.5 675.4L1416.2 665.0L1425.3 657.2L1435.1 653.2L1435.1 646.3L1450.5 640.6L1458.9 631.9L1471.5 642.3L1470.1 654.2L1491.1 656.7L1495.3 667.2L1509.3 659.1L1523.4 665.0L1537.4 672.2L1551.4 671.4L1565.4 675.4L1565.4 686.4L1579.4 688.1L1576.6 691.4L1562.6 691.4L1564.0 697.7L1551.4 705.0L1541.6 706.4L1542.3 713.0L1540.2 718.0L1533.2 726.2L1531.8 713.0L1537.4 702.1L1531.8 700.7L1529.7 706.4L1513.5 706.9L1503.0 718.8L1511.4 722.8L1509.3 733.8L1503.0 741.9L1497.4 743.8L1494.9 746.7L1491.8 749.8L1494.3 754.8L1493.9 758.0L1490.1 759.1L1490.7 753.6L1488.3 750.2L1484.1 751.1L1483.4 748.0L1478.5 751.3L1480.6 754.5L1484.8 754.8L1480.3 758.3L1483.8 764.2L1483.8 768.2L1480.3 773.7L1476.4 777.6L1472.2 778.6L1467.7 780.1L1464.9 779.5L1461.7 782.8L1465.5 788.7L1466.3 793.8L1462.8 796.0L1460.3 798.3L1460.0 795.9L1456.5 793.5L1453.7 791.6L1452.3 796.6L1454.7 801.2L1458.1 805.1L1459.2 808.7L1458.1 808.6L1454.7 806.5L1453.7 802.3L1450.9 799.5L1451.3 795.2L1450.1 788.0L1445.6 788.0L1445.3 783.6L1441.8 778.3L1437.9 779.4L1435.1 780.6L1432.3 782.4L1428.1 787.3L1425.6 788.7L1425.6 793.0L1425.0 796.2L1422.5 799.0L1420.4 798.0L1418.0 792.3L1415.5 785.8L1415.2 780.6L1412.0 780.9L1409.9 778.6L1407.5 775.0L1400.1 774.2L1393.5 773.4L1392.4 771.4L1388.9 772.0L1384.7 769.8L1383.2 766.3L1380.4 767.4L1383.2 771.9L1385.4 774.5L1385.5 776.0L1388.9 775.7L1391.9 773.0L1392.5 775.6L1397.0 778.3L1394.2 783.6L1390.5 785.8L1386.1 788.0L1381.1 790.9L1376.2 792.6L1373.9 792.8L1373.0 787.5L1367.8 779.8L1365.3 774.5L1362.2 769.8L1362.1 767.4L1361.1 764.5L1363.2 759.1L1363.6 755.4L1358.7 756.2L1356.1 755.2L1352.4 755.5L1351.4 754.3L1350.0 750.7L1350.3 748.5L1353.8 747.6L1357.3 747.2L1362.2 745.7L1366.4 747.6L1371.3 746.7L1371.3 744.4L1367.1 741.3L1365.5 739.6L1367.8 735.5L1362.2 737.5L1360.1 740.9L1358.0 736.9L1355.9 738.0L1353.5 740.9L1352.4 745.7L1353.5 747.2L1350.0 747.8L1346.8 748.0L1346.5 749.8L1345.1 748.9L1346.8 753.1L1345.4 755.7L1343.0 754.0L1340.5 747.6L1340.2 745.7L1334.9 742.3L1332.4 739.0L1330.4 739.4L1330.7 741.9L1335.3 745.7L1339.1 749.1L1337.0 748.5L1336.5 751.6L1335.2 753.1L1335.6 749.8L1330.7 746.7L1327.5 743.8L1325.5 741.1L1322.3 743.5L1317.7 743.3L1317.7 746.1L1313.6 749.5L1312.8 752.2L1310.1 755.2L1305.8 756.2L1304.4 755.2Z M1305.5 729.6L1309.0 728.0L1315.0 726.9L1315.6 723.5L1313.5 722.3L1312.5 719.3L1310.8 716.3L1310.4 711.2L1308.3 711.2L1309.0 708.8L1306.2 708.8L1304.8 713.0L1306.2 716.8L1308.7 718.5L1309.0 721.9L1306.9 722.3L1307.2 725.1L1305.9 725.6L1308.3 726.5Z M1299.2 725.6L1304.4 724.7L1304.8 721.6L1305.1 718.8L1302.7 717.3L1299.2 720.0L1300.2 722.8Z M1279.6 688.1L1282.4 693.0L1287.3 694.9L1293.6 691.4L1292.5 686.4L1288.0 685.4L1282.4 685.4Z M1328.6 629.9L1337.0 638.2L1344.0 629.9L1351.0 615.1L1338.4 612.7L1328.6 619.1Z M1386.1 667.2L1391.7 668.5L1394.5 655.7L1408.5 639.4L1405.7 636.3L1393.1 645.2L1386.1 660.5Z M1330.7 753.1L1334.9 752.7L1334.5 755.4L1330.7 754.0Z M1324.8 751.3L1326.8 750.9L1326.6 747.6L1324.8 748.0Z M1325.2 746.7L1326.5 746.7L1326.4 743.8L1325.4 744.8Z M1358.5 758.3L1361.5 757.3L1360.8 758.8L1358.5 758.8Z M1425.0 797.2L1427.8 800.2L1426.7 802.3L1425.3 802.0Z M1495.8 764.5L1497.4 760.8L1496.7 760.0L1499.5 759.5L1503.0 758.8L1504.9 759.1L1507.9 758.3L1510.5 757.1L1511.4 752.2L1512.1 749.5L1511.2 746.9L1509.3 748.2L1509.1 752.2L1505.1 754.8L1503.7 756.6L1499.5 757.4L1496.7 759.1L1494.9 761.2Z M1498.8 761.7L1501.6 760.3L1500.9 759.5L1499.3 760.0Z M1509.3 746.5L1511.4 744.8L1514.2 745.7L1517.0 743.3L1516.3 741.5L1512.1 739.0L1511.4 743.3L1509.3 744.4Z M1512.1 738.0L1514.0 736.9L1513.5 731.1L1515.6 731.7L1513.5 720.0L1512.1 721.6L1512.1 729.6Z M1481.6 777.6L1482.7 774.2L1484.0 774.5L1483.4 777.6L1482.4 779.1Z M1465.5 783.3L1468.0 782.1L1468.7 782.8L1466.9 784.6Z M1481.7 788.0L1482.4 784.3L1484.4 784.5L1484.1 788.0L1483.4 790.9L1486.9 792.3L1486.6 793.0L1483.8 791.6L1482.0 790.6Z M1484.1 800.9L1486.2 798.7L1489.0 797.0L1490.4 800.2L1489.0 802.6L1486.9 801.6Z M1484.1 795.9L1485.5 794.5L1489.0 793.0L1488.7 796.2L1486.9 796.3L1485.5 797.8Z M1477.5 798.7L1480.6 795.9L1480.3 794.8L1477.1 798.3Z M1446.7 802.8L1449.8 803.4L1454.0 807.5L1458.2 812.1L1461.7 815.3L1461.4 818.8L1459.3 818.8L1454.7 814.2L1451.6 808.6L1448.4 805.5Z M1460.6 820.2L1462.4 819.1L1465.2 819.8L1468.4 819.7L1471.1 820.4L1473.6 821.7L1473.6 822.9L1468.7 822.4L1464.5 821.7Z M1465.9 808.6L1468.7 808.3L1471.5 806.2L1475.0 803.7L1477.1 800.9L1479.9 803.4L1478.1 805.8L1479.9 809.3L1477.8 810.0L1476.4 813.5L1475.7 816.3L1473.6 816.3L1471.5 815.2L1469.4 815.3L1467.3 812.5L1465.9 810.3Z M1481.0 809.6L1482.4 808.9L1486.2 809.3L1488.3 808.3L1487.6 810.1L1482.7 810.1L1481.7 812.1L1485.9 812.1L1483.8 813.5L1485.2 817.0L1483.4 817.3L1482.7 814.6L1481.7 814.9L1481.9 818.6L1480.6 818.4L1479.9 815.2Z M1496.7 811.8L1500.9 811.8L1502.3 815.3L1506.5 813.1L1510.7 814.3L1516.3 816.7L1519.8 819.1L1519.1 820.2L1524.1 825.5L1520.5 825.1L1517.7 822.2L1514.9 821.5L1512.8 823.6L1510.7 823.6L1507.9 822.2L1506.5 821.2L1507.2 819.1L1503.7 817.2L1499.5 816.3L1498.1 814.6Z M1486.2 825.2L1488.3 822.9L1491.4 822.5L1488.3 824.5Z M1475.4 822.7L1479.9 822.5L1485.5 822.4L1481.3 824.1L1475.7 823.4Z M1521.2 818.4L1524.8 817.0L1526.6 816.7L1525.5 819.1L1521.9 819.5Z M1472.5 843.1L1473.2 848.4L1471.8 848.4L1475.3 857.2L1474.3 861.9L1478.5 863.1L1481.3 861.4L1486.2 861.4L1489.7 858.6L1493.9 857.6L1497.0 857.2L1500.9 859.4L1503.2 862.8L1503.7 860.9L1506.1 859.2L1505.8 863.1L1508.6 864.8L1510.5 868.3L1514.2 869.8L1516.3 868.7L1518.4 870.1L1523.4 867.4L1524.3 863.1L1525.5 859.7L1527.6 856.4L1528.3 851.6L1527.6 846.9L1524.8 844.6L1521.9 840.1L1518.2 837.8L1517.7 834.9L1516.8 832.0L1514.2 830.9L1512.8 825.9L1511.7 828.4L1511.4 832.7L1509.3 835.8L1506.3 833.4L1503.0 832.0L1504.9 827.9L1502.3 827.9L1498.8 826.6L1496.0 828.4L1494.6 832.0L1492.2 830.9L1489.7 830.5L1486.9 834.1L1484.5 835.6L1484.1 837.1L1480.6 839.3L1476.8 840.2L1473.3 842.0Z M1515.9 873.2L1521.0 873.4L1520.5 877.6L1518.4 878.7L1516.8 876.6Z M1555.2 862.1L1557.4 865.2L1559.5 866.0L1563.3 867.8L1561.2 871.0L1558.7 874.9L1558.1 871.4L1556.7 870.7L1558.1 867.4Z M1555.2 872.9L1557.4 875.1L1555.2 879.1L1552.8 883.2L1549.3 884.7L1546.5 883.0L1549.3 879.5L1552.8 875.7Z M1543.0 839.6L1546.5 842.0L1547.2 842.9L1544.4 841.6Z M1149.3 646.9L1156.3 639.4L1164.7 642.3L1165.4 647.9L1159.1 650.6L1152.1 649.0Z M1167.5 645.2L1173.1 638.2L1177.3 642.3L1175.9 647.9L1170.3 647.9Z M1169.6 660.5L1174.5 653.2L1178.0 658.1L1177.3 665.0L1173.1 665.9Z M1178.7 622.8L1187.1 627.8L1191.3 619.1L1187.1 606.6L1180.1 611.0Z M1191.3 688.1L1195.5 686.4L1200.4 691.4L1199.0 694.6L1193.4 695.2L1191.3 693.0Z M1173.8 674.6L1177.3 672.2L1179.4 675.4L1177.3 677.3Z M1446.3 622.8L1453.3 629.9L1460.3 626.4L1458.9 615.1L1450.5 606.6L1444.9 615.1Z M1505.1 647.9L1512.1 654.2L1523.4 649.0L1520.5 642.3L1509.3 642.3Z M1563.3 667.2L1567.5 668.1L1568.2 665.0L1564.0 664.6Z" fill="none" stroke="#d8dcd8" stroke-width=".5" opacity=".3"/>
<text x="1172" y="717.5" text-anchor="middle" class="mbig">NORTH</text><text x="1172" y="728.5" text-anchor="middle" class="mbig">AMERICA</text>
<text x="1243" y="830.5" text-anchor="middle" class="mbig">SOUTH</text><text x="1243" y="841.5" text-anchor="middle" class="mbig">AMERICA</text>
<text x="1348" y="729" text-anchor="middle" class="mbig">EUROPE</text>
<text x="1348" y="804" text-anchor="middle" class="mbig">AFRICA</text>
<text x="1460" y="719" text-anchor="middle" class="mbig">ASIA</text>
<text x="1511" y="845" text-anchor="middle" class="mbig">AUSTRALIA</text>
<text x="1256" y="765" text-anchor="middle" class="msm">Atlantic</text><text x="1256" y="772" text-anchor="middle" class="msm">Ocean</text>
<text x="1424" y="841" text-anchor="middle" class="msm">Indian</text><text x="1424" y="848" text-anchor="middle" class="msm">Ocean</text>
<path d="M1332.0 724.0L1332.1 724.2L1332.2 724.4L1332.3 724.6L1332.4 724.8L1332.4 725.0L1332.5 725.2L1332.6 725.4L1332.7 725.6L1332.8 725.8L1332.9 726.0L1333.0 726.2L1333.1 726.4L1333.2 726.6L1333.3 726.8L1333.4 727.0L1333.5 727.2L1333.6 727.4L1333.6 727.6L1333.7 727.8L1333.8 728.0L1333.9 728.2L1334.0 728.4L1334.1 728.6L1334.2 728.8L1334.3 729.0L1334.3 729.2L1334.4 729.4L1334.5 729.6L1334.6 729.8L1334.7 730.0L1334.8 730.2L1334.9 730.3L1334.9 730.5L1335.0 730.7L1335.1 730.9L1335.2 731.1L1335.3 731.3L1335.4 731.5L1335.4 731.7L1335.5 731.9L1335.6 732.1L1335.7 732.3L1335.8 732.5L1335.9 732.7L1335.9 732.9L1336.0 733.0L1336.1 733.2L1336.2 733.4 M1332.0 724.0L1331.7 724.0L1331.5 724.0L1331.2 723.9L1331.0 723.9L1330.7 723.9L1330.5 723.9L1330.2 723.9L1330.0 723.9L1329.7 723.9L1329.5 723.9L1329.2 723.9L1329.0 723.9L1328.7 723.9L1328.5 723.9L1328.2 723.9L1328.0 723.9L1327.8 723.9L1327.5 723.9L1327.3 723.9L1327.0 723.9L1326.8 723.9L1326.5 723.9L1326.3 723.9L1326.0 723.9L1325.8 723.9L1325.5 723.9L1325.3 723.9L1325.0 723.9L1324.8 723.9L1324.5 724.0L1324.3 724.0L1324.0 724.0L1323.8 724.0L1323.5 724.0L1323.3 724.0L1323.0 724.0L1322.8 724.0L1322.5 724.0L1322.3 724.1L1322.0 724.1L1321.8 724.1L1321.5 724.1L1321.3 724.1L1321.1 724.1L1320.8 724.1L1320.6 724.2L1320.3 724.2L1320.1 724.2 M1332.0 724.0L1332.2 724.0L1332.4 724.0L1332.6 724.0L1332.9 724.0L1333.1 724.0L1333.3 724.0L1333.5 724.0L1333.8 724.0L1334.0 724.0L1334.2 724.0L1334.4 724.0L1334.6 724.0L1334.9 724.0L1335.1 724.1L1335.3 724.1L1335.5 724.1L1335.8 724.1L1336.0 724.1L1336.2 724.1L1336.4 724.1L1336.6 724.1L1336.9 724.2L1337.1 724.2L1337.3 724.2L1337.5 724.2L1337.8 724.2L1338.0 724.2L1338.2 724.2L1338.4 724.3L1338.6 724.3L1338.9 724.3L1339.1 724.3L1339.3 724.3L1339.5 724.3L1339.8 724.4L1340.0 724.4L1340.2 724.4L1340.4 724.4L1340.6 724.4L1340.9 724.5L1341.1 724.5L1341.3 724.5L1341.5 724.5L1341.7 724.6L1342.0 724.6L1342.2 724.6L1342.4 724.6L1342.6 724.7 M1332.0 724.0L1331.6 724.1L1331.3 724.3L1330.9 724.4L1330.6 724.6L1330.2 724.7L1329.9 724.9L1329.6 725.0L1329.2 725.2L1328.9 725.4L1328.5 725.5L1328.2 725.7L1327.9 725.8L1327.5 726.0L1327.2 726.1L1326.9 726.3L1326.5 726.5L1326.2 726.6L1325.9 726.8L1325.6 727.0L1325.2 727.1L1324.9 727.3L1324.6 727.5L1324.3 727.6L1323.9 727.8L1323.6 728.0L1323.3 728.1L1323.0 728.3L1322.6 728.5L1322.3 728.7L1322.0 728.8L1321.7 729.0L1321.4 729.2L1321.1 729.4L1320.8 729.5L1320.4 729.7L1320.1 729.9L1319.8 730.1L1319.5 730.2L1319.2 730.4L1318.9 730.6L1318.6 730.8L1318.3 731.0L1318.0 731.1L1317.7 731.3L1317.4 731.5L1317.1 731.7L1316.8 731.9L1316.5 732.0 M1332.0 724.0L1331.9 724.5L1331.9 725.0L1331.9 725.5L1331.8 726.0L1331.8 726.5L1331.8 727.0L1331.8 727.5L1331.7 728.0L1331.7 728.4L1331.7 728.9L1331.6 729.4L1331.6 729.9L1331.6 730.4L1331.6 730.9L1331.5 731.3L1331.5 731.8L1331.5 732.3L1331.4 732.7L1331.4 733.2L1331.4 733.7L1331.4 734.1L1331.3 734.6L1331.3 735.0L1331.3 735.5L1331.3 736.0L1331.2 736.4L1331.2 736.9L1331.2 737.3L1331.2 737.8L1331.1 738.2L1331.1 738.6L1331.1 739.1L1331.1 739.5L1331.0 740.0L1331.0 740.4L1331.0 740.8L1331.0 741.3L1330.9 741.7L1330.9 742.1L1330.9 742.6L1330.9 743.0L1330.8 743.4L1330.8 743.8L1330.8 744.3L1330.8 744.7L1330.8 745.1L1330.7 745.5L1330.7 745.9 M1332.0 724.0L1334.6 722.2L1337.3 720.4L1340.2 718.7L1343.1 717.0L1346.2 715.4L1349.3 713.9L1352.5 712.4L1355.8 711.1L1359.3 709.8L1362.8 708.7L1366.4 707.6L1370.0 706.7L1373.8 706.0L1377.6 705.4L1381.4 704.9L1385.3 704.6L1389.1 704.5L1393.0 704.5L1396.9 704.7L1400.7 705.1L1404.5 705.6L1408.3 706.3L1412.0 707.1L1415.7 708.0L1419.2 709.1L1422.7 710.3L1426.1 711.6L1429.4 713.0L1432.6 714.4L1435.7 716.0L1438.7 717.6L1441.6 719.3L1444.4 721.1L1447.1 722.9L1449.7 724.7L1452.2 726.5L1454.6 728.4L1456.9 730.3L1459.2 732.2L1461.4 734.2L1463.4 736.1L1465.5 738.0L1467.4 740.0L1469.3 741.9L1471.1 743.9L1472.9 745.8L1474.6 747.7L1476.3 749.6 M1332.0 724.0L1331.6 724.0L1331.2 724.0L1330.8 724.0L1330.4 724.0L1330.0 724.0L1329.6 724.1L1329.2 724.1L1328.8 724.1L1328.4 724.1L1328.0 724.2L1327.6 724.2L1327.2 724.2L1326.8 724.2L1326.4 724.3L1326.0 724.3L1325.6 724.3L1325.2 724.4L1324.8 724.4L1324.4 724.5L1324.0 724.5L1323.6 724.5L1323.2 724.6L1322.8 724.6L1322.4 724.7L1322.0 724.7L1321.6 724.8L1321.2 724.8L1320.8 724.9L1320.4 724.9L1320.0 725.0L1319.7 725.0L1319.3 725.1L1318.9 725.2L1318.5 725.2L1318.1 725.3L1317.7 725.4L1317.3 725.4L1316.9 725.5L1316.5 725.6L1316.1 725.6L1315.8 725.7L1315.4 725.8L1315.0 725.9L1314.6 725.9L1314.2 726.0L1313.8 726.1L1313.4 726.2L1313.1 726.2 M1332.0 724.0L1329.3 722.7L1326.7 721.5L1323.9 720.4L1321.1 719.3L1318.2 718.3L1315.3 717.3L1312.3 716.5L1309.3 715.7L1306.2 715.1L1303.1 714.5L1299.9 714.0L1296.7 713.6L1293.5 713.4L1290.3 713.2L1287.0 713.1L1283.8 713.2L1280.6 713.4L1277.4 713.6L1274.2 714.0L1271.0 714.5L1267.9 715.1L1264.8 715.7L1261.8 716.5L1258.8 717.3L1255.9 718.3L1253.0 719.3L1250.2 720.4L1247.4 721.5L1244.8 722.7L1242.1 724.0L1239.6 725.3L1237.1 726.7L1234.7 728.1L1232.3 729.5L1230.0 731.0L1227.8 732.4L1225.6 734.0L1223.5 735.5L1221.4 737.1L1219.4 738.6L1217.5 740.2L1215.6 741.8L1213.8 743.4L1212.0 745.0L1210.3 746.6L1208.6 748.2L1206.9 749.8L1205.3 751.5 M1205.3 751.5L1205.4 751.2L1205.4 751.0L1205.4 750.7L1205.5 750.5L1205.5 750.2L1205.5 750.0L1205.6 749.7L1205.6 749.5L1205.6 749.2L1205.7 749.0L1205.7 748.7L1205.7 748.5L1205.8 748.2L1205.8 748.0L1205.9 747.7L1205.9 747.5L1205.9 747.2L1206.0 747.0L1206.0 746.7L1206.0 746.5L1206.1 746.2L1206.1 746.0L1206.1 745.7L1206.2 745.5L1206.2 745.2L1206.3 744.9L1206.3 744.7L1206.3 744.4L1206.4 744.2L1206.4 743.9L1206.5 743.7L1206.5 743.4L1206.5 743.1L1206.6 742.9L1206.6 742.6L1206.7 742.3L1206.7 742.1L1206.7 741.8L1206.8 741.6L1206.8 741.3L1206.9 741.0L1206.9 740.8L1206.9 740.5L1207.0 740.2L1207.0 740.0L1207.1 739.7L1207.1 739.4L1207.1 739.2 M1205.3 751.5L1203.5 748.2L1201.5 744.9L1199.5 741.6L1197.3 738.2L1194.9 734.7L1192.5 731.2L1189.8 727.6L1187.0 723.9L1183.9 720.3L1180.6 716.5L1177.1 712.8L1173.2 709.0L1169.0 705.3L1164.5 701.6L1159.6 698.1L1154.4 694.6L1148.7 691.4L1142.6 688.5L1136.1 685.9L1129.3 683.8L1122.1 682.2L1114.8 681.2L1107.3 680.8L1099.8 681.1L1092.4 681.9L1085.2 683.4L1078.3 685.4L1071.7 687.9L1065.6 690.8L1059.8 693.9L1054.4 697.3L1049.5 700.9L1044.9 704.5L1040.6 708.2L1036.7 712.0L1033.1 715.7L1029.7 719.5L1026.6 723.2L1023.7 726.8L1021.1 730.4L1018.5 734.0L1016.2 737.4L1014.0 740.9L1011.9 744.2L1009.9 747.5L1008.0 750.8L1006.3 754.0L1004.6 757.1 M1709.7 751.5L1707.8 748.2L1705.9 744.9L1703.8 741.6L1701.6 738.2L1699.3 734.7L1696.8 731.2L1694.2 727.6L1691.3 723.9L1688.3 720.3L1685.0 716.5L1681.4 712.8L1677.6 709.0L1673.4 705.3L1668.9 701.6L1664.0 698.1L1658.7 694.6L1653.0 691.4L1646.9 688.5L1640.5 685.9L1633.6 683.8L1626.5 682.2L1619.1 681.2L1611.6 680.8L1604.2 681.1L1596.8 681.9L1589.6 683.4L1582.7 685.4L1576.1 687.9L1569.9 690.8L1564.2 693.9L1558.8 697.3L1553.8 700.9L1549.2 704.5L1545.0 708.2L1541.1 712.0L1537.5 715.7L1534.1 719.5L1531.0 723.2L1528.1 726.8L1525.4 730.4L1522.9 734.0L1520.5 737.4L1518.3 740.9L1516.2 744.2L1514.3 747.5L1512.4 750.8L1510.6 754.0L1508.9 757.1 M1205.3 751.5L1204.6 747.7L1203.9 743.8L1203.1 739.8L1202.2 735.7L1201.3 731.4L1200.3 727.0L1199.2 722.3L1198.0 717.5L1196.7 712.4L1195.2 707.0L1193.5 701.3L1191.6 695.4L1189.4 689.0L1186.9 682.2L1183.9 674.9L1180.3 667.1L1176.0 658.6L1170.7 649.6L1164.1 639.9L1155.6 629.7L1144.8 619.3L1130.8 609.6L1113.5 601.9L1093.5 598.1L1072.9 599.5L1054.1 605.5L1038.5 614.4L1026.2 624.6L1016.7 635.0L1009.2 644.9L1003.3 654.3L998.5 663.0L994.7 671.1L991.4 678.7L988.7 685.7L986.3 692.3L984.3 698.5L982.5 704.3L980.9 709.8L979.5 715.0L978.3 720.0L977.1 724.7L976.1 729.3L975.1 733.6L974.2 737.9L973.4 741.9L972.6 745.8L971.9 749.6 M1709.7 751.5L1709.0 747.7L1708.2 743.8L1707.4 739.8L1706.6 735.7L1705.7 731.4L1704.7 727.0L1703.6 722.3L1702.4 717.5L1701.0 712.4L1699.5 707.0L1697.9 701.3L1696.0 695.4L1693.8 689.0L1691.2 682.2L1688.3 674.9L1684.7 667.1L1680.4 658.6L1675.1 649.6L1668.5 639.9L1660.0 629.7L1649.1 619.3L1635.2 609.6L1617.9 601.9L1597.9 598.1L1577.3 599.5L1558.5 605.5L1542.9 614.4L1530.6 624.6L1521.0 635.0L1513.6 644.9L1507.7 654.3L1502.9 663.0L1499.0 671.1L1495.8 678.7L1493.0 685.7L1490.7 692.3L1488.7 698.5L1486.9 704.3L1485.3 709.8L1483.9 715.0L1482.6 720.0L1481.5 724.7L1480.4 729.3L1479.5 733.6L1478.6 737.9L1477.8 741.9L1477.0 745.8L1476.3 749.6 M1205.3 751.5L1204.5 752.1L1203.8 752.8L1203.0 753.4L1202.2 754.1L1201.5 754.7L1200.7 755.4L1200.0 756.0L1199.2 756.7L1198.5 757.3L1197.8 758.0L1197.1 758.7L1196.4 759.3L1195.7 760.0L1195.0 760.6L1194.3 761.3L1193.6 762.0L1192.9 762.6L1192.2 763.3L1191.6 763.9L1190.9 764.6L1190.3 765.3L1189.6 765.9L1189.0 766.6L1188.3 767.2L1187.7 767.9L1187.1 768.6L1186.5 769.2L1185.8 769.9L1185.2 770.5L1184.6 771.2L1184.0 771.9L1183.4 772.5L1182.8 773.2L1182.2 773.8L1181.6 774.5L1181.1 775.1L1180.5 775.8L1179.9 776.5L1179.3 777.1L1178.8 777.8L1178.2 778.4L1177.7 779.1L1177.1 779.7L1176.5 780.4L1176.0 781.0L1175.4 781.7L1174.9 782.3L1174.4 783.0 M1522.1 863.6L1519.3 861.8L1516.7 859.9L1514.1 858.0L1511.5 856.1L1509.0 854.2L1506.6 852.2L1504.2 850.3L1501.9 848.3L1499.7 846.3L1497.4 844.3L1495.3 842.4L1493.1 840.4L1491.0 838.4L1489.0 836.4L1486.9 834.4L1484.9 832.4L1482.9 830.4L1481.0 828.4L1479.0 826.4L1477.1 824.5L1475.2 822.5L1473.3 820.5L1471.5 818.5L1469.6 816.5L1467.7 814.5L1465.9 812.5L1464.0 810.5L1462.2 808.5L1460.3 806.6L1458.5 804.6L1456.6 802.6L1454.7 800.6L1452.8 798.6L1450.9 796.6L1449.0 794.6L1447.1 792.6L1445.1 790.6L1443.1 788.7L1441.1 786.7L1439.1 784.7L1437.0 782.7L1434.9 780.7L1432.7 778.7L1430.6 776.7L1428.3 774.7L1426.1 772.8L1423.7 770.8L1421.4 768.9 M1522.1 863.6L1521.3 861.1L1520.5 858.5L1519.7 856.1L1519.0 853.6L1518.3 851.2L1517.6 848.8L1516.9 846.5L1516.2 844.2L1515.6 841.9L1514.9 839.6L1514.3 837.3L1513.7 835.1L1513.1 832.9L1512.5 830.6L1511.9 828.4L1511.3 826.3L1510.8 824.1L1510.2 821.9L1509.6 819.8L1509.1 817.6L1508.5 815.5L1508.0 813.3L1507.4 811.2L1506.8 809.1L1506.3 806.9L1505.7 804.8L1505.2 802.6L1504.6 800.5L1504.0 798.3L1503.5 796.1L1502.9 794.0L1502.3 791.8L1501.7 789.6L1501.1 787.4L1500.5 785.1L1499.9 782.9L1499.3 780.6L1498.6 778.3L1498.0 776.0L1497.3 773.7L1496.6 771.3L1495.9 768.9L1495.2 766.5L1494.4 764.0L1493.6 761.5L1492.8 759.0L1492.0 756.4L1491.1 753.8 M1522.1 863.6L1521.7 861.1L1521.4 858.6L1521.1 856.2L1520.8 853.8L1520.4 851.5L1520.1 849.1L1519.8 846.8L1519.6 844.6L1519.3 842.3L1519.0 840.1L1518.7 837.9L1518.5 835.7L1518.2 833.5L1518.0 831.4L1517.7 829.2L1517.5 827.1L1517.2 825.0L1517.0 822.9L1516.7 820.8L1516.5 818.7L1516.2 816.6L1516.0 814.6L1515.8 812.5L1515.5 810.4L1515.3 808.3L1515.0 806.3L1514.8 804.2L1514.6 802.1L1514.3 800.0L1514.1 797.9L1513.8 795.8L1513.6 793.7L1513.3 791.6L1513.1 789.4L1512.8 787.3L1512.6 785.1L1512.3 782.9L1512.0 780.7L1511.8 778.5L1511.5 776.2L1511.2 774.0L1510.9 771.6L1510.6 769.3L1510.3 766.9L1509.9 764.5L1509.6 762.1L1509.3 759.6L1508.9 757.1 M1522.1 863.6L1520.9 861.0L1519.7 858.4L1518.6 855.9L1517.6 853.4L1516.5 850.9L1515.5 848.5L1514.5 846.0L1513.5 843.7L1512.6 841.3L1511.7 838.9L1510.8 836.6L1509.9 834.3L1509.0 832.0L1508.1 829.7L1507.3 827.4L1506.4 825.2L1505.6 822.9L1504.8 820.7L1504.0 818.5L1503.2 816.2L1502.3 814.0L1501.5 811.8L1500.7 809.6L1499.9 807.3L1499.1 805.1L1498.3 802.9L1497.5 800.7L1496.6 798.4L1495.8 796.2L1495.0 793.9L1494.1 791.6L1493.3 789.4L1492.4 787.1L1491.5 784.7L1490.6 782.4L1489.7 780.1L1488.7 777.7L1487.7 775.3L1486.8 772.9L1485.7 770.4L1484.7 768.0L1483.6 765.4L1482.5 762.9L1481.3 760.3L1480.2 757.7L1478.9 755.1L1477.6 752.4L1476.3 749.6 M1246.1 833.1L1248.1 829.0L1250.1 824.9L1252.1 820.9L1254.0 816.9L1255.9 812.8L1257.8 808.8L1259.7 804.8L1261.7 800.8L1263.6 796.7L1265.6 792.6L1267.6 788.5L1269.7 784.4L1271.9 780.2L1274.1 775.9L1276.5 771.6L1278.9 767.2L1281.5 762.7L1284.3 758.1L1287.3 753.4L1290.4 748.7L1293.9 743.8L1297.6 738.8L1301.7 733.8L1306.1 728.6L1311.1 723.5L1316.6 718.3L1322.7 713.2L1329.4 708.3L1336.9 703.7L1345.1 699.5L1354.1 696.0L1363.7 693.3L1373.8 691.7L1384.1 691.2L1394.4 691.9L1404.3 693.8L1413.8 696.7L1422.6 700.3L1430.7 704.6L1438.1 709.3L1444.7 714.3L1450.6 719.4L1456.0 724.5L1460.8 729.7L1465.2 734.8L1469.2 739.8L1472.9 744.8L1476.3 749.6 M1246.1 833.1L1245.3 831.5L1244.5 829.8L1243.7 828.1L1243.0 826.5L1242.2 824.8L1241.4 823.2L1240.7 821.6L1239.9 819.9L1239.2 818.3L1238.4 816.7L1237.7 815.1L1236.9 813.4L1236.2 811.8L1235.4 810.2L1234.7 808.6L1234.0 806.9L1233.2 805.3L1232.5 803.7L1231.7 802.1L1231.0 800.4L1230.2 798.8L1229.4 797.2L1228.7 795.5L1227.9 793.9L1227.1 792.2L1226.3 790.6L1225.6 788.9L1224.7 787.2L1223.9 785.6L1223.1 783.9L1222.3 782.2L1221.4 780.5L1220.6 778.7L1219.7 777.0L1218.8 775.3L1217.9 773.5L1217.0 771.8L1216.1 770.0L1215.1 768.2L1214.1 766.4L1213.1 764.6L1212.1 762.8L1211.0 760.9L1209.9 759.1L1208.8 757.2L1207.7 755.3L1206.5 753.4L1205.3 751.5 M1508.9 757.1L1508.6 757.0L1508.2 756.9L1507.8 756.8L1507.5 756.7L1507.1 756.6L1506.7 756.6L1506.4 756.5L1506.0 756.4L1505.7 756.3L1505.3 756.2L1504.9 756.1L1504.6 756.1L1504.2 756.0L1503.8 755.9L1503.5 755.8L1503.1 755.7L1502.7 755.7L1502.4 755.6L1502.0 755.5L1501.6 755.4L1501.2 755.4L1500.9 755.3L1500.5 755.2L1500.1 755.1L1499.8 755.1L1499.4 755.0L1499.0 754.9L1498.6 754.9L1498.3 754.8L1497.9 754.8L1497.5 754.7L1497.2 754.6L1496.8 754.6L1496.4 754.5L1496.0 754.4L1495.7 754.4L1495.3 754.3L1494.9 754.3L1494.5 754.2L1494.1 754.2L1493.8 754.1L1493.4 754.1L1493.0 754.0L1492.6 754.0L1492.3 753.9L1491.9 753.9L1491.5 753.8L1491.1 753.8 M1508.9 757.1L1508.3 757.4L1507.7 757.8L1507.2 758.1L1506.6 758.4L1506.0 758.8L1505.4 759.1L1504.8 759.5L1504.3 759.8L1503.7 760.2L1503.1 760.5L1502.6 760.9L1502.0 761.2L1501.4 761.6L1500.9 761.9L1500.3 762.3L1499.8 762.6L1499.2 763.0L1498.7 763.4L1498.1 763.7L1497.6 764.1L1497.1 764.4L1496.5 764.8L1496.0 765.2L1495.5 765.5L1494.9 765.9L1494.4 766.3L1493.9 766.6L1493.4 767.0L1492.8 767.4L1492.3 767.7L1491.8 768.1L1491.3 768.5L1490.8 768.8L1490.3 769.2L1489.8 769.6L1489.3 770.0L1488.8 770.3L1488.3 770.7L1487.8 771.1L1487.3 771.5L1486.8 771.9L1486.3 772.2L1485.8 772.6L1485.3 773.0L1484.9 773.4L1484.4 773.7L1483.9 774.1L1483.4 774.5 M1508.9 757.1L1508.3 756.9L1507.6 756.6L1507.0 756.4L1506.4 756.2L1505.7 756.0L1505.1 755.8L1504.4 755.5L1503.8 755.3L1503.1 755.1L1502.5 754.9L1501.8 754.7L1501.1 754.5L1500.5 754.3L1499.8 754.1L1499.1 754.0L1498.5 753.8L1497.8 753.6L1497.1 753.4L1496.5 753.2L1495.8 753.1L1495.1 752.9L1494.4 752.7L1493.8 752.6L1493.1 752.4L1492.4 752.2L1491.7 752.1L1491.0 751.9L1490.3 751.8L1489.6 751.6L1488.9 751.5L1488.2 751.4L1487.6 751.2L1486.9 751.1L1486.2 751.0L1485.5 750.9L1484.8 750.7L1484.1 750.6L1483.4 750.5L1482.7 750.4L1482.0 750.3L1481.2 750.2L1480.5 750.1L1479.8 750.0L1479.1 749.9L1478.4 749.9L1477.7 749.8L1477.0 749.7L1476.3 749.6 M1313.1 726.2L1312.9 726.2L1312.7 726.1L1312.5 726.0L1312.4 725.9L1312.2 725.8L1312.0 725.7L1311.8 725.6L1311.7 725.5L1311.5 725.4L1311.3 725.3L1311.1 725.3L1311.0 725.2L1310.8 725.1L1310.6 725.0L1310.4 724.9L1310.2 724.8L1310.1 724.7L1309.9 724.6L1309.7 724.5L1309.5 724.5L1309.3 724.4L1309.2 724.3L1309.0 724.2L1308.8 724.1L1308.6 724.0L1308.4 723.9L1308.3 723.9L1308.1 723.8L1307.9 723.7L1307.7 723.6L1307.5 723.5L1307.3 723.4L1307.2 723.3L1307.0 723.3L1306.8 723.2L1306.6 723.1L1306.4 723.0L1306.2 722.9L1306.1 722.8L1305.9 722.8L1305.7 722.7L1305.5 722.6L1305.3 722.5L1305.1 722.4L1304.9 722.4L1304.7 722.3L1304.6 722.2L1304.4 722.1 M1313.1 726.2L1313.2 726.2L1313.3 726.2L1313.5 726.1L1313.6 726.1L1313.8 726.0L1313.9 726.0L1314.1 725.9L1314.2 725.9L1314.4 725.8L1314.5 725.8L1314.6 725.7L1314.8 725.7L1314.9 725.7L1315.1 725.6L1315.2 725.6L1315.4 725.5L1315.5 725.5L1315.7 725.4L1315.8 725.4L1315.9 725.3L1316.1 725.3L1316.2 725.3L1316.4 725.2L1316.5 725.2L1316.7 725.1L1316.8 725.1L1317.0 725.0L1317.1 725.0L1317.3 725.0L1317.4 724.9L1317.6 724.9L1317.7 724.8L1317.8 724.8L1318.0 724.8L1318.1 724.7L1318.3 724.7L1318.4 724.6L1318.6 724.6L1318.7 724.6L1318.9 724.5L1319.0 724.5L1319.2 724.4L1319.3 724.4L1319.5 724.4L1319.6 724.3L1319.8 724.3L1319.9 724.2L1320.1 724.2 M1313.1 726.2L1313.1 726.4L1313.2 726.5L1313.3 726.6L1313.4 726.7L1313.4 726.9L1313.5 727.0L1313.6 727.1L1313.7 727.2L1313.7 727.4L1313.8 727.5L1313.9 727.6L1314.0 727.7L1314.0 727.8L1314.1 728.0L1314.2 728.1L1314.2 728.2L1314.3 728.3L1314.4 728.4L1314.5 728.6L1314.5 728.7L1314.6 728.8L1314.7 728.9L1314.8 729.1L1314.8 729.2L1314.9 729.3L1315.0 729.4L1315.0 729.5L1315.1 729.7L1315.2 729.8L1315.2 729.9L1315.3 730.0L1315.4 730.1L1315.5 730.3L1315.5 730.4L1315.6 730.5L1315.7 730.6L1315.7 730.7L1315.8 730.9L1315.9 731.0L1315.9 731.1L1316.0 731.2L1316.1 731.3L1316.2 731.5L1316.2 731.6L1316.3 731.7L1316.4 731.8L1316.4 731.9L1316.5 732.0 M1313.1 726.2L1315.6 723.9L1318.2 721.5L1321.0 719.1L1323.9 716.8L1326.9 714.5L1330.1 712.2L1333.5 710.0L1337.0 707.9L1340.7 705.9L1344.5 704.0L1348.5 702.2L1352.6 700.5L1356.9 699.1L1361.3 697.8L1365.8 696.7L1370.4 695.8L1375.1 695.2L1379.9 694.8L1384.7 694.7L1389.4 694.8L1394.2 695.2L1398.9 695.8L1403.5 696.6L1408.0 697.7L1412.5 699.0L1416.7 700.5L1420.9 702.1L1424.9 703.9L1428.7 705.8L1432.3 707.8L1435.9 710.0L1439.2 712.2L1442.4 714.4L1445.5 716.7L1448.4 719.0L1451.1 721.4L1453.8 723.8L1456.3 726.2L1458.7 728.6L1461.0 731.0L1463.2 733.3L1465.3 735.7L1467.3 738.1L1469.3 740.4L1471.1 742.8L1472.9 745.1L1474.6 747.4L1476.3 749.6 M1313.1 726.2L1310.7 725.5L1308.3 724.8L1305.8 724.1L1303.4 723.5L1300.8 723.0L1298.3 722.5L1295.8 722.1L1293.2 721.7L1290.6 721.4L1288.0 721.2L1285.4 721.0L1282.8 720.9L1280.2 720.9L1277.5 721.0L1274.9 721.1L1272.3 721.3L1269.7 721.5L1267.1 721.9L1264.6 722.2L1262.0 722.7L1259.5 723.2L1257.0 723.8L1254.6 724.4L1252.1 725.1L1249.7 725.8L1247.4 726.6L1245.0 727.4L1242.8 728.3L1240.5 729.2L1238.3 730.2L1236.1 731.2L1234.0 732.2L1231.9 733.2L1229.9 734.3L1227.9 735.4L1225.9 736.6L1224.0 737.7L1222.1 738.9L1220.3 740.1L1218.5 741.3L1216.7 742.6L1215.0 743.8L1213.3 745.1L1211.6 746.3L1210.0 747.6L1208.4 748.9L1206.8 750.2L1205.3 751.5 M1330.7 745.9L1330.2 745.9L1329.8 746.0L1329.3 746.0L1328.8 746.0L1328.3 746.0L1327.8 746.1L1327.3 746.1L1326.9 746.1L1326.4 746.1L1325.9 746.2L1325.4 746.2L1325.0 746.2L1324.5 746.3L1324.0 746.3L1323.5 746.4L1323.0 746.4L1322.6 746.4L1322.1 746.5L1321.6 746.5L1321.1 746.6L1320.7 746.6L1320.2 746.7L1319.7 746.8L1319.2 746.8L1318.8 746.9L1318.3 746.9L1317.8 747.0L1317.3 747.1L1316.9 747.1L1316.4 747.2L1315.9 747.3L1315.5 747.3L1315.0 747.4L1314.5 747.5L1314.0 747.6L1313.6 747.6L1313.1 747.7L1312.6 747.8L1312.2 747.9L1311.7 748.0L1311.3 748.1L1310.8 748.2L1310.3 748.2L1309.9 748.3L1309.4 748.4L1308.9 748.5L1308.5 748.6L1308.0 748.7 M1330.7 745.9L1330.5 745.6L1330.2 745.4L1329.9 745.1L1329.7 744.8L1329.4 744.5L1329.1 744.2L1328.8 743.9L1328.6 743.6L1328.3 743.3L1328.0 743.0L1327.8 742.8L1327.5 742.5L1327.2 742.2L1326.9 741.9L1326.6 741.6L1326.4 741.3L1326.1 741.0L1325.8 740.7L1325.5 740.4L1325.2 740.1L1324.9 739.9L1324.6 739.6L1324.3 739.3L1324.0 739.0L1323.7 738.7L1323.4 738.4L1323.1 738.1L1322.8 737.8L1322.5 737.5L1322.2 737.2L1321.9 737.0L1321.6 736.7L1321.3 736.4L1321.0 736.1L1320.7 735.8L1320.4 735.5L1320.1 735.2L1319.8 734.9L1319.4 734.6L1319.1 734.3L1318.8 734.1L1318.5 733.8L1318.1 733.5L1317.8 733.2L1317.5 732.9L1317.2 732.6L1316.8 732.3L1316.5 732.0 M1330.7 745.9L1330.4 745.5L1330.1 745.1L1329.8 744.7L1329.5 744.3L1329.1 743.9L1328.8 743.5L1328.5 743.1L1328.2 742.7L1327.9 742.3L1327.5 741.9L1327.2 741.5L1326.9 741.1L1326.5 740.7L1326.2 740.3L1325.9 739.9L1325.5 739.5L1325.2 739.1L1324.8 738.6L1324.5 738.2L1324.1 737.8L1323.8 737.4L1323.4 737.0L1323.0 736.6L1322.7 736.2L1322.3 735.8L1321.9 735.4L1321.6 734.9L1321.2 734.5L1320.8 734.1L1320.4 733.7L1320.1 733.3L1319.7 732.9L1319.3 732.5L1318.9 732.1L1318.5 731.6L1318.1 731.2L1317.7 730.8L1317.3 730.4L1316.9 730.0L1316.5 729.6L1316.1 729.1L1315.6 728.7L1315.2 728.3L1314.8 727.9L1314.4 727.5L1313.9 727.1L1313.5 726.7L1313.1 726.2 M1330.7 745.9L1328.5 744.6L1326.2 743.4L1323.9 742.2L1321.6 741.0L1319.2 739.8L1316.7 738.7L1314.2 737.6L1311.7 736.6L1309.1 735.6L1306.4 734.7L1303.8 733.8L1301.0 733.1L1298.3 732.3L1295.5 731.6L1292.6 731.1L1289.8 730.5L1286.9 730.1L1284.0 729.7L1281.0 729.4L1278.1 729.2L1275.1 729.1L1272.2 729.1L1269.2 729.1L1266.2 729.2L1263.3 729.5L1260.4 729.8L1257.5 730.1L1254.6 730.6L1251.7 731.1L1248.9 731.7L1246.1 732.4L1243.3 733.1L1240.6 733.9L1237.9 734.8L1235.3 735.7L1232.7 736.7L1230.1 737.7L1227.6 738.8L1225.2 739.9L1222.8 741.1L1220.4 742.3L1218.1 743.5L1215.9 744.8L1213.7 746.1L1211.5 747.4L1209.4 748.7L1207.3 750.1L1205.3 751.5 M1316.5 732.0L1316.5 732.0L1316.6 731.9L1316.7 731.8L1316.7 731.7L1316.8 731.6L1316.8 731.5L1316.9 731.4L1316.9 731.3L1317.0 731.2L1317.1 731.2L1317.1 731.1L1317.2 731.0L1317.2 730.9L1317.3 730.8L1317.3 730.7L1317.4 730.6L1317.5 730.5L1317.5 730.4L1317.6 730.3L1317.6 730.2L1317.7 730.2L1317.7 730.1L1317.8 730.0L1317.9 729.9L1317.9 729.8L1318.0 729.7L1318.0 729.6L1318.1 729.5L1318.2 729.4L1318.2 729.3L1318.3 729.3L1318.3 729.2L1318.4 729.1L1318.5 729.0L1318.5 728.9L1318.6 728.8L1318.6 728.7L1318.7 728.6L1318.8 728.5L1318.8 728.4L1318.9 728.3L1318.9 728.3L1319.0 728.2L1319.1 728.1L1319.1 728.0L1319.2 727.9L1319.2 727.8L1319.3 727.7 M1316.5 732.0L1316.3 732.4L1316.1 732.8L1315.9 733.1L1315.7 733.5L1315.5 733.9L1315.3 734.2L1315.1 734.6L1314.9 735.0L1314.7 735.3L1314.5 735.7L1314.3 736.0L1314.1 736.4L1313.9 736.7L1313.8 737.1L1313.6 737.5L1313.4 737.8L1313.2 738.2L1313.0 738.5L1312.8 738.9L1312.7 739.2L1312.5 739.6L1312.3 739.9L1312.1 740.3L1311.9 740.6L1311.8 741.0L1311.6 741.3L1311.4 741.7L1311.3 742.0L1311.1 742.3L1310.9 742.7L1310.7 743.0L1310.6 743.4L1310.4 743.7L1310.2 744.0L1310.1 744.4L1309.9 744.7L1309.8 745.1L1309.6 745.4L1309.4 745.7L1309.3 746.1L1309.1 746.4L1308.9 746.7L1308.8 747.1L1308.6 747.4L1308.5 747.7L1308.3 748.1L1308.2 748.4L1308.0 748.7 M1316.5 732.0L1314.2 731.2L1311.8 730.3L1309.5 729.5L1307.1 728.8L1304.6 728.1L1302.1 727.4L1299.6 726.8L1297.1 726.3L1294.5 725.8L1291.9 725.4L1289.3 725.1L1286.7 724.8L1284.1 724.6L1281.5 724.5L1278.8 724.4L1276.2 724.4L1273.5 724.5L1270.9 724.6L1268.2 724.8L1265.6 725.1L1263.0 725.4L1260.4 725.8L1257.9 726.3L1255.3 726.8L1252.8 727.4L1250.4 728.0L1247.9 728.7L1245.5 729.5L1243.1 730.3L1240.8 731.1L1238.5 732.0L1236.2 732.9L1234.0 733.9L1231.8 734.9L1229.6 735.9L1227.5 737.0L1225.5 738.1L1223.4 739.2L1221.5 740.4L1219.5 741.5L1217.6 742.7L1215.7 743.9L1213.9 745.1L1212.1 746.4L1210.4 747.6L1208.7 748.9L1207.0 750.2L1205.3 751.5 M1476.3 749.6L1476.2 750.3L1476.1 751.0L1476.0 751.6L1476.0 752.3L1475.9 752.9L1475.8 753.6L1475.7 754.2L1475.7 754.9L1475.6 755.5L1475.5 756.2L1475.5 756.8L1475.4 757.4L1475.3 758.1L1475.2 758.7L1475.2 759.3L1475.1 759.9L1475.0 760.6L1475.0 761.2L1474.9 761.8L1474.8 762.4L1474.8 763.0L1474.7 763.6L1474.7 764.2L1474.6 764.8L1474.5 765.4L1474.5 766.0L1474.4 766.6L1474.3 767.2L1474.3 767.8L1474.2 768.4L1474.2 769.0L1474.1 769.5L1474.0 770.1L1474.0 770.7L1473.9 771.3L1473.9 771.9L1473.8 772.4L1473.8 773.0L1473.7 773.6L1473.6 774.1L1473.6 774.7L1473.5 775.3L1473.5 775.8L1473.4 776.4L1473.4 777.0L1473.3 777.5L1473.2 778.1L1473.2 778.6" fill="none" stroke="#efc050" stroke-width="1.250" opacity=".92"/>
<rect x="1233" y="904" width="321" height="13" fill="#f0f0f0" opacity=".95"/>
<text x="1238" y="914" font-size="7" fill="#666" font-family="Liberation Sans,sans-serif"><tspan font-weight="bold" fill="#555">b</tspan> bing</text>
<text x="1552.300" y="914.500" text-anchor="end" font-size="10.500" fill="#222" font-family="Liberation Sans,sans-serif" textLength="292" lengthAdjust="spacingAndGlyphs">Copyright © 2021 Microsoft and its suppliers. All rights reserved.</text>
</svg>
<div id="winb"></div><div id="winr"></div>
</body></html>
